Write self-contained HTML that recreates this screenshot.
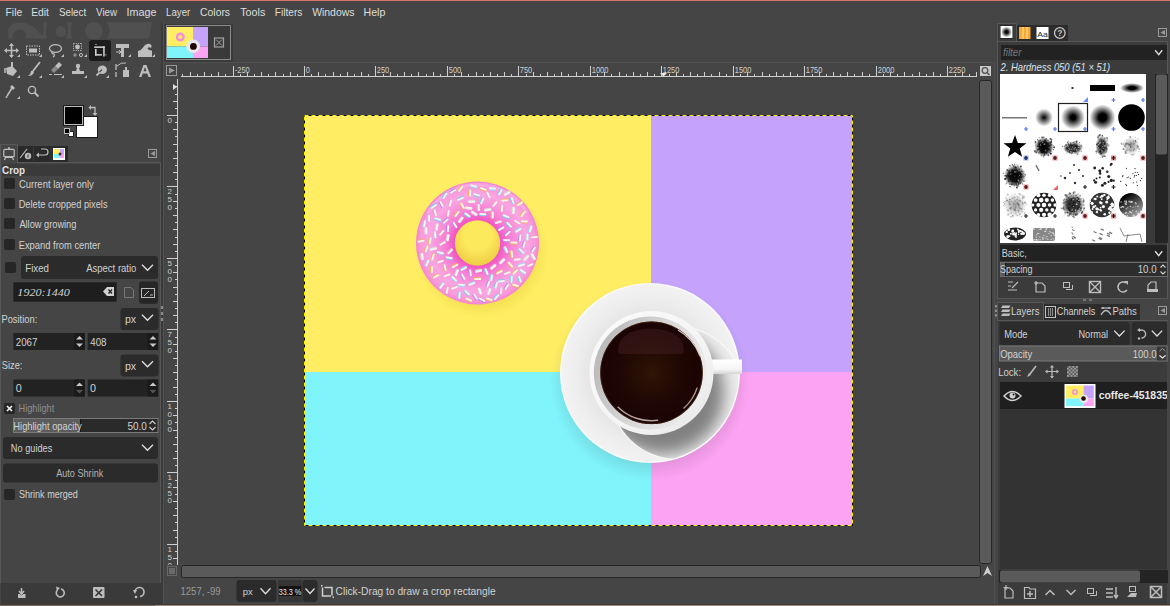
<!DOCTYPE html>
<html><head><meta charset="utf-8">
<style>
html,body{margin:0;padding:0;background:#454545;width:1170px;height:606px;overflow:hidden}
svg{display:block}
text{font-family:"Liberation Sans",sans-serif}
</style></head><body>
<svg width="1170" height="606" viewBox="0 0 1170 606">
<rect x="0" y="0" width="1170" height="606" fill="#454545" />
<rect x="0" y="0" width="1170" height="1" fill="#d4746a" />
<rect x="0" y="604" width="1170" height="1" fill="#3c3c3c" />
<rect x="0" y="605" width="1170" height="1" fill="#a4876e" />
<rect x="0" y="605" width="155" height="1" fill="#7e6654" />
<text x="5.58" y="16" font-size="11" fill="#dedede" textLength="16.6" lengthAdjust="spacingAndGlyphs" >File</text>
<text x="31.17" y="16" font-size="11" fill="#dedede" textLength="17.81" lengthAdjust="spacingAndGlyphs" >Edit</text>
<text x="58.96" y="16" font-size="11" fill="#dedede" textLength="27.23" lengthAdjust="spacingAndGlyphs" >Select</text>
<text x="96.05" y="16" font-size="11" fill="#dedede" textLength="21.14" lengthAdjust="spacingAndGlyphs" >View</text>
<text x="126.53" y="16" font-size="11" fill="#dedede" textLength="29.84" lengthAdjust="spacingAndGlyphs" >Image</text>
<text x="166.02" y="16" font-size="11" fill="#dedede" textLength="24.24" lengthAdjust="spacingAndGlyphs" >Layer</text>
<text x="200.08" y="16" font-size="11" fill="#dedede" textLength="29.98" lengthAdjust="spacingAndGlyphs" >Colors</text>
<text x="240.19" y="16" font-size="11" fill="#dedede" textLength="25.09" lengthAdjust="spacingAndGlyphs" >Tools</text>
<text x="274.69" y="16" font-size="11" fill="#dedede" textLength="27.69" lengthAdjust="spacingAndGlyphs" >Filters</text>
<text x="312.15" y="16" font-size="11" fill="#dedede" textLength="42.34" lengthAdjust="spacingAndGlyphs" >Windows</text>
<text x="363.55" y="16" font-size="11" fill="#dedede" textLength="21.79" lengthAdjust="spacingAndGlyphs" >Help</text>
<path d="M8.2,38.5 V31 Q8.5,22.4 21,22.4 Q31,22.4 41,34.4 L44,38.5 Z" fill="#505050"/>
<circle cx="19.5" cy="36.2" r="6.8" fill="#454545"/>
<path d="M43,22.4 H47.3 Q44.6,30 46.8,38.5 H41.5 Q45,30 43,22.4 Z" fill="#505050"/>
<circle cx="60.9" cy="31.6" r="5.5" fill="#505050"/>
<path d="M66.7,22.4 H72.5 Q69,30 72.5,38.5 H66.2 Q69.6,30 66.7,22.4 Z" fill="#505050"/>
<path d="M106.2,22.2 H152 L149.1,38.5 H106.2 A11.6,11.6 0 0 0 106.2,22.2 Z" fill="#505050"/>
<circle cx="93.9" cy="30.9" r="9" fill="#505050"/>
<rect x="0" y="39" width="160" height="1" fill="#454545" />
<rect x="89" y="40" width="22" height="21" fill="#1c1c1c" rx="3" />
<g fill="none" stroke="#bdbdbd" stroke-width="1.6"><path d="M5,50.5 H18 M11.5,44 V57"/></g>
<g fill="#bdbdbd"><path d="M11.5,43 L9,46 L14,46 Z M11.5,58 L9,55 L14,55 Z M4,50.5 L7,48 L7,53 Z M19,50.5 L16,48 L16,53 Z"/></g>
<path d="M17,57 L20,57 L20,54 Z" fill="#bdbdbd"/>
<rect x="26.5" y="46" width="13" height="9" fill="none" stroke="#bdbdbd" stroke-width="1" stroke-dasharray="1.5,1"/>
<rect x="29" y="48.5" width="8" height="4" fill="#bdbdbd" />
<path d="M39,57 L42,57 L42,54 Z" fill="#bdbdbd"/>
<ellipse cx="55.5" cy="48.5" rx="6" ry="3.8" fill="none" stroke="#bdbdbd" stroke-width="1.3"/>
<path d="M52,51 Q51,54 54,54 Q55,56 53,57" fill="none" stroke="#bdbdbd" stroke-width="1.3"/>
<path d="M61,57 L64,57 L64,54 Z" fill="#bdbdbd"/>
<circle cx="77.5" cy="47" r="2.4" fill="#bdbdbd"/>
<g stroke="#bdbdbd" stroke-width="1" stroke-dasharray="1,1.2" fill="none"><path d="M73.5,43.5 H81.5 M73.5,50.5 H81.5 M73.5,43.5 V50.5 M81.5,43.5 V50.5"/></g>
<circle cx="75" cy="55" r="1.7" fill="#8a8a8a"/><circle cx="81" cy="55" r="1.6" fill="none" stroke="#bdbdbd" stroke-width="1"/>
<path d="M84,57 L87,57 L87,54 Z" fill="#bdbdbd"/>
<rect x="94.2" y="46.4" width="10.5" height="1.5" fill="#d4d4d4" />
<rect x="103.2" y="46.4" width="1.5" height="10.1" fill="#d4d4d4" />
<rect x="95" y="49" width="1.6" height="6.6" fill="#d4d4d4" />
<rect x="95" y="54.1" width="6.9" height="1.5" fill="#d4d4d4" />
<rect x="95.2" y="44" width="1.5" height="1.1" fill="#9a9a9a" />
<rect x="105.1" y="54.1" width="1.5" height="1.4" fill="#7a7a7a" />
<path d="M116,44 H129 V48 H124 V57 H121 V48 H116 Z" fill="#bdbdbd"/>
<path d="M116,52 H121 M119,50 L121,52 L119,54" fill="none" stroke="#bdbdbd" stroke-width="1"/>
<path d="M128,57 L131,57 L131,54 Z" fill="#bdbdbd"/>
<path d="M138,57 V51 Q141,50.5 143,47.5 Q146,43 150,44 Q152.5,45.5 151,48 Q149,46.5 147.5,48.5 Q149,51 152,50.5 V57 Z" fill="#bdbdbd"/>
<path d="M152,57 L155,57 L155,54 Z" fill="#bdbdbd"/>
<path d="M6,68 L12,66 L17,71 L13,76 L7,74 Z" fill="#bdbdbd"/><path d="M5,68 V73" stroke="#bdbdbd" stroke-width="1.5"/>
<rect x="11" y="62" width="2" height="7" fill="#bdbdbd"/>
<path d="M17,78 L20,78 L20,75 Z" fill="#bdbdbd"/>
<path d="M40,62 L33,71" stroke="#bdbdbd" stroke-width="1.8" fill="none"/>
<path d="M31,71 Q33,70 34,72 Q33,76 28,76 Q31,74 31,71 Z" fill="#bdbdbd"/>
<path d="M39,78 L42,78 L42,75 Z" fill="#bdbdbd"/>
<path d="M55,66 L59,62 L62,65 L58,69 Z" fill="#bdbdbd"/><path d="M51,70 L55,66 L58,69 L54,73 Z" fill="#8a8a8a"/>
<rect x="49" y="74" width="3" height="1" fill="#bdbdbd"/><rect x="54" y="74" width="8" height="1" fill="#bdbdbd"/>
<path d="M61,78 L64,78 L64,75 Z" fill="#bdbdbd"/>
<circle cx="78" cy="66" r="2.2" fill="#bdbdbd"/><path d="M77,68 H79 L80,71 H84 V74 H72 V71 H76 Z" fill="#bdbdbd"/>
<path d="M84,78 L87,78 L87,75 Z" fill="#bdbdbd"/>
<path d="M96.5,75.5 L101,71" stroke="#bdbdbd" stroke-width="1.8"/><ellipse cx="102.3" cy="69.8" rx="4.6" ry="4.2" fill="#bdbdbd"/>
<path d="M99.5,72 L102,69.5" stroke="#454545" stroke-width="1.1"/>
<path d="M106,78 L109,78 L109,75 Z" fill="#bdbdbd"/>
<path d="M116,64 V77" stroke="#bdbdbd" stroke-width="1.3"/><path d="M117,66 Q121,62 126,63" fill="none" stroke="#bdbdbd" stroke-width="1"/>
<rect x="115" y="70" width="2" height="2" fill="#454545"/><rect x="123" y="70" width="6" height="7" fill="#bdbdbd"/><rect x="125" y="67" width="2" height="3" fill="#bdbdbd"/>
<path fill-rule="evenodd" d="M139,77 L143.5,65 H146.5 L151,77 H148.5 L147.3,73.5 H142.7 L141.5,77 Z M143.5,71.3 H146.5 L145,67 Z" fill="#bdbdbd"/>
<path d="M7,96 L12,88" stroke="#bdbdbd" stroke-width="1.5"/><path d="M12,85 L15,88 L13,90 L10,87 Z" fill="#bdbdbd"/>
<circle cx="6.5" cy="97" r="1" fill="#bdbdbd"/>
<path d="M17,99 L20,99 L20,96 Z" fill="#bdbdbd"/>
<circle cx="32" cy="90" r="3.6" fill="none" stroke="#bdbdbd" stroke-width="1.4"/><path d="M34.5,92.5 L38.5,96.5" stroke="#bdbdbd" stroke-width="1.8"/>
<rect x="76.5" y="116.5" width="21" height="21" fill="#ffffff" stroke="#1a1a1a" stroke-width="1" />
<rect x="63.5" y="105.5" width="20" height="20" fill="#000000" stroke="#1a1a1a" stroke-width="1" />
<rect x="64.5" y="106.5" width="18" height="18" fill="#000000" stroke="#bdbdbd" stroke-width="1" />
<path d="M90,107.5 H95 V114" fill="none" stroke="#bdbdbd" stroke-width="1.3"/><path d="M88.5,107.5 L91,105 L91,110 Z M95,116 L92.5,113 L97.5,113 Z" fill="#bdbdbd"/>
<rect x="68.5" y="131.5" width="5" height="5" fill="#ffffff" stroke="#222" stroke-width="1" />
<rect x="64.5" y="128.5" width="5" height="5" fill="#000000" stroke="#bbb" stroke-width="1" />
<rect x="17" y="162" width="144" height="1" fill="#585858" />
<rect x="18" y="146" width="50" height="16" fill="#2a2a2a" />
<rect x="33" y="147" width="1" height="14" fill="#3a3a3a" />
<rect x="50.5" y="147" width="1" height="14" fill="#3a3a3a" />
<path d="M0.5,163 V144.5 H17.5 V162" fill="none" stroke="#585858" stroke-width="1"/>
<rect x="1" y="145" width="16" height="17" fill="#454545" />
<rect x="3.8" y="149.3" width="10.4" height="7.4" rx="1" fill="none" stroke="#bdbdbd" stroke-width="1.2"/><path d="M4.5,160 L5.5,157.5 M13.5,160 L12.5,157.5 M5,157.5 H13" stroke="#bdbdbd" stroke-width="1.2"/><rect x="8" y="147.3" width="2" height="1.5" fill="#bdbdbd"/>
<path d="M20,158 L27,149" stroke="#bdbdbd" stroke-width="1.2"/><circle cx="28" cy="156" r="3.2" fill="#bdbdbd"/><rect x="27.5" y="154.5" width="1" height="3" fill="#2c2c2c"/>
<path d="M38,155 H45 Q48,155 48,152 Q48,149 45,149 H41" fill="none" stroke="#bdbdbd" stroke-width="1.2"/><path d="M36,155 L39,152.5 L39,157.5 Z" fill="#bdbdbd"/>
<rect x="53" y="148" width="12" height="12" fill="#ffffff" />
<rect x="54" y="149" width="6" height="5" fill="#ffee64" />
<rect x="60" y="149" width="4" height="5" fill="#c5a3fd" />
<rect x="54" y="154" width="6" height="4" fill="#80f4fb" />
<rect x="60" y="154" width="4" height="4" fill="#fda3f3" />
<circle cx="60" cy="154" r="1.5" fill="#333"/>
<rect x="148.5" y="149.5" width="8" height="8" fill="none" stroke="#9a9a9a" stroke-width="1"/><path d="M150.5,153.5 L155,151 L155,156 Z" fill="#9a9a9a"/>
<rect x="1" y="163" width="159" height="420" fill="#454545" />
<path d="M0.5,163 V583 M160.5,163 V583" stroke="#585858" stroke-width="1"/>
<rect x="2" y="164" width="158" height="12" fill="#3a3a3a" />
<text x="2.11" y="173.5" font-size="10.5" fill="#e4e4e4" textLength="22.92" lengthAdjust="spacingAndGlyphs" font-weight="bold" >Crop</text>
<rect x="4" y="178" width="11" height="11" fill="#262626" rx="2" />
<text x="18.93" y="188" font-size="10.5" fill="#d2d2d2" textLength="74.9" lengthAdjust="spacingAndGlyphs" >Current layer only</text>
<rect x="4" y="198" width="11" height="11" fill="#262626" rx="2" />
<text x="18.66" y="208" font-size="10.5" fill="#d2d2d2" textLength="88.88" lengthAdjust="spacingAndGlyphs" >Delete cropped pixels</text>
<rect x="4" y="218" width="11" height="11" fill="#262626" rx="2" />
<text x="19.4" y="228" font-size="10.5" fill="#d2d2d2" textLength="57.0" lengthAdjust="spacingAndGlyphs" >Allow growing</text>
<rect x="4" y="239" width="11" height="11" fill="#262626" rx="2" />
<text x="18.65" y="249" font-size="10.5" fill="#d2d2d2" textLength="81.81" lengthAdjust="spacingAndGlyphs" >Expand from center</text>
<rect x="5" y="262" width="11" height="11" fill="#262626" rx="2" />
<rect x="21" y="256" width="137" height="23" fill="#2b2b2b" rx="3" />
<text x="25.22" y="272" font-size="10.5" fill="#d2d2d2" textLength="23.71" lengthAdjust="spacingAndGlyphs" >Fixed</text>
<text x="86.2" y="272" font-size="10.5" fill="#d2d2d2" textLength="50.18" lengthAdjust="spacingAndGlyphs" >Aspect ratio</text>
<path d="M142.0,264.75 L147.5,270.25 L153.0,264.75" fill="none" stroke="#e0e0e0" stroke-width="1.3"/>
<rect x="13" y="282" width="104" height="20" fill="#2a2a2a" rx="1" />
<rect x="14" y="283" width="102" height="18" fill="#1e1e1e" />
<text x="17.38" y="296.3" font-size="11" fill="#d2d2d2" textLength="52.52" lengthAdjust="spacingAndGlyphs" font-style="italic" style="font-family:&quot;Liberation Serif&quot;" >1920:1440</text>
<path d="M103,291.5 L107,287 H114 V296 H107 Z" fill="#d0d0d0"/><path d="M108.5,289.5 L112,293.5 M112,289.5 L108.5,293.5" stroke="#1e1e1e" stroke-width="1.2"/>
<path d="M124.5,287.5 H131 L133.5,290 V297.5 H124.5 Z" fill="none" stroke="#777" stroke-width="1"/>
<rect x="139" y="281.5" width="19" height="22.3" fill="#262626" rx="3" />
<rect x="141.5" y="288.5" width="13" height="9" fill="none" stroke="#bbb" stroke-width="1"/><path d="M144,296 L149,291 M150,295 L153,295" stroke="#bbb" stroke-width="1"/>
<text x="1.45" y="323" font-size="10.5" fill="#d2d2d2" textLength="35.79" lengthAdjust="spacingAndGlyphs" >Position:</text>
<rect x="120.5" y="308" width="38" height="22" fill="#2b2b2b" rx="3" />
<text x="124.91" y="323" font-size="10.5" fill="#d2d2d2" textLength="11.21" lengthAdjust="spacingAndGlyphs" >px</text>
<path d="M142.0,314.75 L147.5,320.25 L153.0,314.75" fill="none" stroke="#e0e0e0" stroke-width="1.3"/>
<rect x="13.4" y="333" width="71.3" height="17" fill="#222222" />
<rect x="74.2" y="333" width="10.5" height="17" fill="#1a1a1a" />
<path d="M76.0,339.5 L79.5,336 L83.0,339.5 Z" fill="#c8c8c8"/>
<path d="M76.0,343.5 L79.5,347 L83.0,343.5 Z" fill="#c8c8c8"/>
<text x="15.71" y="345.7" font-size="10.5" fill="#d2d2d2" textLength="21.78" lengthAdjust="spacingAndGlyphs" >2067</text>
<rect x="87.7" y="333" width="70.5" height="17" fill="#222222" />
<rect x="147.7" y="333" width="10.5" height="17" fill="#1a1a1a" />
<path d="M149.5,339.5 L153.0,336 L156.5,339.5 Z" fill="#c8c8c8"/>
<path d="M149.5,343.5 L153.0,347 L156.5,343.5 Z" fill="#c8c8c8"/>
<text x="90.31" y="345.7" font-size="10.5" fill="#d2d2d2" textLength="16.22" lengthAdjust="spacingAndGlyphs" >408</text>
<text x="1.78" y="369" font-size="10.5" fill="#d2d2d2" textLength="20.58" lengthAdjust="spacingAndGlyphs" >Size:</text>
<rect x="120.5" y="354.5" width="38" height="22" fill="#2b2b2b" rx="3" />
<text x="124.91" y="369.5" font-size="10.5" fill="#d2d2d2" textLength="11.21" lengthAdjust="spacingAndGlyphs" >px</text>
<path d="M142.0,361.25 L147.5,366.75 L153.0,361.25" fill="none" stroke="#e0e0e0" stroke-width="1.3"/>
<rect x="13.4" y="379.5" width="71.3" height="17" fill="#222222" />
<rect x="74.2" y="379.5" width="10.5" height="17" fill="#1a1a1a" />
<path d="M76.0,386.0 L79.5,382.5 L83.0,386.0 Z" fill="#c8c8c8"/>
<path d="M76.0,390.0 L79.5,393.5 L83.0,390.0 Z" fill="#555"/>
<text x="15.77" y="392.2" font-size="10.5" fill="#d2d2d2" textLength="6.03" lengthAdjust="spacingAndGlyphs" >0</text>
<rect x="87.7" y="379.5" width="70.5" height="17" fill="#222222" />
<rect x="147.7" y="379.5" width="10.5" height="17" fill="#1a1a1a" />
<path d="M149.5,386.0 L153.0,382.5 L156.5,386.0 Z" fill="#c8c8c8"/>
<path d="M149.5,390.0 L153.0,393.5 L156.5,390.0 Z" fill="#555"/>
<text x="90.07" y="392.2" font-size="10.5" fill="#d2d2d2" textLength="6.03" lengthAdjust="spacingAndGlyphs" >0</text>
<rect x="4" y="403" width="11" height="11" fill="#262626" rx="2" />
<path d="M7,406 L12,411 M12,406 L7,411" stroke="#f0f0f0" stroke-width="1.7"/>
<text x="18.57" y="412" font-size="10.5" fill="#8e8e8e" textLength="35.69" lengthAdjust="spacingAndGlyphs" >Highlight</text>
<rect x="13.5" y="418.5" width="144.5" height="14" fill="#2a2a2a" stroke="#7a7a7a" stroke-width="1" />
<rect x="14" y="419" width="66" height="13" fill="#5c5c5c" />
<rect x="80" y="419" width="1" height="13" fill="#151515" />
<text x="13.36" y="429.5" font-size="10.5" fill="#d2d2d2" textLength="68.32" lengthAdjust="spacingAndGlyphs" >Highlight opacity</text>
<text x="127.4" y="429.5" font-size="10.5" fill="#d2d2d2" textLength="19.36" lengthAdjust="spacingAndGlyphs" >50.0</text>
<path d="M149.5,424 L152.5,421 L155.5,424 M149.5,427 L152.5,430 L155.5,427" fill="none" stroke="#d0d0d0" stroke-width="1.1"/>
<rect x="3" y="437" width="155" height="22" fill="#2b2b2b" rx="3" />
<text x="10.86" y="452" font-size="10.5" fill="#d2d2d2" textLength="41.44" lengthAdjust="spacingAndGlyphs" >No guides</text>
<path d="M142.0,444.75 L147.5,450.25 L153.0,444.75" fill="none" stroke="#e0e0e0" stroke-width="1.3"/>
<rect x="3" y="463.5" width="155" height="19" fill="#2b2b2b" rx="3" />
<text x="56.2" y="476.8" font-size="10.5" fill="#b4b4b4" textLength="47.1" lengthAdjust="spacingAndGlyphs" >Auto Shrink</text>
<rect x="4" y="489" width="11" height="11" fill="#262626" rx="2" />
<text x="18.89" y="498" font-size="10.5" fill="#d2d2d2" textLength="59.03" lengthAdjust="spacingAndGlyphs" >Shrink merged</text>
<rect x="1" y="583" width="160" height="21" fill="#3a3a3a" />
<path d="M21.5,588 V593 M19,591 L21.5,594 L24,591" fill="none" stroke="#bdbdbd" stroke-width="1.5"/><path d="M18,594 H20 L21.5,595.5 L23,594 H25.5 V598 H18 Z" fill="#bdbdbd"/>
<path d="M57.5,590 A4,4 0 1 0 61,589" fill="none" stroke="#bdbdbd" stroke-width="1.6"/><path d="M56,586.5 L60,588 L57,591 Z" fill="#bdbdbd"/>
<rect x="93" y="587" width="11.5" height="11" rx="1" fill="#bdbdbd"/><path d="M95.5,589.5 L102,596 M102,589.5 L95.5,596" stroke="#333" stroke-width="1.6"/>
<path d="M135,592 A4.5,4.5 0 1 1 140,596.5" fill="none" stroke="#bdbdbd" stroke-width="1.6"/><path d="M133,590 L137,590 L135,594 Z" fill="#bdbdbd"/><circle cx="136" cy="597" r="1.3" fill="#bdbdbd"/>
<rect x="161" y="23" width="2" height="581" fill="#3a3a3a" />
<rect x="163" y="23" width="1" height="581" fill="#525252" />
<rect x="161" y="306" width="2" height="3" fill="#8a8a8a" />
<rect x="161" y="312" width="2" height="3" fill="#8a8a8a" />
<rect x="161" y="318" width="2" height="3" fill="#8a8a8a" />
<rect x="164" y="24" width="69" height="38" fill="#3a3a3a" />
<rect x="166.5" y="25.5" width="64" height="34" fill="none" stroke="#d8d8d8" stroke-width="1" stroke-dasharray="1,1"/>
<rect x="167" y="27" width="26" height="19.5" fill="#ffee64" />
<rect x="193" y="27" width="15" height="19.5" fill="#c5a3fd" />
<rect x="167" y="46.5" width="26" height="11.5" fill="#80f4fb" />
<rect x="193" y="46.5" width="15" height="11.5" fill="#fda3f3" />
<circle cx="180.3" cy="37" r="3.3" fill="none" stroke="#f78fd8" stroke-width="2.4"/>
<circle cx="193.2" cy="46.3" r="6.8" fill="#e8e8e8"/><circle cx="193.4" cy="46.4" r="3.4" fill="#1e0806"/>
<rect x="214.5" y="38" width="9" height="9" fill="none" stroke="#a0a0a0" stroke-width="1.2"/><path d="M216,39.5 L222,45.5 M222,39.5 L216,45.5" stroke="#a0a0a0" stroke-width="1"/>
<rect x="164" y="62" width="831" height="1" fill="#505050" />
<rect x="166.5" y="65.5" width="10" height="10" fill="none" stroke="#9a9a9a" stroke-width="1"/><path d="M169,67.5 L175,70.5 L169,73.5 Z" fill="#9a9a9a"/>
<rect x="181" y="76" width="796" height="1" fill="#cfcfcf" />
<rect x="177" y="79" width="1" height="486" fill="#cfcfcf" />
<rect x="182" y="74" width="1" height="2" fill="#cfcfcf" />
<rect x="190" y="72" width="1" height="4" fill="#cfcfcf" />
<rect x="197" y="74" width="1" height="2" fill="#cfcfcf" />
<rect x="204" y="72" width="1" height="4" fill="#cfcfcf" />
<rect x="211" y="74" width="1" height="2" fill="#cfcfcf" />
<rect x="218" y="72" width="1" height="4" fill="#cfcfcf" />
<rect x="225" y="74" width="1" height="2" fill="#cfcfcf" />
<rect x="233" y="66" width="1" height="10" fill="#cfcfcf" />
<text x="234.8" y="73" font-size="8.5" fill="#cfcfcf" textLength="14.97" lengthAdjust="spacingAndGlyphs" >-250</text>
<rect x="240" y="74" width="1" height="2" fill="#cfcfcf" />
<rect x="247" y="72" width="1" height="4" fill="#cfcfcf" />
<rect x="254" y="74" width="1" height="2" fill="#cfcfcf" />
<rect x="261" y="72" width="1" height="4" fill="#cfcfcf" />
<rect x="268" y="74" width="1" height="2" fill="#cfcfcf" />
<rect x="275" y="72" width="1" height="4" fill="#cfcfcf" />
<rect x="283" y="74" width="1" height="2" fill="#cfcfcf" />
<rect x="290" y="72" width="1" height="4" fill="#cfcfcf" />
<rect x="297" y="74" width="1" height="2" fill="#cfcfcf" />
<rect x="304" y="66" width="1" height="10" fill="#cfcfcf" />
<text x="305.8" y="73" font-size="8.5" fill="#cfcfcf" textLength="4.16" lengthAdjust="spacingAndGlyphs" >0</text>
<rect x="311" y="74" width="1" height="2" fill="#cfcfcf" />
<rect x="318" y="72" width="1" height="4" fill="#cfcfcf" />
<rect x="325" y="74" width="1" height="2" fill="#cfcfcf" />
<rect x="333" y="72" width="1" height="4" fill="#cfcfcf" />
<rect x="340" y="74" width="1" height="2" fill="#cfcfcf" />
<rect x="347" y="72" width="1" height="4" fill="#cfcfcf" />
<rect x="354" y="74" width="1" height="2" fill="#cfcfcf" />
<rect x="361" y="72" width="1" height="4" fill="#cfcfcf" />
<rect x="368" y="74" width="1" height="2" fill="#cfcfcf" />
<rect x="375" y="66" width="1" height="10" fill="#cfcfcf" />
<text x="376.8" y="73" font-size="8.5" fill="#cfcfcf" textLength="12.48" lengthAdjust="spacingAndGlyphs" >250</text>
<rect x="383" y="74" width="1" height="2" fill="#cfcfcf" />
<rect x="390" y="72" width="1" height="4" fill="#cfcfcf" />
<rect x="397" y="74" width="1" height="2" fill="#cfcfcf" />
<rect x="404" y="72" width="1" height="4" fill="#cfcfcf" />
<rect x="411" y="74" width="1" height="2" fill="#cfcfcf" />
<rect x="418" y="72" width="1" height="4" fill="#cfcfcf" />
<rect x="426" y="74" width="1" height="2" fill="#cfcfcf" />
<rect x="433" y="72" width="1" height="4" fill="#cfcfcf" />
<rect x="440" y="74" width="1" height="2" fill="#cfcfcf" />
<rect x="447" y="66" width="1" height="10" fill="#cfcfcf" />
<text x="448.8" y="73" font-size="8.5" fill="#cfcfcf" textLength="12.48" lengthAdjust="spacingAndGlyphs" >500</text>
<rect x="454" y="74" width="1" height="2" fill="#cfcfcf" />
<rect x="461" y="72" width="1" height="4" fill="#cfcfcf" />
<rect x="468" y="74" width="1" height="2" fill="#cfcfcf" />
<rect x="476" y="72" width="1" height="4" fill="#cfcfcf" />
<rect x="483" y="74" width="1" height="2" fill="#cfcfcf" />
<rect x="490" y="72" width="1" height="4" fill="#cfcfcf" />
<rect x="497" y="74" width="1" height="2" fill="#cfcfcf" />
<rect x="504" y="72" width="1" height="4" fill="#cfcfcf" />
<rect x="511" y="74" width="1" height="2" fill="#cfcfcf" />
<rect x="518" y="66" width="1" height="10" fill="#cfcfcf" />
<text x="519.8" y="73" font-size="8.5" fill="#cfcfcf" textLength="12.48" lengthAdjust="spacingAndGlyphs" >750</text>
<rect x="526" y="74" width="1" height="2" fill="#cfcfcf" />
<rect x="533" y="72" width="1" height="4" fill="#cfcfcf" />
<rect x="540" y="74" width="1" height="2" fill="#cfcfcf" />
<rect x="547" y="72" width="1" height="4" fill="#cfcfcf" />
<rect x="554" y="74" width="1" height="2" fill="#cfcfcf" />
<rect x="561" y="72" width="1" height="4" fill="#cfcfcf" />
<rect x="568" y="74" width="1" height="2" fill="#cfcfcf" />
<rect x="576" y="72" width="1" height="4" fill="#cfcfcf" />
<rect x="583" y="74" width="1" height="2" fill="#cfcfcf" />
<rect x="590" y="66" width="1" height="10" fill="#cfcfcf" />
<text x="591.8" y="73" font-size="8.5" fill="#cfcfcf" textLength="16.64" lengthAdjust="spacingAndGlyphs" >1000</text>
<rect x="597" y="74" width="1" height="2" fill="#cfcfcf" />
<rect x="604" y="72" width="1" height="4" fill="#cfcfcf" />
<rect x="611" y="74" width="1" height="2" fill="#cfcfcf" />
<rect x="619" y="72" width="1" height="4" fill="#cfcfcf" />
<rect x="626" y="74" width="1" height="2" fill="#cfcfcf" />
<rect x="633" y="72" width="1" height="4" fill="#cfcfcf" />
<rect x="640" y="74" width="1" height="2" fill="#cfcfcf" />
<rect x="647" y="72" width="1" height="4" fill="#cfcfcf" />
<rect x="654" y="74" width="1" height="2" fill="#cfcfcf" />
<rect x="661" y="66" width="1" height="10" fill="#cfcfcf" />
<text x="662.8" y="73" font-size="8.5" fill="#cfcfcf" textLength="16.64" lengthAdjust="spacingAndGlyphs" >1250</text>
<rect x="669" y="74" width="1" height="2" fill="#cfcfcf" />
<rect x="676" y="72" width="1" height="4" fill="#cfcfcf" />
<rect x="683" y="74" width="1" height="2" fill="#cfcfcf" />
<rect x="690" y="72" width="1" height="4" fill="#cfcfcf" />
<rect x="697" y="74" width="1" height="2" fill="#cfcfcf" />
<rect x="704" y="72" width="1" height="4" fill="#cfcfcf" />
<rect x="711" y="74" width="1" height="2" fill="#cfcfcf" />
<rect x="719" y="72" width="1" height="4" fill="#cfcfcf" />
<rect x="726" y="74" width="1" height="2" fill="#cfcfcf" />
<rect x="733" y="66" width="1" height="10" fill="#cfcfcf" />
<text x="734.8" y="73" font-size="8.5" fill="#cfcfcf" textLength="16.64" lengthAdjust="spacingAndGlyphs" >1500</text>
<rect x="740" y="74" width="1" height="2" fill="#cfcfcf" />
<rect x="747" y="72" width="1" height="4" fill="#cfcfcf" />
<rect x="754" y="74" width="1" height="2" fill="#cfcfcf" />
<rect x="762" y="72" width="1" height="4" fill="#cfcfcf" />
<rect x="769" y="74" width="1" height="2" fill="#cfcfcf" />
<rect x="776" y="72" width="1" height="4" fill="#cfcfcf" />
<rect x="783" y="74" width="1" height="2" fill="#cfcfcf" />
<rect x="790" y="72" width="1" height="4" fill="#cfcfcf" />
<rect x="797" y="74" width="1" height="2" fill="#cfcfcf" />
<rect x="804" y="66" width="1" height="10" fill="#cfcfcf" />
<text x="805.8" y="73" font-size="8.5" fill="#cfcfcf" textLength="16.64" lengthAdjust="spacingAndGlyphs" >1750</text>
<rect x="812" y="74" width="1" height="2" fill="#cfcfcf" />
<rect x="819" y="72" width="1" height="4" fill="#cfcfcf" />
<rect x="826" y="74" width="1" height="2" fill="#cfcfcf" />
<rect x="833" y="72" width="1" height="4" fill="#cfcfcf" />
<rect x="840" y="74" width="1" height="2" fill="#cfcfcf" />
<rect x="847" y="72" width="1" height="4" fill="#cfcfcf" />
<rect x="854" y="74" width="1" height="2" fill="#cfcfcf" />
<rect x="862" y="72" width="1" height="4" fill="#cfcfcf" />
<rect x="869" y="74" width="1" height="2" fill="#cfcfcf" />
<rect x="876" y="66" width="1" height="10" fill="#cfcfcf" />
<text x="877.8" y="73" font-size="8.5" fill="#cfcfcf" textLength="16.64" lengthAdjust="spacingAndGlyphs" >2000</text>
<rect x="883" y="74" width="1" height="2" fill="#cfcfcf" />
<rect x="890" y="72" width="1" height="4" fill="#cfcfcf" />
<rect x="897" y="74" width="1" height="2" fill="#cfcfcf" />
<rect x="904" y="72" width="1" height="4" fill="#cfcfcf" />
<rect x="912" y="74" width="1" height="2" fill="#cfcfcf" />
<rect x="919" y="72" width="1" height="4" fill="#cfcfcf" />
<rect x="926" y="74" width="1" height="2" fill="#cfcfcf" />
<rect x="933" y="72" width="1" height="4" fill="#cfcfcf" />
<rect x="940" y="74" width="1" height="2" fill="#cfcfcf" />
<rect x="947" y="66" width="1" height="10" fill="#cfcfcf" />
<text x="948.8" y="73" font-size="8.5" fill="#cfcfcf" textLength="16.64" lengthAdjust="spacingAndGlyphs" >2250</text>
<rect x="955" y="74" width="1" height="2" fill="#cfcfcf" />
<rect x="962" y="72" width="1" height="4" fill="#cfcfcf" />
<rect x="969" y="74" width="1" height="2" fill="#cfcfcf" />
<rect x="976" y="72" width="1" height="4" fill="#cfcfcf" />
<clipPath id="vrclip"><rect x="164" y="79" width="16" height="486"/></clipPath><g clip-path="url(#vrclip)">
<rect x="173" y="86" width="4" height="1" fill="#cfcfcf" />
<rect x="175" y="94" width="2" height="1" fill="#cfcfcf" />
<rect x="173" y="101" width="4" height="1" fill="#cfcfcf" />
<rect x="175" y="108" width="2" height="1" fill="#cfcfcf" />
<rect x="167" y="115" width="10" height="1" fill="#cfcfcf" />
<text x="167.4" y="123.0" font-size="8" fill="#cfcfcf" >0</text>
<rect x="175" y="122" width="2" height="1" fill="#cfcfcf" />
<rect x="173" y="129" width="4" height="1" fill="#cfcfcf" />
<rect x="175" y="136" width="2" height="1" fill="#cfcfcf" />
<rect x="173" y="144" width="4" height="1" fill="#cfcfcf" />
<rect x="175" y="151" width="2" height="1" fill="#cfcfcf" />
<rect x="173" y="158" width="4" height="1" fill="#cfcfcf" />
<rect x="175" y="165" width="2" height="1" fill="#cfcfcf" />
<rect x="173" y="172" width="4" height="1" fill="#cfcfcf" />
<rect x="175" y="179" width="2" height="1" fill="#cfcfcf" />
<rect x="167" y="186" width="10" height="1" fill="#cfcfcf" />
<text x="167.4" y="194.0" font-size="8" fill="#cfcfcf" >2</text>
<text x="167.4" y="201.8" font-size="8" fill="#cfcfcf" >5</text>
<text x="167.4" y="209.6" font-size="8" fill="#cfcfcf" >0</text>
<rect x="175" y="194" width="2" height="1" fill="#cfcfcf" />
<rect x="173" y="201" width="4" height="1" fill="#cfcfcf" />
<rect x="175" y="208" width="2" height="1" fill="#cfcfcf" />
<rect x="173" y="215" width="4" height="1" fill="#cfcfcf" />
<rect x="175" y="222" width="2" height="1" fill="#cfcfcf" />
<rect x="173" y="229" width="4" height="1" fill="#cfcfcf" />
<rect x="175" y="237" width="2" height="1" fill="#cfcfcf" />
<rect x="173" y="244" width="4" height="1" fill="#cfcfcf" />
<rect x="175" y="251" width="2" height="1" fill="#cfcfcf" />
<rect x="167" y="258" width="10" height="1" fill="#cfcfcf" />
<text x="167.4" y="266.0" font-size="8" fill="#cfcfcf" >5</text>
<text x="167.4" y="273.8" font-size="8" fill="#cfcfcf" >0</text>
<text x="167.4" y="281.6" font-size="8" fill="#cfcfcf" >0</text>
<rect x="175" y="265" width="2" height="1" fill="#cfcfcf" />
<rect x="173" y="272" width="4" height="1" fill="#cfcfcf" />
<rect x="175" y="279" width="2" height="1" fill="#cfcfcf" />
<rect x="173" y="287" width="4" height="1" fill="#cfcfcf" />
<rect x="175" y="294" width="2" height="1" fill="#cfcfcf" />
<rect x="173" y="301" width="4" height="1" fill="#cfcfcf" />
<rect x="175" y="308" width="2" height="1" fill="#cfcfcf" />
<rect x="173" y="315" width="4" height="1" fill="#cfcfcf" />
<rect x="175" y="322" width="2" height="1" fill="#cfcfcf" />
<rect x="167" y="329" width="10" height="1" fill="#cfcfcf" />
<text x="167.4" y="337.0" font-size="8" fill="#cfcfcf" >7</text>
<text x="167.4" y="344.8" font-size="8" fill="#cfcfcf" >5</text>
<text x="167.4" y="352.6" font-size="8" fill="#cfcfcf" >0</text>
<rect x="175" y="337" width="2" height="1" fill="#cfcfcf" />
<rect x="173" y="344" width="4" height="1" fill="#cfcfcf" />
<rect x="175" y="351" width="2" height="1" fill="#cfcfcf" />
<rect x="173" y="358" width="4" height="1" fill="#cfcfcf" />
<rect x="175" y="365" width="2" height="1" fill="#cfcfcf" />
<rect x="173" y="372" width="4" height="1" fill="#cfcfcf" />
<rect x="175" y="379" width="2" height="1" fill="#cfcfcf" />
<rect x="173" y="387" width="4" height="1" fill="#cfcfcf" />
<rect x="175" y="394" width="2" height="1" fill="#cfcfcf" />
<rect x="167" y="401" width="10" height="1" fill="#cfcfcf" />
<text x="167.4" y="409.0" font-size="8" fill="#cfcfcf" >1</text>
<text x="167.4" y="416.8" font-size="8" fill="#cfcfcf" >0</text>
<text x="167.4" y="424.6" font-size="8" fill="#cfcfcf" >0</text>
<text x="167.4" y="432.4" font-size="8" fill="#cfcfcf" >0</text>
<rect x="175" y="408" width="2" height="1" fill="#cfcfcf" />
<rect x="173" y="415" width="4" height="1" fill="#cfcfcf" />
<rect x="175" y="422" width="2" height="1" fill="#cfcfcf" />
<rect x="173" y="430" width="4" height="1" fill="#cfcfcf" />
<rect x="175" y="437" width="2" height="1" fill="#cfcfcf" />
<rect x="173" y="444" width="4" height="1" fill="#cfcfcf" />
<rect x="175" y="451" width="2" height="1" fill="#cfcfcf" />
<rect x="173" y="458" width="4" height="1" fill="#cfcfcf" />
<rect x="175" y="465" width="2" height="1" fill="#cfcfcf" />
<rect x="167" y="472" width="10" height="1" fill="#cfcfcf" />
<text x="167.4" y="480.0" font-size="8" fill="#cfcfcf" >1</text>
<text x="167.4" y="487.8" font-size="8" fill="#cfcfcf" >2</text>
<text x="167.4" y="495.6" font-size="8" fill="#cfcfcf" >5</text>
<text x="167.4" y="503.4" font-size="8" fill="#cfcfcf" >0</text>
<rect x="175" y="480" width="2" height="1" fill="#cfcfcf" />
<rect x="173" y="487" width="4" height="1" fill="#cfcfcf" />
<rect x="175" y="494" width="2" height="1" fill="#cfcfcf" />
<rect x="173" y="501" width="4" height="1" fill="#cfcfcf" />
<rect x="175" y="508" width="2" height="1" fill="#cfcfcf" />
<rect x="173" y="515" width="4" height="1" fill="#cfcfcf" />
<rect x="175" y="522" width="2" height="1" fill="#cfcfcf" />
<rect x="173" y="530" width="4" height="1" fill="#cfcfcf" />
<rect x="175" y="537" width="2" height="1" fill="#cfcfcf" />
<rect x="167" y="544" width="10" height="1" fill="#cfcfcf" />
<text x="167.4" y="552.0" font-size="8" fill="#cfcfcf" >1</text>
<text x="167.4" y="559.8" font-size="8" fill="#cfcfcf" >5</text>
<text x="167.4" y="567.6" font-size="8" fill="#cfcfcf" >0</text>
<text x="167.4" y="575.4" font-size="8" fill="#cfcfcf" >0</text>
<rect x="175" y="551" width="2" height="1" fill="#cfcfcf" />
<rect x="173" y="558" width="4" height="1" fill="#cfcfcf" />
</g>
<path d="M660,73 L667,73 L663.5,76.5 Z" fill="#e8e8e8"/>
<path d="M173,84 L177,87 L173,90 Z" fill="#e0e0e0"/>
<rect x="980" y="66" width="11" height="10" fill="#c8c8c8" />
<circle cx="985" cy="70.5" r="2.8" fill="none" stroke="#555" stroke-width="1.3"/><path d="M987,72.5 L989.5,75" stroke="#555" stroke-width="1.5"/>
<rect x="979.5" y="80.5" width="12" height="483" fill="#5a5a5a" rx="2" stroke="#262626" stroke-width="1" />
<rect x="181.5" y="565.5" width="799" height="12" fill="#5a5a5a" rx="2" stroke="#262626" stroke-width="1" />
<rect x="167.5" y="566.5" width="9" height="9" fill="none" stroke="#8a8a8a" stroke-width="1" stroke-dasharray="1,1"/>
<rect x="169" y="568" width="6" height="6" fill="#6a6a6a" />
<path d="M983,576 L987.5,566 L992,576 L987.5,573 Z" fill="#cfcfcf"/>
<rect x="994" y="62" width="1" height="542" fill="#505050" />
<rect x="304" y="115" width="347" height="257" fill="#ffee64" />
<rect x="651" y="115" width="202" height="257" fill="#c5a3fd" />
<rect x="304" y="372" width="347" height="154" fill="#80f4fb" />
<rect x="651" y="372" width="202" height="154" fill="#fda3f3" />
<defs>
<radialGradient id="donutG" cx="0.5" cy="0.5" r="0.5">
<stop offset="0.36" stop-color="#f050c0"/>
<stop offset="0.52" stop-color="#f77fd4"/>
<stop offset="0.78" stop-color="#faa6e2"/>
<stop offset="0.93" stop-color="#f99ad9"/>
<stop offset="1" stop-color="#f584d2"/>
</radialGradient>
<radialGradient id="donutShadow" cx="0.5" cy="0.5" r="0.5">
<stop offset="0.7" stop-color="#d8b820" stop-opacity="0.35"/>
<stop offset="1" stop-color="#d8b820" stop-opacity="0"/>
</radialGradient>
<radialGradient id="holeG" cx="0.5" cy="0.35" r="0.6">
<stop offset="0.5" stop-color="#fde95c"/>
<stop offset="1" stop-color="#f0d048"/>
</radialGradient>
<radialGradient id="coffeeG" cx="0.5" cy="0.5" r="0.5">
<stop offset="0" stop-color="#2e1505"/>
<stop offset="0.6" stop-color="#1f0704"/>
<stop offset="1" stop-color="#1a0303"/>
</radialGradient>
<radialGradient id="saucerShadow" cx="0.5" cy="0.5" r="0.5">
<stop offset="0.7" stop-color="#000" stop-opacity="0.16"/>
<stop offset="1" stop-color="#000" stop-opacity="0"/>
</radialGradient>
<radialGradient id="cupShadow" gradientUnits="userSpaceOnUse" cx="655" cy="377" r="92" fx="655" fy="377">
<stop offset="0.66" stop-color="#7a7a7a"/>
<stop offset="0.78" stop-color="#b4b4b4"/>
<stop offset="1" stop-color="#ececec"/>
</radialGradient>
<linearGradient id="handleG" x1="0" y1="0" x2="0" y2="1">
<stop offset="0" stop-color="#ffffff"/>
<stop offset="0.7" stop-color="#f4f4f4"/>
<stop offset="1" stop-color="#d4d4d4"/>
</linearGradient>
<linearGradient id="wallG" x1="0" y1="0.3" x2="1" y2="0.7">
<stop offset="0" stop-color="#b8b8b8"/>
<stop offset="0.5" stop-color="#d8d8d8"/>
<stop offset="1" stop-color="#f0f0f0"/>
</linearGradient>
<linearGradient id="cupRim" x1="0" y1="0" x2="1" y2="1">
<stop offset="0" stop-color="#fbfbfb"/>
<stop offset="0.6" stop-color="#f4f4f4"/>
<stop offset="1" stop-color="#e6e6e6"/>
</linearGradient>
<radialGradient id="saucerG" cx="0.5" cy="0.5" r="0.5">
<stop offset="0.6" stop-color="#e2e2e2"/>
<stop offset="0.85" stop-color="#eeeeee"/>
<stop offset="1" stop-color="#f2f2f2"/>
</radialGradient>
<clipPath id="imgclip"><rect x="304" y="115" width="549" height="411"/></clipPath>
</defs>
<g clip-path="url(#imgclip)">
<circle cx="481.5" cy="251" r="67.5" fill="url(#donutShadow)"/>
<circle cx="477.5" cy="243" r="61.5" fill="url(#donutG)"/>
<path d="M427.5,213 A58,58 0 0 1 527.5,213" fill="none" stroke="#fcc0ea" stroke-width="3" opacity="0.5"/>
<circle cx="477.5" cy="243" r="22.7" fill="url(#holeG)"/>
<g transform="translate(432.5,256.9) rotate(108)"><rect x="-3.5" y="-1.5" width="7" height="3" rx="1" fill="#f5b060"/><rect x="-3.5" y="-1.5" width="7" height="1.9" rx="0.9" fill="#f4f4f4"/></g>
<g transform="translate(517.0,222.6) rotate(31)"><rect x="-3.5" y="-1.5" width="7" height="3" rx="1" fill="#f0a0c0"/><rect x="-3.5" y="-1.5" width="7" height="1.9" rx="0.9" fill="#f4f4f4"/></g>
<g transform="translate(429.7,240.6) rotate(99)"><rect x="-3.5" y="-1.5" width="7" height="3" rx="1" fill="#f5b060"/><rect x="-3.5" y="-1.5" width="7" height="1.9" rx="0.9" fill="#f4f4f4"/></g>
<g transform="translate(495.8,285.0) rotate(107)"><rect x="-3.5" y="-1.5" width="7" height="3" rx="1" fill="#7fc8f0"/><rect x="-3.5" y="-1.5" width="7" height="1.9" rx="0.9" fill="#f4f4f4"/></g>
<g transform="translate(441.1,204.3) rotate(63)"><rect x="-3.5" y="-1.5" width="7" height="3" rx="1" fill="#b88af0"/><rect x="-3.5" y="-1.5" width="7" height="1.9" rx="0.9" fill="#f4f4f4"/></g>
<g transform="translate(510.2,265.0) rotate(48)"><rect x="-3.5" y="-1.5" width="7" height="3" rx="1" fill="#f5b060"/><rect x="-3.5" y="-1.5" width="7" height="1.9" rx="0.9" fill="#f4f4f4"/></g>
<g transform="translate(522.6,271.9) rotate(37)"><rect x="-3.5" y="-1.5" width="7" height="3" rx="1" fill="#9ad4f5"/><rect x="-3.5" y="-1.5" width="7" height="1.9" rx="0.9" fill="#f4f4f4"/></g>
<g transform="translate(467.2,215.3) rotate(34)"><rect x="-3.5" y="-1.5" width="7" height="3" rx="1" fill="#7fc8f0"/><rect x="-3.5" y="-1.5" width="7" height="1.9" rx="0.9" fill="#f4f4f4"/></g>
<g transform="translate(534.3,236.6) rotate(175)"><rect x="-3.5" y="-1.5" width="7" height="3" rx="1" fill="#f0a0c0"/><rect x="-3.5" y="-1.5" width="7" height="1.9" rx="0.9" fill="#f4f4f4"/></g>
<g transform="translate(449.9,203.0) rotate(105)"><rect x="-3.5" y="-1.5" width="7" height="3" rx="1" fill="#f0a0c0"/><rect x="-3.5" y="-1.5" width="7" height="1.9" rx="0.9" fill="#f4f4f4"/></g>
<g transform="translate(493.1,266.7) rotate(140)"><rect x="-3.5" y="-1.5" width="7" height="3" rx="1" fill="#d8d8d8"/><rect x="-3.5" y="-1.5" width="7" height="1.9" rx="0.9" fill="#f4f4f4"/></g>
<g transform="translate(447.6,237.6) rotate(100)"><rect x="-3.5" y="-1.5" width="7" height="3" rx="1" fill="#d8d8d8"/><rect x="-3.5" y="-1.5" width="7" height="1.9" rx="0.9" fill="#f4f4f4"/></g>
<g transform="translate(491.2,277.8) rotate(100)"><rect x="-3.5" y="-1.5" width="7" height="3" rx="1" fill="#9ad4f5"/><rect x="-3.5" y="-1.5" width="7" height="1.9" rx="0.9" fill="#f4f4f4"/></g>
<g transform="translate(521.1,251.3) rotate(44)"><rect x="-3.5" y="-1.5" width="7" height="3" rx="1" fill="#7fc8f0"/><rect x="-3.5" y="-1.5" width="7" height="1.9" rx="0.9" fill="#f4f4f4"/></g>
<g transform="translate(426.9,262.8) rotate(115)"><rect x="-3.5" y="-1.5" width="7" height="3" rx="1" fill="#9ad4f5"/><rect x="-3.5" y="-1.5" width="7" height="1.9" rx="0.9" fill="#f4f4f4"/></g>
<g transform="translate(440.3,253.2) rotate(13)"><rect x="-3.5" y="-1.5" width="7" height="3" rx="1" fill="#9ad4f5"/><rect x="-3.5" y="-1.5" width="7" height="1.9" rx="0.9" fill="#f4f4f4"/></g>
<g transform="translate(504.9,199.9) rotate(173)"><rect x="-3.5" y="-1.5" width="7" height="3" rx="1" fill="#f5b060"/><rect x="-3.5" y="-1.5" width="7" height="1.9" rx="0.9" fill="#f4f4f4"/></g>
<g transform="translate(462.8,276.9) rotate(62)"><rect x="-3.5" y="-1.5" width="7" height="3" rx="1" fill="#b88af0"/><rect x="-3.5" y="-1.5" width="7" height="1.9" rx="0.9" fill="#f4f4f4"/></g>
<g transform="translate(470.0,272.9) rotate(84)"><rect x="-3.5" y="-1.5" width="7" height="3" rx="1" fill="#b88af0"/><rect x="-3.5" y="-1.5" width="7" height="1.9" rx="0.9" fill="#f4f4f4"/></g>
<g transform="translate(481.8,200.7) rotate(115)"><rect x="-3.5" y="-1.5" width="7" height="3" rx="1" fill="#7fc8f0"/><rect x="-3.5" y="-1.5" width="7" height="1.9" rx="0.9" fill="#f4f4f4"/></g>
<g transform="translate(501.5,208.4) rotate(95)"><rect x="-3.5" y="-1.5" width="7" height="3" rx="1" fill="#f0a0c0"/><rect x="-3.5" y="-1.5" width="7" height="1.9" rx="0.9" fill="#f4f4f4"/></g>
<g transform="translate(530.1,228.8) rotate(108)"><rect x="-3.5" y="-1.5" width="7" height="3" rx="1" fill="#9ad4f5"/><rect x="-3.5" y="-1.5" width="7" height="1.9" rx="0.9" fill="#f4f4f4"/></g>
<g transform="translate(513.7,243.1) rotate(4)"><rect x="-3.5" y="-1.5" width="7" height="3" rx="1" fill="#f5b060"/><rect x="-3.5" y="-1.5" width="7" height="1.9" rx="0.9" fill="#f4f4f4"/></g>
<g transform="translate(519.6,237.8) rotate(96)"><rect x="-3.5" y="-1.5" width="7" height="3" rx="1" fill="#b88af0"/><rect x="-3.5" y="-1.5" width="7" height="1.9" rx="0.9" fill="#f4f4f4"/></g>
<g transform="translate(521.4,264.7) rotate(162)"><rect x="-3.5" y="-1.5" width="7" height="3" rx="1" fill="#9ad4f5"/><rect x="-3.5" y="-1.5" width="7" height="1.9" rx="0.9" fill="#f4f4f4"/></g>
<g transform="translate(502.0,261.0) rotate(135)"><rect x="-3.5" y="-1.5" width="7" height="3" rx="1" fill="#d8d8d8"/><rect x="-3.5" y="-1.5" width="7" height="1.9" rx="0.9" fill="#f4f4f4"/></g>
<g transform="translate(487.7,209.5) rotate(171)"><rect x="-3.5" y="-1.5" width="7" height="3" rx="1" fill="#d8d8d8"/><rect x="-3.5" y="-1.5" width="7" height="1.9" rx="0.9" fill="#f4f4f4"/></g>
<g transform="translate(436.6,227.0) rotate(97)"><rect x="-3.5" y="-1.5" width="7" height="3" rx="1" fill="#d8d8d8"/><rect x="-3.5" y="-1.5" width="7" height="1.9" rx="0.9" fill="#f4f4f4"/></g>
<g transform="translate(511.1,279.2) rotate(93)"><rect x="-3.5" y="-1.5" width="7" height="3" rx="1" fill="#7fc8f0"/><rect x="-3.5" y="-1.5" width="7" height="1.9" rx="0.9" fill="#f4f4f4"/></g>
<g transform="translate(459.0,295.2) rotate(96)"><rect x="-3.5" y="-1.5" width="7" height="3" rx="1" fill="#7fc8f0"/><rect x="-3.5" y="-1.5" width="7" height="1.9" rx="0.9" fill="#f4f4f4"/></g>
<g transform="translate(487.8,284.0) rotate(111)"><rect x="-3.5" y="-1.5" width="7" height="3" rx="1" fill="#b88af0"/><rect x="-3.5" y="-1.5" width="7" height="1.9" rx="0.9" fill="#f4f4f4"/></g>
<g transform="translate(479.6,291.2) rotate(68)"><rect x="-3.5" y="-1.5" width="7" height="3" rx="1" fill="#d8d8d8"/><rect x="-3.5" y="-1.5" width="7" height="1.9" rx="0.9" fill="#f4f4f4"/></g>
<g transform="translate(447.0,274.8) rotate(162)"><rect x="-3.5" y="-1.5" width="7" height="3" rx="1" fill="#f0a0c0"/><rect x="-3.5" y="-1.5" width="7" height="1.9" rx="0.9" fill="#f4f4f4"/></g>
<g transform="translate(428.5,218.2) rotate(89)"><rect x="-3.5" y="-1.5" width="7" height="3" rx="1" fill="#9ad4f5"/><rect x="-3.5" y="-1.5" width="7" height="1.9" rx="0.9" fill="#f4f4f4"/></g>
<g transform="translate(522.6,213.7) rotate(127)"><rect x="-3.5" y="-1.5" width="7" height="3" rx="1" fill="#f5b060"/><rect x="-3.5" y="-1.5" width="7" height="1.9" rx="0.9" fill="#f4f4f4"/></g>
<g transform="translate(477.6,278.5) rotate(178)"><rect x="-3.5" y="-1.5" width="7" height="3" rx="1" fill="#f5b060"/><rect x="-3.5" y="-1.5" width="7" height="1.9" rx="0.9" fill="#f4f4f4"/></g>
<g transform="translate(473.7,186.5) rotate(15)"><rect x="-3.5" y="-1.5" width="7" height="3" rx="1" fill="#9ad4f5"/><rect x="-3.5" y="-1.5" width="7" height="1.9" rx="0.9" fill="#f4f4f4"/></g>
<g transform="translate(496.2,296.7) rotate(131)"><rect x="-3.5" y="-1.5" width="7" height="3" rx="1" fill="#7fc8f0"/><rect x="-3.5" y="-1.5" width="7" height="1.9" rx="0.9" fill="#f4f4f4"/></g>
<g transform="translate(513.2,210.4) rotate(93)"><rect x="-3.5" y="-1.5" width="7" height="3" rx="1" fill="#d8d8d8"/><rect x="-3.5" y="-1.5" width="7" height="1.9" rx="0.9" fill="#f4f4f4"/></g>
<g transform="translate(449.1,258.3) rotate(10)"><rect x="-3.5" y="-1.5" width="7" height="3" rx="1" fill="#7fc8f0"/><rect x="-3.5" y="-1.5" width="7" height="1.9" rx="0.9" fill="#f4f4f4"/></g>
<g transform="translate(533.0,256.8) rotate(59)"><rect x="-3.5" y="-1.5" width="7" height="3" rx="1" fill="#d8d8d8"/><rect x="-3.5" y="-1.5" width="7" height="1.9" rx="0.9" fill="#f4f4f4"/></g>
<g transform="translate(475.1,296.9) rotate(58)"><rect x="-3.5" y="-1.5" width="7" height="3" rx="1" fill="#b88af0"/><rect x="-3.5" y="-1.5" width="7" height="1.9" rx="0.9" fill="#f4f4f4"/></g>
<g transform="translate(445.4,220.7) rotate(138)"><rect x="-3.5" y="-1.5" width="7" height="3" rx="1" fill="#b88af0"/><rect x="-3.5" y="-1.5" width="7" height="1.9" rx="0.9" fill="#f4f4f4"/></g>
<g transform="translate(508.8,225.1) rotate(48)"><rect x="-3.5" y="-1.5" width="7" height="3" rx="1" fill="#7fc8f0"/><rect x="-3.5" y="-1.5" width="7" height="1.9" rx="0.9" fill="#f4f4f4"/></g>
<g transform="translate(447.6,228.4) rotate(93)"><rect x="-3.5" y="-1.5" width="7" height="3" rx="1" fill="#b88af0"/><rect x="-3.5" y="-1.5" width="7" height="1.9" rx="0.9" fill="#f4f4f4"/></g>
<g transform="translate(441.5,285.3) rotate(125)"><rect x="-3.5" y="-1.5" width="7" height="3" rx="1" fill="#9ad4f5"/><rect x="-3.5" y="-1.5" width="7" height="1.9" rx="0.9" fill="#f4f4f4"/></g>
<g transform="translate(526.9,236.9) rotate(90)"><rect x="-3.5" y="-1.5" width="7" height="3" rx="1" fill="#9ad4f5"/><rect x="-3.5" y="-1.5" width="7" height="1.9" rx="0.9" fill="#f4f4f4"/></g>
<g transform="translate(460.2,198.4) rotate(156)"><rect x="-3.5" y="-1.5" width="7" height="3" rx="1" fill="#7fc8f0"/><rect x="-3.5" y="-1.5" width="7" height="1.9" rx="0.9" fill="#f4f4f4"/></g>
<g transform="translate(533.1,249.3) rotate(122)"><rect x="-3.5" y="-1.5" width="7" height="3" rx="1" fill="#b88af0"/><rect x="-3.5" y="-1.5" width="7" height="1.9" rx="0.9" fill="#f4f4f4"/></g>
<g transform="translate(460.2,188.5) rotate(126)"><rect x="-3.5" y="-1.5" width="7" height="3" rx="1" fill="#f5b060"/><rect x="-3.5" y="-1.5" width="7" height="1.9" rx="0.9" fill="#f4f4f4"/></g>
<g transform="translate(426.2,248.7) rotate(109)"><rect x="-3.5" y="-1.5" width="7" height="3" rx="1" fill="#f5b060"/><rect x="-3.5" y="-1.5" width="7" height="1.9" rx="0.9" fill="#f4f4f4"/></g>
<g transform="translate(492.6,189.0) rotate(3)"><rect x="-3.5" y="-1.5" width="7" height="3" rx="1" fill="#9ad4f5"/><rect x="-3.5" y="-1.5" width="7" height="1.9" rx="0.9" fill="#f4f4f4"/></g>
<g transform="translate(431.4,269.4) rotate(90)"><rect x="-3.5" y="-1.5" width="7" height="3" rx="1" fill="#f5b060"/><rect x="-3.5" y="-1.5" width="7" height="1.9" rx="0.9" fill="#f4f4f4"/></g>
<g transform="translate(447.8,213.3) rotate(99)"><rect x="-3.5" y="-1.5" width="7" height="3" rx="1" fill="#f0a0c0"/><rect x="-3.5" y="-1.5" width="7" height="1.9" rx="0.9" fill="#f4f4f4"/></g>
<g transform="translate(471.7,201.3) rotate(179)"><rect x="-3.5" y="-1.5" width="7" height="3" rx="1" fill="#d8d8d8"/><rect x="-3.5" y="-1.5" width="7" height="1.9" rx="0.9" fill="#f4f4f4"/></g>
<g transform="translate(454.3,287.2) rotate(160)"><rect x="-3.5" y="-1.5" width="7" height="3" rx="1" fill="#f0a0c0"/><rect x="-3.5" y="-1.5" width="7" height="1.9" rx="0.9" fill="#f4f4f4"/></g>
<g transform="translate(498.1,221.8) rotate(163)"><rect x="-3.5" y="-1.5" width="7" height="3" rx="1" fill="#f0a0c0"/><rect x="-3.5" y="-1.5" width="7" height="1.9" rx="0.9" fill="#f4f4f4"/></g>
<g transform="translate(449.8,251.1) rotate(135)"><rect x="-3.5" y="-1.5" width="7" height="3" rx="1" fill="#f0a0c0"/><rect x="-3.5" y="-1.5" width="7" height="1.9" rx="0.9" fill="#f4f4f4"/></g>
<g transform="translate(471.8,283.4) rotate(159)"><rect x="-3.5" y="-1.5" width="7" height="3" rx="1" fill="#9ad4f5"/><rect x="-3.5" y="-1.5" width="7" height="1.9" rx="0.9" fill="#f4f4f4"/></g>
<g transform="translate(435.8,276.0) rotate(150)"><rect x="-3.5" y="-1.5" width="7" height="3" rx="1" fill="#f5b060"/><rect x="-3.5" y="-1.5" width="7" height="1.9" rx="0.9" fill="#f4f4f4"/></g>
<g transform="translate(524.4,221.9) rotate(3)"><rect x="-3.5" y="-1.5" width="7" height="3" rx="1" fill="#f5b060"/><rect x="-3.5" y="-1.5" width="7" height="1.9" rx="0.9" fill="#f4f4f4"/></g>
<g transform="translate(456.6,213.7) rotate(128)"><rect x="-3.5" y="-1.5" width="7" height="3" rx="1" fill="#f5b060"/><rect x="-3.5" y="-1.5" width="7" height="1.9" rx="0.9" fill="#f4f4f4"/></g>
<g transform="translate(425.8,230.8) rotate(90)"><rect x="-3.5" y="-1.5" width="7" height="3" rx="1" fill="#d8d8d8"/><rect x="-3.5" y="-1.5" width="7" height="1.9" rx="0.9" fill="#f4f4f4"/></g>
<g transform="translate(507.4,233.1) rotate(135)"><rect x="-3.5" y="-1.5" width="7" height="3" rx="1" fill="#b88af0"/><rect x="-3.5" y="-1.5" width="7" height="1.9" rx="0.9" fill="#f4f4f4"/></g>
<g transform="translate(454.6,225.2) rotate(58)"><rect x="-3.5" y="-1.5" width="7" height="3" rx="1" fill="#b88af0"/><rect x="-3.5" y="-1.5" width="7" height="1.9" rx="0.9" fill="#f4f4f4"/></g>
<g transform="translate(499.9,192.0) rotate(119)"><rect x="-3.5" y="-1.5" width="7" height="3" rx="1" fill="#7fc8f0"/><rect x="-3.5" y="-1.5" width="7" height="1.9" rx="0.9" fill="#f4f4f4"/></g>
<g transform="translate(482.8,214.7) rotate(2)"><rect x="-3.5" y="-1.5" width="7" height="3" rx="1" fill="#7fc8f0"/><rect x="-3.5" y="-1.5" width="7" height="1.9" rx="0.9" fill="#f4f4f4"/></g>
<g transform="translate(462.1,206.0) rotate(61)"><rect x="-3.5" y="-1.5" width="7" height="3" rx="1" fill="#f5b060"/><rect x="-3.5" y="-1.5" width="7" height="1.9" rx="0.9" fill="#f4f4f4"/></g>
<g transform="translate(434.7,234.7) rotate(85)"><rect x="-3.5" y="-1.5" width="7" height="3" rx="1" fill="#9ad4f5"/><rect x="-3.5" y="-1.5" width="7" height="1.9" rx="0.9" fill="#f4f4f4"/></g>
<g transform="translate(489.0,299.8) rotate(21)"><rect x="-3.5" y="-1.5" width="7" height="3" rx="1" fill="#f5b060"/><rect x="-3.5" y="-1.5" width="7" height="1.9" rx="0.9" fill="#f4f4f4"/></g>
<g transform="translate(530.1,264.6) rotate(155)"><rect x="-3.5" y="-1.5" width="7" height="3" rx="1" fill="#f0a0c0"/><rect x="-3.5" y="-1.5" width="7" height="1.9" rx="0.9" fill="#f4f4f4"/></g>
<g transform="translate(494.4,203.8) rotate(129)"><rect x="-3.5" y="-1.5" width="7" height="3" rx="1" fill="#f0a0c0"/><rect x="-3.5" y="-1.5" width="7" height="1.9" rx="0.9" fill="#f4f4f4"/></g>
<g transform="translate(511.4,254.1) rotate(82)"><rect x="-3.5" y="-1.5" width="7" height="3" rx="1" fill="#f5b060"/><rect x="-3.5" y="-1.5" width="7" height="1.9" rx="0.9" fill="#f4f4f4"/></g>
<g transform="translate(454.8,265.5) rotate(151)"><rect x="-3.5" y="-1.5" width="7" height="3" rx="1" fill="#f5b060"/><rect x="-3.5" y="-1.5" width="7" height="1.9" rx="0.9" fill="#f4f4f4"/></g>
<g transform="translate(434.7,212.9) rotate(72)"><rect x="-3.5" y="-1.5" width="7" height="3" rx="1" fill="#f0a0c0"/><rect x="-3.5" y="-1.5" width="7" height="1.9" rx="0.9" fill="#f4f4f4"/></g>
<g transform="translate(501.4,280.7) rotate(175)"><rect x="-3.5" y="-1.5" width="7" height="3" rx="1" fill="#7fc8f0"/><rect x="-3.5" y="-1.5" width="7" height="1.9" rx="0.9" fill="#f4f4f4"/></g>
<g transform="translate(466.8,293.1) rotate(44)"><rect x="-3.5" y="-1.5" width="7" height="3" rx="1" fill="#7fc8f0"/><rect x="-3.5" y="-1.5" width="7" height="1.9" rx="0.9" fill="#f4f4f4"/></g>
<g transform="translate(506.4,286.5) rotate(123)"><rect x="-3.5" y="-1.5" width="7" height="3" rx="1" fill="#b88af0"/><rect x="-3.5" y="-1.5" width="7" height="1.9" rx="0.9" fill="#f4f4f4"/></g>
<g transform="translate(486.1,271.8) rotate(67)"><rect x="-3.5" y="-1.5" width="7" height="3" rx="1" fill="#7fc8f0"/><rect x="-3.5" y="-1.5" width="7" height="1.9" rx="0.9" fill="#f4f4f4"/></g>
<g transform="translate(519.4,279.4) rotate(70)"><rect x="-3.5" y="-1.5" width="7" height="3" rx="1" fill="#7fc8f0"/><rect x="-3.5" y="-1.5" width="7" height="1.9" rx="0.9" fill="#f4f4f4"/></g>
<g transform="translate(488.0,195.2) rotate(64)"><rect x="-3.5" y="-1.5" width="7" height="3" rx="1" fill="#f0a0c0"/><rect x="-3.5" y="-1.5" width="7" height="1.9" rx="0.9" fill="#f4f4f4"/></g>
<g transform="translate(478.2,207.5) rotate(88)"><rect x="-3.5" y="-1.5" width="7" height="3" rx="1" fill="#f0a0c0"/><rect x="-3.5" y="-1.5" width="7" height="1.9" rx="0.9" fill="#f4f4f4"/></g>
<g transform="translate(444.6,195.5) rotate(124)"><rect x="-3.5" y="-1.5" width="7" height="3" rx="1" fill="#7fc8f0"/><rect x="-3.5" y="-1.5" width="7" height="1.9" rx="0.9" fill="#f4f4f4"/></g>
<g transform="translate(440.2,261.2) rotate(162)"><rect x="-3.5" y="-1.5" width="7" height="3" rx="1" fill="#f0a0c0"/><rect x="-3.5" y="-1.5" width="7" height="1.9" rx="0.9" fill="#f4f4f4"/></g>
<g transform="translate(488.9,291.5) rotate(111)"><rect x="-3.5" y="-1.5" width="7" height="3" rx="1" fill="#d8d8d8"/><rect x="-3.5" y="-1.5" width="7" height="1.9" rx="0.9" fill="#f4f4f4"/></g>
<g transform="translate(469.6,192.9) rotate(92)"><rect x="-3.5" y="-1.5" width="7" height="3" rx="1" fill="#f5b060"/><rect x="-3.5" y="-1.5" width="7" height="1.9" rx="0.9" fill="#f4f4f4"/></g>
<g transform="translate(505.9,216.7) rotate(21)"><rect x="-3.5" y="-1.5" width="7" height="3" rx="1" fill="#7fc8f0"/><rect x="-3.5" y="-1.5" width="7" height="1.9" rx="0.9" fill="#f4f4f4"/></g>
<g transform="translate(468.6,300.1) rotate(24)"><rect x="-3.5" y="-1.5" width="7" height="3" rx="1" fill="#f5b060"/><rect x="-3.5" y="-1.5" width="7" height="1.9" rx="0.9" fill="#f4f4f4"/></g>
<g transform="translate(433.3,248.6) rotate(168)"><rect x="-3.5" y="-1.5" width="7" height="3" rx="1" fill="#d8d8d8"/><rect x="-3.5" y="-1.5" width="7" height="1.9" rx="0.9" fill="#f4f4f4"/></g>
<g transform="translate(421.9,256.6) rotate(85)"><rect x="-3.5" y="-1.5" width="7" height="3" rx="1" fill="#d8d8d8"/><rect x="-3.5" y="-1.5" width="7" height="1.9" rx="0.9" fill="#f4f4f4"/></g>
<g transform="translate(492.2,214.9) rotate(90)"><rect x="-3.5" y="-1.5" width="7" height="3" rx="1" fill="#f5b060"/><rect x="-3.5" y="-1.5" width="7" height="1.9" rx="0.9" fill="#f4f4f4"/></g>
<g transform="translate(483.2,189.5) rotate(20)"><rect x="-3.5" y="-1.5" width="7" height="3" rx="1" fill="#f5b060"/><rect x="-3.5" y="-1.5" width="7" height="1.9" rx="0.9" fill="#f4f4f4"/></g>
<g transform="translate(444.6,267.8) rotate(76)"><rect x="-3.5" y="-1.5" width="7" height="3" rx="1" fill="#f5b060"/><rect x="-3.5" y="-1.5" width="7" height="1.9" rx="0.9" fill="#f4f4f4"/></g>
<g transform="translate(461.4,285.4) rotate(5)"><rect x="-3.5" y="-1.5" width="7" height="3" rx="1" fill="#9ad4f5"/><rect x="-3.5" y="-1.5" width="7" height="1.9" rx="0.9" fill="#f4f4f4"/></g>
<g transform="translate(519.6,203.3) rotate(147)"><rect x="-3.5" y="-1.5" width="7" height="3" rx="1" fill="#f5b060"/><rect x="-3.5" y="-1.5" width="7" height="1.9" rx="0.9" fill="#f4f4f4"/></g>
<g transform="translate(468.7,208.4) rotate(8)"><rect x="-3.5" y="-1.5" width="7" height="3" rx="1" fill="#d8d8d8"/><rect x="-3.5" y="-1.5" width="7" height="1.9" rx="0.9" fill="#f4f4f4"/></g>
<g transform="translate(506.6,240.7) rotate(3)"><rect x="-3.5" y="-1.5" width="7" height="3" rx="1" fill="#b88af0"/><rect x="-3.5" y="-1.5" width="7" height="1.9" rx="0.9" fill="#f4f4f4"/></g>
<g transform="translate(442.4,243.0) rotate(150)"><rect x="-3.5" y="-1.5" width="7" height="3" rx="1" fill="#f0a0c0"/><rect x="-3.5" y="-1.5" width="7" height="1.9" rx="0.9" fill="#f4f4f4"/></g>
<g transform="translate(517.2,259.0) rotate(174)"><rect x="-3.5" y="-1.5" width="7" height="3" rx="1" fill="#f0a0c0"/><rect x="-3.5" y="-1.5" width="7" height="1.9" rx="0.9" fill="#f4f4f4"/></g>
<g transform="translate(499.2,271.8) rotate(152)"><rect x="-3.5" y="-1.5" width="7" height="3" rx="1" fill="#f5b060"/><rect x="-3.5" y="-1.5" width="7" height="1.9" rx="0.9" fill="#f4f4f4"/></g>
<g transform="translate(453.9,279.2) rotate(45)"><rect x="-3.5" y="-1.5" width="7" height="3" rx="1" fill="#9ad4f5"/><rect x="-3.5" y="-1.5" width="7" height="1.9" rx="0.9" fill="#f4f4f4"/></g>
<g transform="translate(507.0,272.6) rotate(159)"><rect x="-3.5" y="-1.5" width="7" height="3" rx="1" fill="#f0a0c0"/><rect x="-3.5" y="-1.5" width="7" height="1.9" rx="0.9" fill="#f4f4f4"/></g>
<g transform="translate(463.6,268.3) rotate(151)"><rect x="-3.5" y="-1.5" width="7" height="3" rx="1" fill="#9ad4f5"/><rect x="-3.5" y="-1.5" width="7" height="1.9" rx="0.9" fill="#f4f4f4"/></g>
<g transform="translate(518.0,229.9) rotate(147)"><rect x="-3.5" y="-1.5" width="7" height="3" rx="1" fill="#9ad4f5"/><rect x="-3.5" y="-1.5" width="7" height="1.9" rx="0.9" fill="#f4f4f4"/></g>
<g transform="translate(420.9,240.7) rotate(169)"><rect x="-3.5" y="-1.5" width="7" height="3" rx="1" fill="#f5b060"/><rect x="-3.5" y="-1.5" width="7" height="1.9" rx="0.9" fill="#f4f4f4"/></g>
<g transform="translate(452.8,190.9) rotate(147)"><rect x="-3.5" y="-1.5" width="7" height="3" rx="1" fill="#b88af0"/><rect x="-3.5" y="-1.5" width="7" height="1.9" rx="0.9" fill="#f4f4f4"/></g>
<g transform="translate(512.2,200.8) rotate(68)"><rect x="-3.5" y="-1.5" width="7" height="3" rx="1" fill="#7fc8f0"/><rect x="-3.5" y="-1.5" width="7" height="1.9" rx="0.9" fill="#f4f4f4"/></g>
<g transform="translate(446.7,290.3) rotate(102)"><rect x="-3.5" y="-1.5" width="7" height="3" rx="1" fill="#f0a0c0"/><rect x="-3.5" y="-1.5" width="7" height="1.9" rx="0.9" fill="#f4f4f4"/></g>
<g transform="translate(424.1,223.7) rotate(101)"><rect x="-3.5" y="-1.5" width="7" height="3" rx="1" fill="#9ad4f5"/><rect x="-3.5" y="-1.5" width="7" height="1.9" rx="0.9" fill="#f4f4f4"/></g>
<g transform="translate(476.5,195.4) rotate(16)"><rect x="-3.5" y="-1.5" width="7" height="3" rx="1" fill="#7fc8f0"/><rect x="-3.5" y="-1.5" width="7" height="1.9" rx="0.9" fill="#f4f4f4"/></g>
<g transform="translate(526.0,257.8) rotate(133)"><rect x="-3.5" y="-1.5" width="7" height="3" rx="1" fill="#d8d8d8"/><rect x="-3.5" y="-1.5" width="7" height="1.9" rx="0.9" fill="#f4f4f4"/></g>
<g transform="translate(505.7,249.8) rotate(65)"><rect x="-3.5" y="-1.5" width="7" height="3" rx="1" fill="#9ad4f5"/><rect x="-3.5" y="-1.5" width="7" height="1.9" rx="0.9" fill="#f4f4f4"/></g>
<g transform="translate(515.5,285.8) rotate(16)"><rect x="-3.5" y="-1.5" width="7" height="3" rx="1" fill="#f5b060"/><rect x="-3.5" y="-1.5" width="7" height="1.9" rx="0.9" fill="#f4f4f4"/></g>
<g transform="translate(500.6,290.8) rotate(95)"><rect x="-3.5" y="-1.5" width="7" height="3" rx="1" fill="#f0a0c0"/><rect x="-3.5" y="-1.5" width="7" height="1.9" rx="0.9" fill="#f4f4f4"/></g>
<g transform="translate(501.0,228.3) rotate(149)"><rect x="-3.5" y="-1.5" width="7" height="3" rx="1" fill="#b88af0"/><rect x="-3.5" y="-1.5" width="7" height="1.9" rx="0.9" fill="#f4f4f4"/></g>
<g transform="translate(523.7,244.4) rotate(107)"><rect x="-3.5" y="-1.5" width="7" height="3" rx="1" fill="#b88af0"/><rect x="-3.5" y="-1.5" width="7" height="1.9" rx="0.9" fill="#f4f4f4"/></g>
<g transform="translate(433.5,206.0) rotate(144)"><rect x="-3.5" y="-1.5" width="7" height="3" rx="1" fill="#7fc8f0"/><rect x="-3.5" y="-1.5" width="7" height="1.9" rx="0.9" fill="#f4f4f4"/></g>
<g transform="translate(460.6,219.7) rotate(127)"><rect x="-3.5" y="-1.5" width="7" height="3" rx="1" fill="#d8d8d8"/><rect x="-3.5" y="-1.5" width="7" height="1.9" rx="0.9" fill="#f4f4f4"/></g>
<g transform="translate(478.5,270.7) rotate(166)"><rect x="-3.5" y="-1.5" width="7" height="3" rx="1" fill="#d8d8d8"/><rect x="-3.5" y="-1.5" width="7" height="1.9" rx="0.9" fill="#f4f4f4"/></g>
<g transform="translate(514.9,271.5) rotate(135)"><rect x="-3.5" y="-1.5" width="7" height="3" rx="1" fill="#f5b060"/><rect x="-3.5" y="-1.5" width="7" height="1.9" rx="0.9" fill="#f4f4f4"/></g>
<g transform="translate(441.4,232.4) rotate(133)"><rect x="-3.5" y="-1.5" width="7" height="3" rx="1" fill="#f0a0c0"/><rect x="-3.5" y="-1.5" width="7" height="1.9" rx="0.9" fill="#f4f4f4"/></g>
<g transform="translate(481.7,300.2) rotate(28)"><rect x="-3.5" y="-1.5" width="7" height="3" rx="1" fill="#b88af0"/><rect x="-3.5" y="-1.5" width="7" height="1.9" rx="0.9" fill="#f4f4f4"/></g>
<g transform="translate(474.1,213.6) rotate(31)"><rect x="-3.5" y="-1.5" width="7" height="3" rx="1" fill="#d8d8d8"/><rect x="-3.5" y="-1.5" width="7" height="1.9" rx="0.9" fill="#f4f4f4"/></g>
<g transform="translate(437.6,219.7) rotate(16)"><rect x="-3.5" y="-1.5" width="7" height="3" rx="1" fill="#7fc8f0"/><rect x="-3.5" y="-1.5" width="7" height="1.9" rx="0.9" fill="#f4f4f4"/></g>
<g transform="translate(456.5,272.6) rotate(110)"><rect x="-3.5" y="-1.5" width="7" height="3" rx="1" fill="#d8d8d8"/><rect x="-3.5" y="-1.5" width="7" height="1.9" rx="0.9" fill="#f4f4f4"/></g>
<g transform="translate(507.0,193.1) rotate(149)"><rect x="-3.5" y="-1.5" width="7" height="3" rx="1" fill="#d8d8d8"/><rect x="-3.5" y="-1.5" width="7" height="1.9" rx="0.9" fill="#f4f4f4"/></g>
<circle cx="650" cy="381" r="100" fill="url(#saucerShadow)"/>
<circle cx="650" cy="373" r="90" fill="#fafafa"/>
<circle cx="650" cy="373" r="88.5" fill="url(#saucerG)"/>
<filter id="blur7" x="-50%" y="-50%" width="200%" height="200%"><feGaussianBlur stdDeviation="8"/></filter><clipPath id="saucerClip"><circle cx="650" cy="373" r="88.5"/></clipPath><clipPath id="crescentClip"><circle cx="677" cy="393" r="65.8"/></clipPath>
<g clip-path="url(#saucerClip)">
<circle cx="677" cy="393" r="67" fill="#f6f6f6"/>
<g clip-path="url(#crescentClip)"><circle cx="677" cy="393" r="67" fill="#ededed"/><circle cx="662" cy="392" r="62" fill="#808080" filter="url(#blur7)"/></g></g>
<rect x="704" y="359.5" width="38" height="14.5" fill="url(#handleG)"/>
<circle cx="651.5" cy="373" r="62" fill="url(#cupRim)"/>
<circle cx="650.3" cy="373" r="56.5" fill="url(#wallG)"/>
<circle cx="651.5" cy="372.8" r="51.3" fill="url(#coffeeG)"/>
<circle cx="651.5" cy="372.8" r="51" fill="none" stroke="#5a3018" stroke-width="0.8" opacity="0.7"/>
<path d="M617.6,406.7 A48,48 0 0 0 658.2,420.3" fill="none" stroke="#e8d8d0" stroke-width="1.4" opacity="0.75"/>
<path d="M683.6,408.5 A48,48 0 0 0 697.2,387.6" fill="none" stroke="#e8d8d0" stroke-width="1.4" opacity="0.7"/>
<path d="M678,330 A50.5,50.5 0 0 1 700,356" fill="none" stroke="#f0e0d8" stroke-width="1.2" opacity="0.85"/>
<path d="M618,352.5 Q617,330 651,328.5 Q685,330 684,352.5 Q683,354 680,354 H622 Q619,354 618,352.5 Z" fill="#4a2424" opacity="0.42"/>
</g>
<rect x="304.5" y="115.5" width="548" height="410" fill="none" stroke="#000" stroke-width="1"/>
<rect x="304.5" y="115.5" width="548" height="410" fill="none" stroke="#fff200" stroke-width="1" stroke-dasharray="4,3"/>
<text x="180.6" y="594.5" font-size="10" fill="#9a9a9a" textLength="40" lengthAdjust="spacingAndGlyphs" >1257, -99</text>
<rect x="236.5" y="580" width="40" height="22" fill="#2b2b2b" rx="3" />
<text x="242.8" y="595" font-size="9.5" fill="#cfcfcf" textLength="10" lengthAdjust="spacingAndGlyphs" >px</text>
<path d="M260.5,588.25 L265.5,593.75 L270.5,588.25" fill="none" stroke="#e0e0e0" stroke-width="1.3"/>
<rect x="278" y="580" width="24" height="22" fill="#353535" />
<rect x="279" y="586" width="22" height="10" fill="#141414" />
<text x="278.8" y="595" font-size="9" fill="#e8e8e8" textLength="22.5" lengthAdjust="spacingAndGlyphs" >33.3 %</text>
<rect x="302.5" y="580" width="15" height="22" fill="#2b2b2b" rx="3" />
<path d="M305.5,588.5 L310,593.5 L314.5,588.5" fill="none" stroke="#e0e0e0" stroke-width="1.3"/>
<path d="M322.5,587.5 V596 H331 M324.5,587.5 H332 V595.5" fill="none" stroke="#cfcfcf" stroke-width="1.5"/><rect x="321" y="585" width="1.5" height="1.5" fill="#cfcfcf"/><rect x="332.5" y="596.5" width="1.5" height="1.5" fill="#cfcfcf"/>
<text x="335.6" y="595" font-size="11" fill="#d2d2d2" textLength="160" lengthAdjust="spacingAndGlyphs" >Click-Drag to draw a crop rectangle</text>
<rect x="998" y="42" width="169" height="256" fill="#3b3b3b" />
<rect x="998" y="24" width="18" height="17" fill="#3b3b3b" />
<rect x="998" y="321" width="169" height="283" fill="#3b3b3b" />
<rect x="998" y="303" width="45" height="17" fill="#3b3b3b" />
<rect x="1017" y="25" width="51" height="16" fill="#2c2c2c" />
<path d="M997.5,41 V23.5 H1016.5 V41" fill="none" stroke="#585858" stroke-width="1"/>
<rect x="997" y="41" width="171" height="1" fill="#585858" />
<defs><radialGradient id="brushIc" cx="0.5" cy="0.5" r="0.5"><stop offset="0" stop-color="#000"/><stop offset="0.25" stop-color="#111"/><stop offset="0.9" stop-color="#fff"/></radialGradient></defs>
<rect x="1000" y="25.5" width="13" height="13" fill="#151515" />
<rect x="1000.5" y="26" width="12" height="12" fill="url(#brushIc)" />
<rect x="1019" y="27" width="11.5" height="12" fill="#f6a93b" />
<rect x="1022" y="27" width="2" height="12" fill="#ffc860" />
<rect x="1026" y="27" width="2" height="12" fill="#ffc860" />
<rect x="1036.5" y="27" width="12" height="12" fill="#ffffff" />
<text x="1037.3" y="36.5" font-size="8" fill="#222" textLength="10.5" lengthAdjust="spacingAndGlyphs" >Aa</text>
<circle cx="1059.8" cy="33" r="5.3" fill="none" stroke="#c8c8c8" stroke-width="1.3"/>
<text x="1057.2" y="36.3" font-size="8.5" fill="#c8c8c8" font-weight="bold" >?</text>
<rect x="1158.5" y="28.5" width="8" height="8" fill="none" stroke="#9a9a9a" stroke-width="1"/><path d="M1160.5,32.5 L1165,30 L1165,35 Z" fill="#9a9a9a"/>
<path d="M997.5,41 V298 M1167.5,41 V298" stroke="#585858" stroke-width="1"/>
<rect x="1001" y="45" width="166" height="15" fill="#222222" />
<text x="1003.06" y="56.1" font-size="10.5" fill="#7a7a7a" textLength="18.34" lengthAdjust="spacingAndGlyphs" font-style="italic" >filter</text>
<path d="M1155.2,50.25 L1158.7,54.75 L1162.2,50.25" fill="none" stroke="#e0e0e0" stroke-width="1.3"/>
<text x="1000.45" y="70.5" font-size="10.5" fill="#dce4f0" textLength="109.78" lengthAdjust="spacingAndGlyphs" font-style="italic" >2. Hardness 050 (51 × 51)</text>
<rect x="1000" y="74" width="146" height="169" fill="#ffffff" />
<rect x="1146" y="74" width="9" height="169" fill="#3a3a3a" />
<rect x="1155" y="74" width="13" height="169" fill="#242424" />
<rect x="1156" y="74.5" width="11" height="80" fill="#5a5a5a" rx="2" />
<rect x="1071.5" y="87" width="2" height="2" fill="#333" />
<rect x="1090" y="85" width="25" height="6" fill="#000" />
<defs><radialGradient id="ellG"><stop offset="0.3" stop-color="#000"/><stop offset="1" stop-color="#000" stop-opacity="0"/></radialGradient><radialGradient id="soft1"><stop offset="0" stop-color="#000"/><stop offset="1" stop-color="#000" stop-opacity="0"/></radialGradient><radialGradient id="soft2"><stop offset="0.2" stop-color="#000"/><stop offset="1" stop-color="#000" stop-opacity="0"/></radialGradient><radialGradient id="soft3"><stop offset="0.3" stop-color="#000"/><stop offset="1" stop-color="#000" stop-opacity="0"/></radialGradient></defs>
<ellipse cx="1132" cy="88" rx="12" ry="5" fill="url(#ellG)"/>
<path d="M1083,102 L1088,97 L1088,102 Z" fill="#6a8cff"/>
<path d="M1111.5,100 H1115.5 M1113.5,98 V102" stroke="#5577dd" stroke-width="1.2"/>
<path d="M1141,100 H1145 M1143,98 V102" stroke="#5577dd" stroke-width="1.2"/>
<rect x="1002" y="117" width="25" height="1.5" fill="#777" />
<circle cx="1044" cy="117.5" r="9" fill="url(#soft1)"/>
<circle cx="1073" cy="117.5" r="12" fill="url(#soft2)"/>
<rect x="1058.5" y="103.5" width="29" height="28" fill="none" stroke="#222" stroke-width="1.2"/>
<circle cx="1102.5" cy="117.5" r="13" fill="url(#soft3)"/>
<circle cx="1131.5" cy="117.5" r="13.3" fill="#000"/>
<path d="M1024,129 H1028 M1026,127 V131" stroke="#5577dd" stroke-width="1.2"/>
<path d="M1053,129 H1057 M1055,127 V131" stroke="#5577dd" stroke-width="1.2"/>
<path d="M1083,129 H1087 M1085,127 V131" stroke="#5577dd" stroke-width="1.2"/>
<path d="M1111.5,129 H1115.5 M1113.5,127 V131" stroke="#5577dd" stroke-width="1.2"/>
<path d="M1141,129 H1145 M1143,127 V131" stroke="#5577dd" stroke-width="1.2"/>
<polygon points="1015.0,135.0 1017.9,143.0 1026.4,143.3 1019.8,148.5 1022.1,156.7 1015.0,152.0 1007.9,156.7 1010.2,148.5 1003.6,143.3 1012.1,143.0" fill="#000"/>
<defs>
<filter id="spk1" x="-10%" y="-10%" width="120%" height="120%"><feTurbulence type="fractalNoise" baseFrequency="0.55" numOctaves="2" seed="4" result="n"/><feColorMatrix in="n" type="matrix" values="0 0 0 0 0 0 0 0 0 0 0 0 0 0 0 3.2 0 0 0 -0.9" result="a"/><feComposite in="SourceGraphic" in2="a" operator="in"/></filter>
<filter id="spk2" x="-10%" y="-10%" width="120%" height="120%"><feTurbulence type="fractalNoise" baseFrequency="0.7" numOctaves="2" seed="9" result="n"/><feColorMatrix in="n" type="matrix" values="0 0 0 0 0 0 0 0 0 0 0 0 0 0 0 4.5 0 0 0 -1.6" result="a"/><feComposite in="SourceGraphic" in2="a" operator="in"/></filter>
<filter id="spk3" x="-10%" y="-10%" width="120%" height="120%"><feTurbulence type="fractalNoise" baseFrequency="0.38" numOctaves="1" seed="2" result="n"/><feColorMatrix in="n" type="matrix" values="0 0 0 0 1 0 0 0 0 1 0 0 0 0 1 12 0 0 0 -5.7" result="a"/><feComposite in="a" in2="SourceGraphic" operator="in"/></filter>
<radialGradient id="cloud"><stop offset="0" stop-color="#000"/><stop offset="0.55" stop-color="#000" stop-opacity="0.9"/><stop offset="1" stop-color="#000" stop-opacity="0"/></radialGradient>
<radialGradient id="cloud2"><stop offset="0" stop-color="#000" stop-opacity="0.8"/><stop offset="1" stop-color="#000" stop-opacity="0"/></radialGradient>
</defs>
<ellipse cx="1044" cy="147" rx="9.5" ry="9.5" fill="url(#cloud)" opacity="1"/>
<circle cx="1044.6" cy="154.7" r="0.7" fill="#000" opacity="0.52"/>
<circle cx="1042.1" cy="145.1" r="0.4" fill="#000" opacity="0.63"/>
<circle cx="1043.7" cy="152.0" r="1.1" fill="#000" opacity="0.46"/>
<circle cx="1047.7" cy="140.8" r="0.8" fill="#000" opacity="0.32"/>
<circle cx="1037.6" cy="139.7" r="0.8" fill="#000" opacity="0.58"/>
<circle cx="1042.7" cy="144.7" r="0.9" fill="#000" opacity="0.52"/>
<circle cx="1043.4" cy="148.7" r="1.0" fill="#000" opacity="0.46"/>
<circle cx="1042.1" cy="137.4" r="0.9" fill="#000" opacity="0.66"/>
<circle cx="1036.6" cy="152.7" r="0.7" fill="#000" opacity="0.67"/>
<circle cx="1046.4" cy="144.7" r="0.5" fill="#000" opacity="0.35"/>
<circle cx="1050.7" cy="145.5" r="0.8" fill="#000" opacity="0.39"/>
<circle cx="1037.5" cy="146.7" r="0.6" fill="#000" opacity="0.51"/>
<circle cx="1035.4" cy="142.0" r="0.9" fill="#000" opacity="0.67"/>
<circle cx="1050.4" cy="138.8" r="0.9" fill="#000" opacity="0.32"/>
<circle cx="1050.6" cy="139.1" r="1.0" fill="#000" opacity="0.51"/>
<circle cx="1042.9" cy="142.3" r="1.0" fill="#000" opacity="0.51"/>
<circle cx="1043.4" cy="149.6" r="1.0" fill="#000" opacity="0.70"/>
<circle cx="1051.9" cy="151.9" r="0.7" fill="#000" opacity="0.32"/>
<circle cx="1041.5" cy="155.8" r="1.0" fill="#000" opacity="0.27"/>
<circle cx="1042.3" cy="145.5" r="0.9" fill="#000" opacity="0.40"/>
<circle cx="1051.6" cy="140.0" r="0.8" fill="#000" opacity="0.70"/>
<circle cx="1042.9" cy="149.7" r="0.8" fill="#000" opacity="0.26"/>
<circle cx="1046.2" cy="153.3" r="0.8" fill="#000" opacity="0.32"/>
<circle cx="1053.4" cy="149.6" r="0.6" fill="#000" opacity="0.68"/>
<circle cx="1049.1" cy="143.1" r="0.7" fill="#000" opacity="0.48"/>
<circle cx="1039.0" cy="140.7" r="0.8" fill="#000" opacity="0.53"/>
<circle cx="1050.9" cy="144.3" r="0.7" fill="#000" opacity="0.57"/>
<circle cx="1044.4" cy="152.7" r="1.1" fill="#000" opacity="0.48"/>
<circle cx="1042.9" cy="146.7" r="0.7" fill="#000" opacity="0.51"/>
<circle cx="1052.1" cy="148.0" r="0.8" fill="#000" opacity="0.28"/>
<circle cx="1039.0" cy="141.9" r="0.9" fill="#000" opacity="0.41"/>
<circle cx="1041.6" cy="138.3" r="0.4" fill="#000" opacity="0.28"/>
<circle cx="1039.4" cy="137.8" r="0.6" fill="#000" opacity="0.46"/>
<circle cx="1039.1" cy="143.7" r="0.7" fill="#000" opacity="0.39"/>
<circle cx="1038.5" cy="152.9" r="0.6" fill="#000" opacity="0.42"/>
<circle cx="1044.2" cy="145.3" r="0.8" fill="#000" opacity="0.58"/>
<circle cx="1042.2" cy="151.6" r="1.0" fill="#000" opacity="0.36"/>
<circle cx="1046.6" cy="153.4" r="0.9" fill="#000" opacity="0.30"/>
<circle cx="1041.4" cy="152.4" r="1.0" fill="#000" opacity="0.45"/>
<circle cx="1046.6" cy="143.6" r="0.6" fill="#000" opacity="0.54"/>
<circle cx="1049.3" cy="142.4" r="0.6" fill="#000" opacity="0.30"/>
<circle cx="1039.5" cy="146.2" r="1.0" fill="#000" opacity="0.63"/>
<circle cx="1046.2" cy="152.0" r="1.0" fill="#000" opacity="0.54"/>
<circle cx="1046.1" cy="141.2" r="0.5" fill="#000" opacity="0.38"/>
<circle cx="1045.5" cy="141.8" r="0.6" fill="#000" opacity="0.44"/>
<circle cx="1038.1" cy="150.2" r="1.0" fill="#000" opacity="0.32"/>
<circle cx="1054.1" cy="147.3" r="1.0" fill="#000" opacity="0.69"/>
<circle cx="1034.7" cy="151.1" r="1.0" fill="#000" opacity="0.35"/>
<circle cx="1043.7" cy="137.4" r="0.9" fill="#000" opacity="0.48"/>
<circle cx="1042.5" cy="152.9" r="0.6" fill="#000" opacity="0.28"/>
<circle cx="1039.2" cy="144.0" r="1.0" fill="#000" opacity="0.27"/>
<circle cx="1051.2" cy="142.0" r="1.0" fill="#000" opacity="0.65"/>
<circle cx="1050.4" cy="142.3" r="0.4" fill="#000" opacity="0.59"/>
<circle cx="1046.7" cy="152.0" r="0.9" fill="#000" opacity="0.49"/>
<circle cx="1035.3" cy="152.2" r="0.8" fill="#000" opacity="0.40"/>
<circle cx="1043.8" cy="156.7" r="0.7" fill="#000" opacity="0.60"/>
<circle cx="1041.2" cy="150.7" r="0.8" fill="#000" opacity="0.62"/>
<circle cx="1048.4" cy="155.2" r="1.0" fill="#000" opacity="0.61"/>
<circle cx="1044.4" cy="146.2" r="0.8" fill="#000" opacity="0.64"/>
<circle cx="1049.2" cy="148.7" r="0.6" fill="#000" opacity="0.49"/>
<circle cx="1037.6" cy="150.3" r="0.9" fill="#000" opacity="0.25"/>
<circle cx="1047.5" cy="148.3" r="0.5" fill="#000" opacity="0.28"/>
<circle cx="1053.5" cy="145.5" r="0.5" fill="#000" opacity="0.48"/>
<circle cx="1041.6" cy="152.4" r="0.6" fill="#000" opacity="0.54"/>
<circle cx="1038.6" cy="143.8" r="0.5" fill="#000" opacity="0.40"/>
<circle cx="1049.6" cy="152.5" r="0.9" fill="#000" opacity="0.42"/>
<circle cx="1047.9" cy="149.1" r="0.7" fill="#000" opacity="0.52"/>
<circle cx="1045.3" cy="140.7" r="1.0" fill="#000" opacity="0.53"/>
<circle cx="1038.2" cy="149.7" r="0.7" fill="#000" opacity="0.57"/>
<circle cx="1036.4" cy="151.2" r="0.7" fill="#000" opacity="0.36"/>
<circle cx="1035.5" cy="145.1" r="0.5" fill="#000" opacity="0.44"/>
<circle cx="1035.2" cy="151.4" r="1.1" fill="#000" opacity="0.42"/>
<circle cx="1051.4" cy="141.4" r="0.6" fill="#000" opacity="0.46"/>
<circle cx="1050.7" cy="153.6" r="0.9" fill="#000" opacity="0.65"/>
<circle cx="1046.3" cy="138.8" r="0.9" fill="#000" opacity="0.50"/>
<circle cx="1050.4" cy="151.8" r="0.4" fill="#000" opacity="0.31"/>
<circle cx="1044.3" cy="144.8" r="0.5" fill="#000" opacity="0.29"/>
<circle cx="1047.2" cy="144.0" r="0.4" fill="#000" opacity="0.63"/>
<circle cx="1050.9" cy="153.6" r="0.9" fill="#000" opacity="0.63"/>
<circle cx="1051.6" cy="144.7" r="1.0" fill="#000" opacity="0.27"/>
<circle cx="1044.8" cy="139.6" r="0.9" fill="#000" opacity="0.30"/>
<circle cx="1043.9" cy="136.9" r="0.4" fill="#000" opacity="0.40"/>
<circle cx="1035.2" cy="143.3" r="0.6" fill="#000" opacity="0.33"/>
<circle cx="1044.0" cy="155.2" r="0.9" fill="#000" opacity="0.43"/>
<circle cx="1039.6" cy="151.9" r="0.6" fill="#000" opacity="0.44"/>
<circle cx="1050.4" cy="150.7" r="1.1" fill="#000" opacity="0.44"/>
<circle cx="1043.9" cy="142.8" r="0.9" fill="#000" opacity="0.59"/>
<circle cx="1040.5" cy="140.3" r="0.7" fill="#000" opacity="0.54"/>
<circle cx="1047.2" cy="144.6" r="0.5" fill="#000" opacity="0.59"/>
<circle cx="1050.5" cy="143.2" r="0.7" fill="#000" opacity="0.57"/>
<circle cx="1045.5" cy="150.6" r="0.5" fill="#fff" opacity="0.45"/>
<circle cx="1040.3" cy="144.8" r="0.5" fill="#fff" opacity="0.45"/>
<circle cx="1041.3" cy="140.1" r="0.5" fill="#fff" opacity="0.45"/>
<circle cx="1042.6" cy="142.3" r="0.8" fill="#fff" opacity="0.45"/>
<circle cx="1040.6" cy="145.0" r="0.5" fill="#fff" opacity="0.45"/>
<circle cx="1049.2" cy="147.8" r="0.6" fill="#fff" opacity="0.45"/>
<circle cx="1046.1" cy="151.0" r="0.6" fill="#fff" opacity="0.45"/>
<circle cx="1044.4" cy="144.2" r="0.9" fill="#fff" opacity="0.45"/>
<circle cx="1038.2" cy="147.8" r="0.6" fill="#fff" opacity="0.45"/>
<circle cx="1047.5" cy="141.1" r="0.7" fill="#fff" opacity="0.45"/>
<circle cx="1037.6" cy="147.8" r="0.8" fill="#fff" opacity="0.45"/>
<circle cx="1038.7" cy="150.8" r="0.9" fill="#fff" opacity="0.45"/>
<ellipse cx="1073" cy="148" rx="10" ry="6.5" fill="url(#cloud)" opacity="0.85"/>
<circle cx="1067.8" cy="148.7" r="0.6" fill="#000" opacity="0.49"/>
<circle cx="1068.1" cy="141.8" r="1.0" fill="#000" opacity="0.31"/>
<circle cx="1075.1" cy="151.4" r="0.5" fill="#000" opacity="0.48"/>
<circle cx="1079.6" cy="142.7" r="0.6" fill="#000" opacity="0.54"/>
<circle cx="1070.2" cy="152.3" r="0.9" fill="#000" opacity="0.25"/>
<circle cx="1081.4" cy="151.6" r="0.6" fill="#000" opacity="0.35"/>
<circle cx="1065.1" cy="145.2" r="0.4" fill="#000" opacity="0.34"/>
<circle cx="1065.9" cy="149.9" r="0.5" fill="#000" opacity="0.44"/>
<circle cx="1079.6" cy="146.8" r="0.8" fill="#000" opacity="0.26"/>
<circle cx="1071.6" cy="153.8" r="0.5" fill="#000" opacity="0.55"/>
<circle cx="1075.9" cy="146.8" r="1.1" fill="#000" opacity="0.36"/>
<circle cx="1074.3" cy="141.8" r="0.6" fill="#000" opacity="0.47"/>
<circle cx="1067.4" cy="142.7" r="0.6" fill="#000" opacity="0.50"/>
<circle cx="1081.8" cy="146.6" r="0.8" fill="#000" opacity="0.26"/>
<circle cx="1066.5" cy="148.2" r="0.9" fill="#000" opacity="0.47"/>
<circle cx="1068.7" cy="146.8" r="0.9" fill="#000" opacity="0.45"/>
<circle cx="1077.5" cy="154.1" r="0.9" fill="#000" opacity="0.26"/>
<circle cx="1076.8" cy="146.9" r="0.6" fill="#000" opacity="0.49"/>
<circle cx="1066.3" cy="144.9" r="0.9" fill="#000" opacity="0.39"/>
<circle cx="1071.2" cy="150.8" r="0.4" fill="#000" opacity="0.49"/>
<circle cx="1073.2" cy="142.7" r="0.9" fill="#000" opacity="0.35"/>
<circle cx="1072.3" cy="152.4" r="1.0" fill="#000" opacity="0.23"/>
<circle cx="1067.5" cy="147.9" r="0.9" fill="#000" opacity="0.35"/>
<circle cx="1069.5" cy="151.9" r="0.8" fill="#000" opacity="0.51"/>
<circle cx="1066.9" cy="153.3" r="0.5" fill="#000" opacity="0.32"/>
<circle cx="1076.0" cy="149.4" r="0.9" fill="#000" opacity="0.49"/>
<circle cx="1074.9" cy="150.9" r="0.7" fill="#000" opacity="0.50"/>
<circle cx="1076.8" cy="142.3" r="0.8" fill="#000" opacity="0.27"/>
<circle cx="1069.1" cy="149.9" r="0.8" fill="#000" opacity="0.43"/>
<circle cx="1074.6" cy="151.4" r="0.9" fill="#000" opacity="0.22"/>
<circle cx="1076.4" cy="141.6" r="1.1" fill="#000" opacity="0.36"/>
<circle cx="1065.1" cy="146.2" r="0.8" fill="#000" opacity="0.59"/>
<circle cx="1070.7" cy="144.4" r="1.0" fill="#000" opacity="0.40"/>
<circle cx="1065.5" cy="144.4" r="0.4" fill="#000" opacity="0.51"/>
<circle cx="1068.9" cy="143.7" r="0.8" fill="#000" opacity="0.39"/>
<circle cx="1075.8" cy="152.9" r="0.4" fill="#000" opacity="0.40"/>
<circle cx="1068.5" cy="144.2" r="0.8" fill="#000" opacity="0.58"/>
<circle cx="1076.2" cy="146.3" r="1.0" fill="#000" opacity="0.45"/>
<circle cx="1079.3" cy="149.3" r="0.6" fill="#000" opacity="0.24"/>
<circle cx="1062.7" cy="146.3" r="0.6" fill="#000" opacity="0.55"/>
<circle cx="1071.6" cy="145.5" r="1.0" fill="#000" opacity="0.44"/>
<circle cx="1081.3" cy="145.3" r="0.9" fill="#000" opacity="0.34"/>
<circle cx="1076.7" cy="141.5" r="1.0" fill="#000" opacity="0.38"/>
<circle cx="1073.3" cy="143.0" r="0.5" fill="#000" opacity="0.23"/>
<circle cx="1077.3" cy="149.5" r="0.5" fill="#000" opacity="0.40"/>
<circle cx="1070.5" cy="143.0" r="0.7" fill="#000" opacity="0.46"/>
<circle cx="1070.5" cy="152.6" r="0.9" fill="#000" opacity="0.37"/>
<circle cx="1077.4" cy="154.1" r="0.9" fill="#000" opacity="0.35"/>
<circle cx="1067.5" cy="151.8" r="0.8" fill="#000" opacity="0.30"/>
<circle cx="1078.0" cy="148.1" r="0.9" fill="#000" opacity="0.27"/>
<circle cx="1068.3" cy="148.8" r="0.5" fill="#000" opacity="0.28"/>
<circle cx="1069.3" cy="149.7" r="0.4" fill="#000" opacity="0.25"/>
<circle cx="1076.8" cy="152.4" r="0.4" fill="#000" opacity="0.22"/>
<circle cx="1066.3" cy="149.5" r="0.9" fill="#000" opacity="0.23"/>
<circle cx="1067.3" cy="150.6" r="0.4" fill="#000" opacity="0.58"/>
<circle cx="1073.7" cy="150.2" r="0.7" fill="#000" opacity="0.28"/>
<circle cx="1068.3" cy="145.1" r="0.5" fill="#000" opacity="0.23"/>
<circle cx="1072.2" cy="144.3" r="1.0" fill="#000" opacity="0.39"/>
<circle cx="1078.5" cy="146.4" r="0.6" fill="#000" opacity="0.31"/>
<circle cx="1076.4" cy="142.8" r="0.6" fill="#000" opacity="0.25"/>
<circle cx="1069.8" cy="143.3" r="0.7" fill="#fff" opacity="0.45"/>
<circle cx="1074.4" cy="148.0" r="0.4" fill="#fff" opacity="0.45"/>
<circle cx="1073.7" cy="148.9" r="0.4" fill="#fff" opacity="0.45"/>
<circle cx="1068.7" cy="143.9" r="0.5" fill="#fff" opacity="0.45"/>
<circle cx="1078.5" cy="147.4" r="0.8" fill="#fff" opacity="0.45"/>
<circle cx="1079.7" cy="145.5" r="0.4" fill="#fff" opacity="0.45"/>
<circle cx="1070.9" cy="151.8" r="0.9" fill="#fff" opacity="0.45"/>
<circle cx="1076.7" cy="149.5" r="0.8" fill="#fff" opacity="0.45"/>
<circle cx="1076.8" cy="150.1" r="0.6" fill="#fff" opacity="0.45"/>
<circle cx="1069.7" cy="143.5" r="0.5" fill="#fff" opacity="0.45"/>
<circle cx="1072.6" cy="143.6" r="0.8" fill="#fff" opacity="0.45"/>
<circle cx="1065.7" cy="146.4" r="0.6" fill="#fff" opacity="0.45"/>
<circle cx="1069.7" cy="149.3" r="0.8" fill="#fff" opacity="0.45"/>
<circle cx="1068.9" cy="148.3" r="0.5" fill="#fff" opacity="0.45"/>
<circle cx="1071.9" cy="144.0" r="0.8" fill="#fff" opacity="0.45"/>
<circle cx="1068.8" cy="150.4" r="0.5" fill="#fff" opacity="0.45"/>
<circle cx="1072.7" cy="147.2" r="0.6" fill="#fff" opacity="0.45"/>
<circle cx="1073.3" cy="143.7" r="0.4" fill="#fff" opacity="0.45"/>
<circle cx="1073.6" cy="152.8" r="0.7" fill="#fff" opacity="0.45"/>
<circle cx="1078.4" cy="144.6" r="0.6" fill="#fff" opacity="0.45"/>
<circle cx="1078.5" cy="145.3" r="0.6" fill="#fff" opacity="0.45"/>
<circle cx="1071.5" cy="149.0" r="0.6" fill="#fff" opacity="0.45"/>
<circle cx="1075.5" cy="147.5" r="0.7" fill="#fff" opacity="0.45"/>
<circle cx="1074.8" cy="148.9" r="0.7" fill="#fff" opacity="0.45"/>
<circle cx="1073.1" cy="149.1" r="0.5" fill="#fff" opacity="0.45"/>
<circle cx="1069.2" cy="144.9" r="0.4" fill="#fff" opacity="0.45"/>
<circle cx="1074.0" cy="153.1" r="0.5" fill="#fff" opacity="0.45"/>
<circle cx="1068.2" cy="146.7" r="0.8" fill="#fff" opacity="0.45"/>
<circle cx="1067.4" cy="145.2" r="0.7" fill="#fff" opacity="0.45"/>
<circle cx="1074.3" cy="150.0" r="0.4" fill="#fff" opacity="0.45"/>
<ellipse cx="1102" cy="146" rx="6.5" ry="10.5" fill="url(#cloud)" opacity="0.85"/>
<circle cx="1103.1" cy="142.6" r="0.4" fill="#000" opacity="0.58"/>
<circle cx="1104.1" cy="156.4" r="0.5" fill="#000" opacity="0.39"/>
<circle cx="1103.1" cy="156.4" r="0.8" fill="#000" opacity="0.46"/>
<circle cx="1102.5" cy="135.2" r="0.6" fill="#000" opacity="0.44"/>
<circle cx="1099.8" cy="147.3" r="1.0" fill="#000" opacity="0.44"/>
<circle cx="1103.3" cy="141.2" r="0.8" fill="#000" opacity="0.39"/>
<circle cx="1101.7" cy="142.8" r="0.6" fill="#000" opacity="0.40"/>
<circle cx="1106.8" cy="149.7" r="0.9" fill="#000" opacity="0.37"/>
<circle cx="1098.7" cy="138.8" r="0.5" fill="#000" opacity="0.35"/>
<circle cx="1106.1" cy="145.8" r="0.7" fill="#000" opacity="0.24"/>
<circle cx="1102.6" cy="150.6" r="1.1" fill="#000" opacity="0.49"/>
<circle cx="1107.0" cy="137.9" r="0.8" fill="#000" opacity="0.57"/>
<circle cx="1097.5" cy="144.3" r="1.1" fill="#000" opacity="0.56"/>
<circle cx="1106.7" cy="143.5" r="0.9" fill="#000" opacity="0.37"/>
<circle cx="1108.9" cy="145.8" r="0.6" fill="#000" opacity="0.57"/>
<circle cx="1102.9" cy="149.3" r="0.9" fill="#000" opacity="0.33"/>
<circle cx="1096.3" cy="144.9" r="0.4" fill="#000" opacity="0.50"/>
<circle cx="1101.2" cy="153.5" r="0.6" fill="#000" opacity="0.50"/>
<circle cx="1101.9" cy="139.8" r="0.5" fill="#000" opacity="0.33"/>
<circle cx="1100.3" cy="147.7" r="0.5" fill="#000" opacity="0.50"/>
<circle cx="1099.8" cy="135.1" r="1.1" fill="#000" opacity="0.55"/>
<circle cx="1100.0" cy="149.3" r="0.6" fill="#000" opacity="0.39"/>
<circle cx="1096.8" cy="144.6" r="0.7" fill="#000" opacity="0.54"/>
<circle cx="1100.9" cy="153.7" r="1.0" fill="#000" opacity="0.52"/>
<circle cx="1101.0" cy="151.4" r="1.0" fill="#000" opacity="0.22"/>
<circle cx="1105.5" cy="152.2" r="0.8" fill="#000" opacity="0.28"/>
<circle cx="1105.1" cy="147.6" r="0.9" fill="#000" opacity="0.39"/>
<circle cx="1108.3" cy="144.7" r="1.1" fill="#000" opacity="0.23"/>
<circle cx="1102.3" cy="147.2" r="0.7" fill="#000" opacity="0.34"/>
<circle cx="1107.0" cy="148.7" r="0.5" fill="#000" opacity="0.33"/>
<circle cx="1102.1" cy="156.3" r="0.7" fill="#000" opacity="0.31"/>
<circle cx="1106.5" cy="148.1" r="0.8" fill="#000" opacity="0.47"/>
<circle cx="1107.5" cy="140.6" r="0.6" fill="#000" opacity="0.26"/>
<circle cx="1102.3" cy="135.8" r="0.8" fill="#000" opacity="0.53"/>
<circle cx="1098.4" cy="144.0" r="0.5" fill="#000" opacity="0.22"/>
<circle cx="1097.8" cy="137.4" r="1.0" fill="#000" opacity="0.39"/>
<circle cx="1098.5" cy="136.4" r="1.0" fill="#000" opacity="0.44"/>
<circle cx="1097.6" cy="150.3" r="0.5" fill="#000" opacity="0.28"/>
<circle cx="1099.1" cy="135.5" r="0.8" fill="#000" opacity="0.37"/>
<circle cx="1099.1" cy="152.2" r="1.0" fill="#000" opacity="0.39"/>
<circle cx="1104.7" cy="144.8" r="0.6" fill="#000" opacity="0.41"/>
<circle cx="1096.4" cy="151.6" r="1.0" fill="#000" opacity="0.57"/>
<circle cx="1101.0" cy="144.7" r="0.8" fill="#000" opacity="0.42"/>
<circle cx="1098.2" cy="146.5" r="0.9" fill="#000" opacity="0.56"/>
<circle cx="1106.7" cy="151.7" r="0.7" fill="#000" opacity="0.41"/>
<circle cx="1107.6" cy="139.1" r="0.9" fill="#000" opacity="0.29"/>
<circle cx="1104.7" cy="143.7" r="0.7" fill="#000" opacity="0.53"/>
<circle cx="1100.5" cy="151.5" r="1.1" fill="#000" opacity="0.57"/>
<circle cx="1100.2" cy="152.6" r="0.6" fill="#000" opacity="0.26"/>
<circle cx="1102.0" cy="157.4" r="0.5" fill="#000" opacity="0.30"/>
<circle cx="1102.6" cy="149.1" r="0.8" fill="#000" opacity="0.50"/>
<circle cx="1105.0" cy="138.2" r="1.0" fill="#000" opacity="0.21"/>
<circle cx="1100.6" cy="157.1" r="0.4" fill="#000" opacity="0.31"/>
<circle cx="1098.3" cy="146.6" r="0.8" fill="#000" opacity="0.23"/>
<circle cx="1102.6" cy="157.3" r="0.5" fill="#000" opacity="0.56"/>
<circle cx="1105.1" cy="156.3" r="0.9" fill="#000" opacity="0.46"/>
<circle cx="1103.0" cy="148.1" r="0.9" fill="#000" opacity="0.28"/>
<circle cx="1104.4" cy="155.7" r="1.0" fill="#000" opacity="0.23"/>
<circle cx="1107.1" cy="143.9" r="0.7" fill="#000" opacity="0.25"/>
<circle cx="1096.5" cy="153.3" r="0.6" fill="#000" opacity="0.26"/>
<circle cx="1103.1" cy="148.4" r="0.6" fill="#fff" opacity="0.45"/>
<circle cx="1103.2" cy="144.8" r="0.5" fill="#fff" opacity="0.45"/>
<circle cx="1106.8" cy="142.9" r="0.9" fill="#fff" opacity="0.45"/>
<circle cx="1102.1" cy="151.0" r="0.9" fill="#fff" opacity="0.45"/>
<circle cx="1097.7" cy="146.7" r="0.6" fill="#fff" opacity="0.45"/>
<circle cx="1105.0" cy="146.7" r="0.8" fill="#fff" opacity="0.45"/>
<circle cx="1102.8" cy="139.8" r="0.6" fill="#fff" opacity="0.45"/>
<circle cx="1098.6" cy="144.7" r="0.7" fill="#fff" opacity="0.45"/>
<circle cx="1103.2" cy="142.7" r="0.7" fill="#fff" opacity="0.45"/>
<circle cx="1106.4" cy="142.8" r="0.5" fill="#fff" opacity="0.45"/>
<circle cx="1106.6" cy="144.2" r="0.5" fill="#fff" opacity="0.45"/>
<circle cx="1101.8" cy="149.8" r="0.4" fill="#fff" opacity="0.45"/>
<circle cx="1105.3" cy="145.3" r="0.8" fill="#fff" opacity="0.45"/>
<circle cx="1102.5" cy="146.7" r="0.8" fill="#fff" opacity="0.45"/>
<circle cx="1103.4" cy="138.0" r="0.7" fill="#fff" opacity="0.45"/>
<circle cx="1097.5" cy="144.8" r="0.4" fill="#fff" opacity="0.45"/>
<circle cx="1098.7" cy="144.6" r="0.5" fill="#fff" opacity="0.45"/>
<circle cx="1099.6" cy="143.2" r="0.7" fill="#fff" opacity="0.45"/>
<circle cx="1099.9" cy="149.4" r="0.6" fill="#fff" opacity="0.45"/>
<circle cx="1097.9" cy="141.1" r="0.9" fill="#fff" opacity="0.45"/>
<circle cx="1105.1" cy="140.2" r="0.5" fill="#fff" opacity="0.45"/>
<circle cx="1104.7" cy="145.4" r="0.5" fill="#fff" opacity="0.45"/>
<circle cx="1097.6" cy="146.0" r="0.6" fill="#fff" opacity="0.45"/>
<circle cx="1100.3" cy="142.5" r="0.9" fill="#fff" opacity="0.45"/>
<circle cx="1098.6" cy="147.7" r="0.7" fill="#fff" opacity="0.45"/>
<ellipse cx="1131" cy="146" rx="9" ry="9" fill="url(#cloud2)" opacity="0.55"/>
<circle cx="1137.9" cy="139.0" r="0.8" fill="#000" opacity="0.25"/>
<circle cx="1129.1" cy="144.2" r="0.7" fill="#000" opacity="0.35"/>
<circle cx="1131.4" cy="143.6" r="1.0" fill="#000" opacity="0.23"/>
<circle cx="1137.0" cy="145.3" r="0.6" fill="#000" opacity="0.27"/>
<circle cx="1135.8" cy="141.7" r="1.0" fill="#000" opacity="0.31"/>
<circle cx="1127.5" cy="150.1" r="0.8" fill="#000" opacity="0.24"/>
<circle cx="1125.4" cy="151.7" r="1.0" fill="#000" opacity="0.28"/>
<circle cx="1133.8" cy="149.7" r="0.7" fill="#000" opacity="0.29"/>
<circle cx="1132.8" cy="148.2" r="0.6" fill="#000" opacity="0.21"/>
<circle cx="1138.1" cy="147.3" r="1.0" fill="#000" opacity="0.27"/>
<circle cx="1130.3" cy="137.0" r="1.0" fill="#000" opacity="0.36"/>
<circle cx="1123.4" cy="148.9" r="0.5" fill="#000" opacity="0.36"/>
<circle cx="1126.1" cy="150.7" r="1.0" fill="#000" opacity="0.21"/>
<circle cx="1134.3" cy="154.4" r="0.8" fill="#000" opacity="0.16"/>
<circle cx="1136.8" cy="147.0" r="0.4" fill="#000" opacity="0.34"/>
<circle cx="1133.1" cy="150.7" r="0.7" fill="#000" opacity="0.26"/>
<circle cx="1123.8" cy="149.2" r="0.9" fill="#000" opacity="0.25"/>
<circle cx="1139.0" cy="151.6" r="0.9" fill="#000" opacity="0.16"/>
<circle cx="1123.0" cy="149.1" r="1.1" fill="#000" opacity="0.15"/>
<circle cx="1137.8" cy="146.4" r="0.7" fill="#000" opacity="0.36"/>
<circle cx="1133.6" cy="140.9" r="0.7" fill="#000" opacity="0.28"/>
<circle cx="1134.3" cy="143.0" r="0.7" fill="#000" opacity="0.16"/>
<circle cx="1130.0" cy="144.7" r="1.1" fill="#000" opacity="0.27"/>
<circle cx="1128.4" cy="144.7" r="0.6" fill="#000" opacity="0.25"/>
<circle cx="1135.5" cy="140.3" r="0.6" fill="#000" opacity="0.38"/>
<circle cx="1127.2" cy="139.9" r="0.5" fill="#000" opacity="0.21"/>
<circle cx="1133.9" cy="143.9" r="0.8" fill="#000" opacity="0.29"/>
<circle cx="1125.7" cy="152.9" r="1.0" fill="#000" opacity="0.35"/>
<circle cx="1130.7" cy="141.5" r="0.4" fill="#000" opacity="0.24"/>
<circle cx="1129.3" cy="150.0" r="1.0" fill="#000" opacity="0.19"/>
<circle cx="1135.2" cy="137.4" r="0.5" fill="#000" opacity="0.36"/>
<circle cx="1127.4" cy="148.7" r="0.5" fill="#000" opacity="0.15"/>
<circle cx="1124.9" cy="146.0" r="1.0" fill="#000" opacity="0.34"/>
<circle cx="1136.9" cy="148.2" r="0.7" fill="#000" opacity="0.18"/>
<circle cx="1131.0" cy="151.1" r="0.9" fill="#000" opacity="0.22"/>
<circle cx="1134.6" cy="149.0" r="0.7" fill="#000" opacity="0.28"/>
<circle cx="1131.2" cy="154.3" r="0.6" fill="#000" opacity="0.30"/>
<circle cx="1127.8" cy="143.4" r="0.9" fill="#000" opacity="0.24"/>
<circle cx="1123.6" cy="144.1" r="0.8" fill="#000" opacity="0.25"/>
<circle cx="1139.2" cy="149.0" r="1.0" fill="#000" opacity="0.26"/>
<circle cx="1126.5" cy="143.6" r="1.0" fill="#000" opacity="0.31"/>
<circle cx="1132.6" cy="154.8" r="1.1" fill="#000" opacity="0.22"/>
<circle cx="1137.9" cy="145.8" r="0.5" fill="#000" opacity="0.31"/>
<circle cx="1126.5" cy="153.2" r="0.8" fill="#000" opacity="0.16"/>
<circle cx="1122.0" cy="144.4" r="0.7" fill="#000" opacity="0.27"/>
<circle cx="1135.3" cy="141.0" r="0.7" fill="#000" opacity="0.28"/>
<circle cx="1133.0" cy="142.0" r="0.5" fill="#000" opacity="0.33"/>
<circle cx="1125.8" cy="144.2" r="1.0" fill="#000" opacity="0.36"/>
<circle cx="1121.5" cy="143.5" r="1.0" fill="#000" opacity="0.32"/>
<circle cx="1130.7" cy="147.0" r="0.9" fill="#000" opacity="0.32"/>
<circle cx="1128.1" cy="150.0" r="0.7" fill="#fff" opacity="0.45"/>
<circle cx="1131.0" cy="152.0" r="0.7" fill="#fff" opacity="0.45"/>
<circle cx="1129.2" cy="147.6" r="0.7" fill="#fff" opacity="0.45"/>
<circle cx="1128.4" cy="151.6" r="0.5" fill="#fff" opacity="0.45"/>
<circle cx="1128.5" cy="148.0" r="0.6" fill="#fff" opacity="0.45"/>
<circle cx="1128.9" cy="144.9" r="0.4" fill="#fff" opacity="0.45"/>
<circle cx="1127.8" cy="146.4" r="0.7" fill="#fff" opacity="0.45"/>
<circle cx="1132.1" cy="148.0" r="0.7" fill="#fff" opacity="0.45"/>
<circle cx="1136.9" cy="142.9" r="0.7" fill="#fff" opacity="0.45"/>
<circle cx="1129.5" cy="147.1" r="0.5" fill="#fff" opacity="0.45"/>
<rect x="1023.5" y="155.5" width="5" height="5" fill="#6a8cff" opacity="0.7"/>
<path d="M1024,158 H1028 M1026,156 V160" stroke="#111" stroke-width="1.2"/>
<rect x="1052.5" y="155.5" width="5" height="5" fill="#f06060" opacity="0.7"/>
<path d="M1053,158 H1057 M1055,156 V160" stroke="#111" stroke-width="1.2"/>
<rect x="1082.5" y="155.5" width="5" height="5" fill="#f06060" opacity="0.7"/>
<path d="M1083,158 H1087 M1085,156 V160" stroke="#111" stroke-width="1.2"/>
<rect x="1111.0" y="155.5" width="5" height="5" fill="#f06060" opacity="0.7"/>
<path d="M1111.5,158 H1115.5 M1113.5,156 V160" stroke="#111" stroke-width="1.2"/>
<rect x="1140.5" y="155.5" width="5" height="5" fill="#f06060" opacity="0.7"/>
<path d="M1141,158 H1145 M1143,156 V160" stroke="#111" stroke-width="1.2"/>
<ellipse cx="1015" cy="176" rx="11" ry="11" fill="url(#cloud)" opacity="1"/>
<circle cx="1010.4" cy="186.8" r="0.5" fill="#000" opacity="0.68"/>
<circle cx="1007.1" cy="177.2" r="0.6" fill="#000" opacity="0.68"/>
<circle cx="1018.6" cy="184.4" r="0.8" fill="#000" opacity="0.34"/>
<circle cx="1017.0" cy="187.8" r="1.0" fill="#000" opacity="0.58"/>
<circle cx="1018.1" cy="173.8" r="0.9" fill="#000" opacity="0.59"/>
<circle cx="1016.3" cy="184.1" r="1.1" fill="#000" opacity="0.40"/>
<circle cx="1015.4" cy="171.1" r="0.9" fill="#000" opacity="0.37"/>
<circle cx="1007.6" cy="175.6" r="1.0" fill="#000" opacity="0.59"/>
<circle cx="1005.0" cy="175.7" r="0.7" fill="#000" opacity="0.61"/>
<circle cx="1014.6" cy="184.9" r="0.8" fill="#000" opacity="0.42"/>
<circle cx="1019.8" cy="177.4" r="0.8" fill="#000" opacity="0.35"/>
<circle cx="1015.4" cy="167.4" r="1.1" fill="#000" opacity="0.63"/>
<circle cx="1014.0" cy="168.7" r="0.4" fill="#000" opacity="0.50"/>
<circle cx="1014.7" cy="164.4" r="0.5" fill="#000" opacity="0.32"/>
<circle cx="1025.3" cy="174.7" r="0.7" fill="#000" opacity="0.58"/>
<circle cx="1020.3" cy="183.2" r="0.9" fill="#000" opacity="0.52"/>
<circle cx="1017.4" cy="179.8" r="0.8" fill="#000" opacity="0.65"/>
<circle cx="1015.7" cy="176.8" r="0.5" fill="#000" opacity="0.60"/>
<circle cx="1008.7" cy="181.2" r="1.1" fill="#000" opacity="0.53"/>
<circle cx="1014.2" cy="186.1" r="0.4" fill="#000" opacity="0.38"/>
<circle cx="1013.4" cy="171.3" r="0.4" fill="#000" opacity="0.48"/>
<circle cx="1009.4" cy="186.5" r="0.5" fill="#000" opacity="0.61"/>
<circle cx="1006.7" cy="183.0" r="0.7" fill="#000" opacity="0.55"/>
<circle cx="1012.3" cy="181.1" r="0.7" fill="#000" opacity="0.61"/>
<circle cx="1011.7" cy="180.8" r="0.7" fill="#000" opacity="0.29"/>
<circle cx="1011.3" cy="184.4" r="0.8" fill="#000" opacity="0.52"/>
<circle cx="1014.5" cy="177.8" r="0.4" fill="#000" opacity="0.40"/>
<circle cx="1018.0" cy="184.6" r="0.6" fill="#000" opacity="0.59"/>
<circle cx="1007.1" cy="170.1" r="0.9" fill="#000" opacity="0.48"/>
<circle cx="1009.0" cy="179.0" r="0.4" fill="#000" opacity="0.61"/>
<circle cx="1011.2" cy="176.0" r="1.0" fill="#000" opacity="0.51"/>
<circle cx="1009.3" cy="170.4" r="0.5" fill="#000" opacity="0.70"/>
<circle cx="1018.6" cy="182.4" r="1.1" fill="#000" opacity="0.30"/>
<circle cx="1006.6" cy="176.0" r="0.6" fill="#000" opacity="0.67"/>
<circle cx="1013.9" cy="176.7" r="0.7" fill="#000" opacity="0.25"/>
<circle cx="1012.1" cy="165.1" r="1.0" fill="#000" opacity="0.27"/>
<circle cx="1012.0" cy="170.0" r="0.7" fill="#000" opacity="0.39"/>
<circle cx="1013.5" cy="180.1" r="0.8" fill="#000" opacity="0.29"/>
<circle cx="1017.5" cy="175.4" r="1.1" fill="#000" opacity="0.34"/>
<circle cx="1024.0" cy="181.2" r="0.8" fill="#000" opacity="0.60"/>
<circle cx="1005.4" cy="175.5" r="0.5" fill="#000" opacity="0.55"/>
<circle cx="1003.2" cy="175.1" r="0.4" fill="#000" opacity="0.28"/>
<circle cx="1009.8" cy="165.6" r="0.7" fill="#000" opacity="0.57"/>
<circle cx="1008.0" cy="173.2" r="0.7" fill="#000" opacity="0.52"/>
<circle cx="1021.6" cy="177.2" r="0.9" fill="#000" opacity="0.37"/>
<circle cx="1009.0" cy="177.0" r="0.7" fill="#000" opacity="0.54"/>
<circle cx="1014.5" cy="164.2" r="0.7" fill="#000" opacity="0.34"/>
<circle cx="1013.5" cy="178.5" r="0.6" fill="#000" opacity="0.51"/>
<circle cx="1010.4" cy="172.2" r="0.5" fill="#000" opacity="0.29"/>
<circle cx="1018.7" cy="183.7" r="0.6" fill="#000" opacity="0.65"/>
<circle cx="1008.5" cy="173.2" r="0.7" fill="#000" opacity="0.27"/>
<circle cx="1013.9" cy="165.6" r="0.7" fill="#000" opacity="0.58"/>
<circle cx="1014.2" cy="181.6" r="0.6" fill="#000" opacity="0.34"/>
<circle cx="1007.4" cy="170.0" r="0.9" fill="#000" opacity="0.30"/>
<circle cx="1015.9" cy="167.7" r="0.7" fill="#000" opacity="0.48"/>
<circle cx="1010.1" cy="178.2" r="0.7" fill="#000" opacity="0.54"/>
<circle cx="1012.5" cy="164.7" r="0.5" fill="#000" opacity="0.65"/>
<circle cx="1018.2" cy="166.3" r="1.1" fill="#000" opacity="0.31"/>
<circle cx="1016.9" cy="164.7" r="0.5" fill="#000" opacity="0.52"/>
<circle cx="1021.2" cy="173.9" r="1.0" fill="#000" opacity="0.66"/>
<circle cx="1010.8" cy="177.8" r="0.6" fill="#000" opacity="0.62"/>
<circle cx="1009.0" cy="179.2" r="0.7" fill="#000" opacity="0.67"/>
<circle cx="1015.0" cy="177.6" r="1.1" fill="#000" opacity="0.39"/>
<circle cx="1006.0" cy="183.9" r="0.6" fill="#000" opacity="0.29"/>
<circle cx="1019.5" cy="172.1" r="0.6" fill="#000" opacity="0.67"/>
<circle cx="1016.5" cy="187.4" r="0.6" fill="#000" opacity="0.39"/>
<circle cx="1016.9" cy="184.7" r="0.8" fill="#000" opacity="0.43"/>
<circle cx="1008.4" cy="175.7" r="1.0" fill="#000" opacity="0.67"/>
<circle cx="1015.2" cy="165.0" r="0.4" fill="#000" opacity="0.36"/>
<circle cx="1016.4" cy="180.6" r="1.1" fill="#000" opacity="0.66"/>
<circle cx="1022.8" cy="171.4" r="0.5" fill="#000" opacity="0.44"/>
<circle cx="1025.8" cy="180.0" r="0.6" fill="#000" opacity="0.38"/>
<circle cx="1020.1" cy="174.2" r="1.0" fill="#000" opacity="0.39"/>
<circle cx="1013.0" cy="172.6" r="1.0" fill="#000" opacity="0.43"/>
<circle cx="1009.5" cy="184.1" r="0.8" fill="#000" opacity="0.36"/>
<circle cx="1021.5" cy="182.5" r="0.4" fill="#000" opacity="0.64"/>
<circle cx="1012.2" cy="180.1" r="0.6" fill="#000" opacity="0.30"/>
<circle cx="1011.4" cy="184.1" r="0.7" fill="#000" opacity="0.40"/>
<circle cx="1012.9" cy="184.2" r="0.9" fill="#000" opacity="0.45"/>
<circle cx="1015.9" cy="167.6" r="0.5" fill="#000" opacity="0.33"/>
<circle cx="1019.8" cy="169.2" r="0.7" fill="#000" opacity="0.48"/>
<circle cx="1019.2" cy="169.9" r="0.7" fill="#000" opacity="0.41"/>
<circle cx="1023.9" cy="176.6" r="0.7" fill="#000" opacity="0.47"/>
<circle cx="1007.1" cy="178.5" r="0.9" fill="#000" opacity="0.33"/>
<circle cx="1019.1" cy="175.5" r="1.0" fill="#000" opacity="0.33"/>
<circle cx="1016.7" cy="170.1" r="0.5" fill="#000" opacity="0.49"/>
<circle cx="1020.9" cy="166.6" r="1.0" fill="#000" opacity="0.69"/>
<circle cx="1022.0" cy="178.4" r="0.5" fill="#000" opacity="0.59"/>
<circle cx="1005.0" cy="179.1" r="1.0" fill="#000" opacity="0.70"/>
<circle cx="1010.0" cy="165.9" r="0.8" fill="#000" opacity="0.29"/>
<circle cx="1017.8" cy="173.7" r="0.5" fill="#000" opacity="0.62"/>
<circle cx="1013.1" cy="185.7" r="0.4" fill="#000" opacity="0.34"/>
<circle cx="1014.5" cy="173.7" r="0.8" fill="#000" opacity="0.67"/>
<circle cx="1017.3" cy="185.9" r="0.9" fill="#000" opacity="0.53"/>
<circle cx="1016.0" cy="165.9" r="0.4" fill="#000" opacity="0.34"/>
<circle cx="1003.4" cy="173.3" r="0.6" fill="#000" opacity="0.51"/>
<circle cx="1022.7" cy="184.0" r="0.7" fill="#000" opacity="0.48"/>
<circle cx="1012.8" cy="172.1" r="0.9" fill="#000" opacity="0.61"/>
<circle cx="1019.1" cy="171.0" r="0.6" fill="#000" opacity="0.32"/>
<circle cx="1021.5" cy="171.3" r="0.7" fill="#000" opacity="0.48"/>
<circle cx="1012.8" cy="169.5" r="0.6" fill="#000" opacity="0.59"/>
<circle cx="1016.1" cy="169.5" r="0.5" fill="#000" opacity="0.67"/>
<circle cx="1013.8" cy="166.7" r="0.7" fill="#000" opacity="0.68"/>
<circle cx="1009.9" cy="178.4" r="0.5" fill="#000" opacity="0.41"/>
<circle cx="1009.1" cy="171.7" r="1.1" fill="#000" opacity="0.54"/>
<circle cx="1005.5" cy="178.6" r="0.8" fill="#000" opacity="0.53"/>
<circle cx="1006.3" cy="176.3" r="0.7" fill="#000" opacity="0.62"/>
<circle cx="1018.8" cy="186.0" r="0.6" fill="#000" opacity="0.63"/>
<circle cx="1022.6" cy="179.7" r="0.7" fill="#000" opacity="0.57"/>
<circle cx="1016.8" cy="181.9" r="0.5" fill="#000" opacity="0.50"/>
<circle cx="1014.8" cy="175.9" r="0.5" fill="#fff" opacity="0.45"/>
<circle cx="1017.7" cy="184.2" r="0.6" fill="#fff" opacity="0.45"/>
<circle cx="1010.7" cy="174.1" r="0.7" fill="#fff" opacity="0.45"/>
<circle cx="1017.8" cy="169.3" r="0.4" fill="#fff" opacity="0.45"/>
<circle cx="1009.3" cy="178.3" r="0.4" fill="#fff" opacity="0.45"/>
<circle cx="1016.2" cy="171.2" r="0.5" fill="#fff" opacity="0.45"/>
<circle cx="1010.2" cy="171.2" r="0.6" fill="#fff" opacity="0.45"/>
<circle cx="1019.0" cy="171.1" r="0.6" fill="#fff" opacity="0.45"/>
<circle cx="1021.0" cy="178.6" r="0.6" fill="#fff" opacity="0.45"/>
<circle cx="1009.9" cy="174.8" r="0.4" fill="#fff" opacity="0.45"/>
<circle cx="1018.4" cy="176.8" r="0.4" fill="#fff" opacity="0.45"/>
<circle cx="1019.0" cy="170.6" r="0.5" fill="#fff" opacity="0.45"/>
<circle cx="1013.3" cy="169.2" r="0.4" fill="#fff" opacity="0.45"/>
<circle cx="1015.0" cy="171.8" r="0.9" fill="#fff" opacity="0.45"/>
<circle cx="1018.0" cy="179.7" r="0.5" fill="#fff" opacity="0.45"/>
<circle cx="1020.2" cy="169.9" r="0.7" fill="#fff" opacity="0.45"/>
<circle cx="1018.4" cy="180.6" r="0.8" fill="#fff" opacity="0.45"/>
<circle cx="1022.9" cy="179.0" r="0.8" fill="#fff" opacity="0.45"/>
<circle cx="1021.7" cy="172.9" r="0.7" fill="#fff" opacity="0.45"/>
<circle cx="1019.5" cy="175.3" r="0.6" fill="#fff" opacity="0.45"/>
<path d="M1036,165 L1039,171" stroke="#777" stroke-width="1.5"/>
<circle cx="1074" cy="165" r="1" fill="#333"/>
<circle cx="1065" cy="178" r="1.3" fill="#333"/>
<circle cx="1070" cy="173" r="0.9" fill="#333"/>
<circle cx="1079" cy="170" r="1.1" fill="#333"/>
<circle cx="1075" cy="183" r="1.2" fill="#333"/>
<circle cx="1061" cy="176" r="0.8" fill="#333"/>
<circle cx="1083" cy="176" r="1" fill="#333"/>
<circle cx="1094.7" cy="168.0" r="1.4" fill="#222"/>
<circle cx="1094.1" cy="180.4" r="1.1" fill="#222"/>
<circle cx="1111.3" cy="180.7" r="1.3" fill="#222"/>
<circle cx="1110.6" cy="164.9" r="1.0" fill="#222"/>
<circle cx="1100.1" cy="173.4" r="1.3" fill="#222"/>
<circle cx="1111.3" cy="180.3" r="1.5" fill="#222"/>
<circle cx="1107.3" cy="171.8" r="1.2" fill="#222"/>
<circle cx="1108.5" cy="181.9" r="1.1" fill="#222"/>
<circle cx="1099.8" cy="177.5" r="1.0" fill="#222"/>
<circle cx="1111.4" cy="164.0" r="1.3" fill="#222"/>
<circle cx="1102.7" cy="168.3" r="1.3" fill="#222"/>
<circle cx="1102.4" cy="185.2" r="1.5" fill="#222"/>
<circle cx="1104.9" cy="183.2" r="1.5" fill="#222"/>
<circle cx="1095.6" cy="182.2" r="1.5" fill="#222"/>
<circle cx="1113.8" cy="180.7" r="1.1" fill="#222"/>
<circle cx="1096.5" cy="178.4" r="1.0" fill="#222"/>
<circle cx="1108.7" cy="176.6" r="1.5" fill="#222"/>
<circle cx="1099.8" cy="170.7" r="1.5" fill="#222"/>
<circle cx="1135.2" cy="172.3" r="0.6" fill="#222"/>
<circle cx="1132.9" cy="173.6" r="0.6" fill="#222"/>
<circle cx="1134.8" cy="175.4" r="0.6" fill="#222"/>
<circle cx="1126.6" cy="185.6" r="0.6" fill="#222"/>
<circle cx="1140.4" cy="180.7" r="0.6" fill="#222"/>
<circle cx="1126.4" cy="168.3" r="0.6" fill="#222"/>
<circle cx="1136.8" cy="182.1" r="0.6" fill="#222"/>
<circle cx="1135.0" cy="168.7" r="0.6" fill="#222"/>
<circle cx="1136.6" cy="175.5" r="0.6" fill="#222"/>
<circle cx="1128.6" cy="177.0" r="0.6" fill="#222"/>
<circle cx="1130.3" cy="178.3" r="0.6" fill="#222"/>
<circle cx="1137.3" cy="185.6" r="0.6" fill="#222"/>
<circle cx="1122.6" cy="176.6" r="0.6" fill="#222"/>
<circle cx="1141.7" cy="178.5" r="0.6" fill="#222"/>
<circle cx="1133.3" cy="182.8" r="0.6" fill="#222"/>
<circle cx="1120.7" cy="181.4" r="0.6" fill="#222"/>
<circle cx="1134.3" cy="176.9" r="0.6" fill="#222"/>
<circle cx="1127.1" cy="177.6" r="0.6" fill="#222"/>
<circle cx="1122.9" cy="175.6" r="0.6" fill="#222"/>
<circle cx="1125.9" cy="184.5" r="0.6" fill="#222"/>
<circle cx="1138.5" cy="174.4" r="0.6" fill="#222"/>
<circle cx="1137.4" cy="172.5" r="0.6" fill="#222"/>
<rect x="1023.5" y="184.5" width="5" height="5" fill="#f06060" opacity="0.7"/>
<path d="M1024,187 H1028 M1026,185 V189" stroke="#111" stroke-width="1.2"/>
<path d="M1053,190 L1058,185 L1058,190 Z" fill="#f06060"/>
<path d="M1083,187 H1087 M1085,185 V189" stroke="#222" stroke-width="1.2"/>
<path d="M1111.5,187 H1115.5 M1113.5,185 V189" stroke="#222" stroke-width="1.2"/>
<ellipse cx="1015" cy="205" rx="12" ry="12" fill="url(#cloud2)" opacity="0.5"/>
<circle cx="1009.8" cy="204.2" r="1.0" fill="#000" opacity="0.30"/>
<circle cx="1015.2" cy="201.2" r="1.0" fill="#000" opacity="0.13"/>
<circle cx="1006.5" cy="201.3" r="0.4" fill="#000" opacity="0.22"/>
<circle cx="1022.9" cy="198.2" r="0.6" fill="#000" opacity="0.31"/>
<circle cx="1007.3" cy="214.9" r="0.7" fill="#000" opacity="0.14"/>
<circle cx="1018.5" cy="204.4" r="0.6" fill="#000" opacity="0.30"/>
<circle cx="1022.3" cy="211.4" r="1.0" fill="#000" opacity="0.26"/>
<circle cx="1008.4" cy="214.4" r="1.0" fill="#000" opacity="0.26"/>
<circle cx="1009.8" cy="199.6" r="0.7" fill="#000" opacity="0.35"/>
<circle cx="1015.5" cy="204.9" r="0.5" fill="#000" opacity="0.18"/>
<circle cx="1016.6" cy="199.3" r="0.5" fill="#000" opacity="0.30"/>
<circle cx="1021.4" cy="216.4" r="0.7" fill="#000" opacity="0.33"/>
<circle cx="1017.5" cy="199.6" r="0.9" fill="#000" opacity="0.22"/>
<circle cx="1015.5" cy="207.8" r="0.9" fill="#000" opacity="0.25"/>
<circle cx="1011.1" cy="216.4" r="0.5" fill="#000" opacity="0.23"/>
<circle cx="1021.7" cy="209.1" r="1.0" fill="#000" opacity="0.24"/>
<circle cx="1018.7" cy="210.3" r="0.9" fill="#000" opacity="0.19"/>
<circle cx="1017.5" cy="202.9" r="1.0" fill="#000" opacity="0.26"/>
<circle cx="1018.4" cy="197.9" r="0.4" fill="#000" opacity="0.16"/>
<circle cx="1013.5" cy="203.5" r="0.5" fill="#000" opacity="0.30"/>
<circle cx="1023.8" cy="196.5" r="1.0" fill="#000" opacity="0.25"/>
<circle cx="1022.8" cy="197.2" r="0.8" fill="#000" opacity="0.22"/>
<circle cx="1018.9" cy="205.6" r="0.6" fill="#000" opacity="0.23"/>
<circle cx="1024.4" cy="214.0" r="0.8" fill="#000" opacity="0.29"/>
<circle cx="1019.9" cy="201.1" r="1.0" fill="#000" opacity="0.34"/>
<circle cx="1014.5" cy="209.6" r="1.0" fill="#000" opacity="0.33"/>
<circle cx="1017.5" cy="197.0" r="0.8" fill="#000" opacity="0.15"/>
<circle cx="1015.8" cy="213.5" r="0.9" fill="#000" opacity="0.14"/>
<circle cx="1017.1" cy="204.0" r="1.1" fill="#000" opacity="0.18"/>
<circle cx="1020.0" cy="194.2" r="1.1" fill="#000" opacity="0.23"/>
<circle cx="1012.7" cy="198.2" r="1.0" fill="#000" opacity="0.15"/>
<circle cx="1022.6" cy="198.2" r="0.4" fill="#000" opacity="0.34"/>
<circle cx="1013.6" cy="208.2" r="0.6" fill="#000" opacity="0.13"/>
<circle cx="1012.8" cy="215.9" r="1.1" fill="#000" opacity="0.27"/>
<circle cx="1022.3" cy="195.5" r="0.9" fill="#000" opacity="0.21"/>
<circle cx="1014.9" cy="210.2" r="0.8" fill="#000" opacity="0.17"/>
<circle cx="1014.5" cy="197.5" r="0.8" fill="#000" opacity="0.25"/>
<circle cx="1011.4" cy="201.3" r="0.6" fill="#000" opacity="0.28"/>
<circle cx="1017.5" cy="215.5" r="1.1" fill="#000" opacity="0.21"/>
<circle cx="1025.0" cy="202.5" r="1.1" fill="#000" opacity="0.24"/>
<circle cx="1015.2" cy="194.1" r="0.5" fill="#000" opacity="0.24"/>
<circle cx="1007.1" cy="200.6" r="0.9" fill="#000" opacity="0.33"/>
<circle cx="1018.3" cy="193.6" r="0.5" fill="#000" opacity="0.28"/>
<circle cx="1006.1" cy="195.8" r="0.4" fill="#000" opacity="0.16"/>
<circle cx="1023.0" cy="203.8" r="0.9" fill="#000" opacity="0.26"/>
<circle cx="1008.0" cy="210.2" r="0.8" fill="#000" opacity="0.35"/>
<circle cx="1003.5" cy="202.6" r="0.6" fill="#000" opacity="0.29"/>
<circle cx="1006.0" cy="198.0" r="1.0" fill="#000" opacity="0.14"/>
<circle cx="1025.1" cy="202.9" r="0.6" fill="#000" opacity="0.23"/>
<circle cx="1020.2" cy="208.6" r="1.0" fill="#000" opacity="0.29"/>
<circle cx="1018.6" cy="201.0" r="0.5" fill="#000" opacity="0.21"/>
<circle cx="1003.9" cy="205.3" r="0.6" fill="#000" opacity="0.29"/>
<circle cx="1008.9" cy="201.4" r="1.0" fill="#000" opacity="0.14"/>
<circle cx="1010.2" cy="201.9" r="0.4" fill="#000" opacity="0.23"/>
<circle cx="1004.7" cy="203.7" r="0.7" fill="#000" opacity="0.33"/>
<circle cx="1016.1" cy="199.9" r="0.4" fill="#000" opacity="0.34"/>
<circle cx="1011.4" cy="207.3" r="0.5" fill="#000" opacity="0.28"/>
<circle cx="1018.6" cy="212.2" r="0.9" fill="#000" opacity="0.20"/>
<circle cx="1007.7" cy="194.4" r="1.0" fill="#000" opacity="0.27"/>
<circle cx="1009.8" cy="199.8" r="0.8" fill="#000" opacity="0.27"/>
<circle cx="1007.1" cy="200.2" r="0.9" fill="#000" opacity="0.17"/>
<circle cx="1012.0" cy="192.3" r="0.4" fill="#000" opacity="0.18"/>
<circle cx="1018.8" cy="204.7" r="1.0" fill="#000" opacity="0.26"/>
<circle cx="1024.5" cy="209.4" r="0.4" fill="#000" opacity="0.32"/>
<circle cx="1010.9" cy="217.0" r="1.0" fill="#000" opacity="0.16"/>
<circle cx="1010.8" cy="208.0" r="0.9" fill="#000" opacity="0.15"/>
<circle cx="1019.0" cy="207.0" r="1.0" fill="#000" opacity="0.18"/>
<circle cx="1011.1" cy="212.9" r="0.8" fill="#000" opacity="0.22"/>
<circle cx="1022.3" cy="202.5" r="0.7" fill="#000" opacity="0.32"/>
<circle cx="1015.2" cy="210.5" r="1.0" fill="#000" opacity="0.20"/>
<circle cx="1024.3" cy="197.5" r="0.7" fill="#000" opacity="0.20"/>
<circle cx="1024.9" cy="212.3" r="0.7" fill="#000" opacity="0.20"/>
<circle cx="1017.8" cy="210.6" r="1.0" fill="#000" opacity="0.15"/>
<circle cx="1005.2" cy="201.5" r="0.8" fill="#000" opacity="0.24"/>
<circle cx="1010.4" cy="208.5" r="1.0" fill="#000" opacity="0.33"/>
<circle cx="1008.9" cy="202.4" r="1.0" fill="#000" opacity="0.17"/>
<circle cx="1020.0" cy="214.2" r="1.0" fill="#000" opacity="0.25"/>
<circle cx="1025.1" cy="213.3" r="0.5" fill="#000" opacity="0.20"/>
<circle cx="1026.7" cy="204.1" r="0.9" fill="#000" opacity="0.14"/>
<circle cx="1020.0" cy="198.3" r="0.4" fill="#000" opacity="0.30"/>
<circle cx="1016.9" cy="204.1" r="0.6" fill="#fff" opacity="0.45"/>
<circle cx="1019.5" cy="201.8" r="0.6" fill="#fff" opacity="0.45"/>
<circle cx="1016.2" cy="198.7" r="0.9" fill="#fff" opacity="0.45"/>
<circle cx="1020.5" cy="198.0" r="0.8" fill="#fff" opacity="0.45"/>
<circle cx="1017.7" cy="212.5" r="0.7" fill="#fff" opacity="0.45"/>
<circle cx="1007.8" cy="205.8" r="0.6" fill="#fff" opacity="0.45"/>
<circle cx="1018.0" cy="213.7" r="0.6" fill="#fff" opacity="0.45"/>
<circle cx="1022.5" cy="210.9" r="0.7" fill="#fff" opacity="0.45"/>
<circle cx="1012.5" cy="200.0" r="0.5" fill="#fff" opacity="0.45"/>
<circle cx="1010.7" cy="212.6" r="0.5" fill="#fff" opacity="0.45"/>
<clipPath id="lace1"><circle cx="1044" cy="205" r="12.5"/></clipPath><g clip-path="url(#lace1)"><circle cx="1044" cy="205" r="12.5" fill="#222"/>
<circle cx="1030.0" cy="190.3" r="2.3" fill="#fff"/>
<circle cx="1035.6" cy="190.3" r="1.8" fill="#fff"/>
<circle cx="1041.2" cy="190.3" r="2.3" fill="#fff"/>
<circle cx="1046.8" cy="190.3" r="1.7" fill="#fff"/>
<circle cx="1052.4" cy="190.3" r="2.0" fill="#fff"/>
<circle cx="1058.0" cy="190.3" r="1.7" fill="#fff"/>
<circle cx="1063.6" cy="190.3" r="1.7" fill="#fff"/>
<circle cx="1027.2" cy="195.2" r="2.0" fill="#fff"/>
<circle cx="1032.8" cy="195.2" r="1.9" fill="#fff"/>
<circle cx="1038.4" cy="195.2" r="2.0" fill="#fff"/>
<circle cx="1044.0" cy="195.2" r="1.8" fill="#fff"/>
<circle cx="1049.6" cy="195.2" r="1.8" fill="#fff"/>
<circle cx="1055.2" cy="195.2" r="1.9" fill="#fff"/>
<circle cx="1060.8" cy="195.2" r="2.3" fill="#fff"/>
<circle cx="1030.0" cy="200.1" r="1.7" fill="#fff"/>
<circle cx="1035.6" cy="200.1" r="1.9" fill="#fff"/>
<circle cx="1041.2" cy="200.1" r="2.3" fill="#fff"/>
<circle cx="1046.8" cy="200.1" r="2.1" fill="#fff"/>
<circle cx="1052.4" cy="200.1" r="1.8" fill="#fff"/>
<circle cx="1058.0" cy="200.1" r="2.4" fill="#fff"/>
<circle cx="1063.6" cy="200.1" r="1.7" fill="#fff"/>
<circle cx="1027.2" cy="205.0" r="1.7" fill="#fff"/>
<circle cx="1032.8" cy="205.0" r="1.6" fill="#fff"/>
<circle cx="1038.4" cy="205.0" r="2.0" fill="#fff"/>
<circle cx="1044.0" cy="205.0" r="2.3" fill="#fff"/>
<circle cx="1049.6" cy="205.0" r="1.8" fill="#fff"/>
<circle cx="1055.2" cy="205.0" r="1.8" fill="#fff"/>
<circle cx="1060.8" cy="205.0" r="2.2" fill="#fff"/>
<circle cx="1030.0" cy="209.9" r="1.7" fill="#fff"/>
<circle cx="1035.6" cy="209.9" r="1.6" fill="#fff"/>
<circle cx="1041.2" cy="209.9" r="2.1" fill="#fff"/>
<circle cx="1046.8" cy="209.9" r="1.7" fill="#fff"/>
<circle cx="1052.4" cy="209.9" r="2.0" fill="#fff"/>
<circle cx="1058.0" cy="209.9" r="1.7" fill="#fff"/>
<circle cx="1063.6" cy="209.9" r="2.1" fill="#fff"/>
<circle cx="1027.2" cy="214.8" r="2.3" fill="#fff"/>
<circle cx="1032.8" cy="214.8" r="2.0" fill="#fff"/>
<circle cx="1038.4" cy="214.8" r="1.8" fill="#fff"/>
<circle cx="1044.0" cy="214.8" r="2.1" fill="#fff"/>
<circle cx="1049.6" cy="214.8" r="2.2" fill="#fff"/>
<circle cx="1055.2" cy="214.8" r="1.6" fill="#fff"/>
<circle cx="1060.8" cy="214.8" r="1.8" fill="#fff"/>
<circle cx="1030.0" cy="219.7" r="1.9" fill="#fff"/>
<circle cx="1035.6" cy="219.7" r="2.0" fill="#fff"/>
<circle cx="1041.2" cy="219.7" r="1.8" fill="#fff"/>
<circle cx="1046.8" cy="219.7" r="2.1" fill="#fff"/>
<circle cx="1052.4" cy="219.7" r="1.8" fill="#fff"/>
<circle cx="1058.0" cy="219.7" r="2.3" fill="#fff"/>
<circle cx="1063.6" cy="219.7" r="1.9" fill="#fff"/>
</g>
<ellipse cx="1073" cy="205" rx="11" ry="12" fill="url(#cloud)" opacity="0.85"/>
<circle cx="1073.6" cy="208.6" r="0.5" fill="#000" opacity="0.29"/>
<circle cx="1078.8" cy="199.3" r="0.7" fill="#000" opacity="0.58"/>
<circle cx="1083.4" cy="202.6" r="0.6" fill="#000" opacity="0.34"/>
<circle cx="1066.9" cy="204.8" r="0.6" fill="#000" opacity="0.29"/>
<circle cx="1073.6" cy="216.4" r="0.8" fill="#000" opacity="0.38"/>
<circle cx="1063.7" cy="206.8" r="0.9" fill="#000" opacity="0.22"/>
<circle cx="1077.6" cy="197.5" r="0.6" fill="#000" opacity="0.58"/>
<circle cx="1073.3" cy="197.2" r="0.4" fill="#000" opacity="0.38"/>
<circle cx="1066.1" cy="208.0" r="0.5" fill="#000" opacity="0.43"/>
<circle cx="1072.7" cy="216.5" r="0.8" fill="#000" opacity="0.32"/>
<circle cx="1076.7" cy="197.2" r="0.5" fill="#000" opacity="0.32"/>
<circle cx="1080.5" cy="207.8" r="1.0" fill="#000" opacity="0.57"/>
<circle cx="1070.3" cy="200.8" r="0.6" fill="#000" opacity="0.29"/>
<circle cx="1066.3" cy="212.6" r="0.4" fill="#000" opacity="0.40"/>
<circle cx="1064.2" cy="209.8" r="1.0" fill="#000" opacity="0.36"/>
<circle cx="1068.0" cy="200.9" r="0.7" fill="#000" opacity="0.46"/>
<circle cx="1081.2" cy="208.1" r="0.8" fill="#000" opacity="0.28"/>
<circle cx="1073.1" cy="217.0" r="0.6" fill="#000" opacity="0.29"/>
<circle cx="1071.1" cy="214.3" r="0.7" fill="#000" opacity="0.35"/>
<circle cx="1070.5" cy="210.5" r="0.8" fill="#000" opacity="0.44"/>
<circle cx="1080.9" cy="210.4" r="0.6" fill="#000" opacity="0.59"/>
<circle cx="1077.1" cy="203.2" r="0.9" fill="#000" opacity="0.34"/>
<circle cx="1081.7" cy="212.9" r="1.0" fill="#000" opacity="0.51"/>
<circle cx="1065.2" cy="195.1" r="0.8" fill="#000" opacity="0.47"/>
<circle cx="1066.6" cy="195.0" r="1.0" fill="#000" opacity="0.33"/>
<circle cx="1075.3" cy="214.4" r="0.8" fill="#000" opacity="0.35"/>
<circle cx="1080.1" cy="195.7" r="0.9" fill="#000" opacity="0.42"/>
<circle cx="1071.2" cy="199.5" r="1.0" fill="#000" opacity="0.26"/>
<circle cx="1080.9" cy="199.1" r="0.6" fill="#000" opacity="0.29"/>
<circle cx="1066.3" cy="199.7" r="0.9" fill="#000" opacity="0.25"/>
<circle cx="1078.6" cy="198.9" r="0.7" fill="#000" opacity="0.49"/>
<circle cx="1066.7" cy="199.5" r="0.6" fill="#000" opacity="0.39"/>
<circle cx="1079.0" cy="206.3" r="1.0" fill="#000" opacity="0.26"/>
<circle cx="1082.6" cy="211.3" r="0.7" fill="#000" opacity="0.42"/>
<circle cx="1064.3" cy="199.2" r="0.6" fill="#000" opacity="0.51"/>
<circle cx="1084.1" cy="205.0" r="0.6" fill="#000" opacity="0.45"/>
<circle cx="1069.5" cy="215.8" r="0.7" fill="#000" opacity="0.44"/>
<circle cx="1068.3" cy="215.9" r="0.9" fill="#000" opacity="0.29"/>
<circle cx="1073.5" cy="192.2" r="0.6" fill="#000" opacity="0.29"/>
<circle cx="1083.8" cy="199.6" r="0.5" fill="#000" opacity="0.51"/>
<circle cx="1078.6" cy="202.1" r="0.9" fill="#000" opacity="0.33"/>
<circle cx="1075.0" cy="195.8" r="0.7" fill="#000" opacity="0.26"/>
<circle cx="1067.2" cy="196.0" r="0.6" fill="#000" opacity="0.23"/>
<circle cx="1078.2" cy="208.6" r="1.1" fill="#000" opacity="0.50"/>
<circle cx="1081.3" cy="198.1" r="0.5" fill="#000" opacity="0.36"/>
<circle cx="1083.6" cy="201.2" r="1.1" fill="#000" opacity="0.53"/>
<circle cx="1070.4" cy="193.8" r="1.0" fill="#000" opacity="0.38"/>
<circle cx="1079.6" cy="206.5" r="0.4" fill="#000" opacity="0.32"/>
<circle cx="1067.6" cy="201.3" r="0.6" fill="#000" opacity="0.25"/>
<circle cx="1067.5" cy="212.4" r="0.8" fill="#000" opacity="0.57"/>
<circle cx="1078.5" cy="207.9" r="0.5" fill="#000" opacity="0.57"/>
<circle cx="1066.4" cy="197.1" r="1.0" fill="#000" opacity="0.21"/>
<circle cx="1078.7" cy="200.7" r="0.8" fill="#000" opacity="0.37"/>
<circle cx="1072.8" cy="197.7" r="0.6" fill="#000" opacity="0.31"/>
<circle cx="1071.7" cy="196.2" r="0.5" fill="#000" opacity="0.35"/>
<circle cx="1066.3" cy="201.7" r="0.8" fill="#000" opacity="0.53"/>
<circle cx="1066.1" cy="195.9" r="0.6" fill="#000" opacity="0.55"/>
<circle cx="1081.2" cy="201.5" r="0.4" fill="#000" opacity="0.25"/>
<circle cx="1073.5" cy="192.7" r="0.9" fill="#000" opacity="0.41"/>
<circle cx="1069.0" cy="203.9" r="0.8" fill="#000" opacity="0.59"/>
<circle cx="1075.6" cy="214.9" r="1.0" fill="#000" opacity="0.46"/>
<circle cx="1069.5" cy="210.2" r="0.9" fill="#000" opacity="0.57"/>
<circle cx="1078.5" cy="199.2" r="0.9" fill="#000" opacity="0.52"/>
<circle cx="1065.5" cy="213.1" r="0.7" fill="#000" opacity="0.29"/>
<circle cx="1083.3" cy="205.0" r="0.9" fill="#000" opacity="0.23"/>
<circle cx="1079.3" cy="207.8" r="0.5" fill="#000" opacity="0.49"/>
<circle cx="1076.4" cy="214.4" r="0.8" fill="#000" opacity="0.35"/>
<circle cx="1077.9" cy="198.1" r="0.8" fill="#000" opacity="0.47"/>
<circle cx="1068.7" cy="208.2" r="1.1" fill="#000" opacity="0.50"/>
<circle cx="1064.8" cy="202.4" r="0.8" fill="#000" opacity="0.33"/>
<circle cx="1081.0" cy="209.3" r="1.0" fill="#000" opacity="0.25"/>
<circle cx="1080.3" cy="204.0" r="1.1" fill="#000" opacity="0.51"/>
<circle cx="1072.2" cy="211.0" r="1.0" fill="#000" opacity="0.59"/>
<circle cx="1076.1" cy="195.5" r="0.8" fill="#000" opacity="0.51"/>
<circle cx="1077.9" cy="194.2" r="0.6" fill="#000" opacity="0.53"/>
<circle cx="1081.8" cy="202.1" r="0.4" fill="#000" opacity="0.28"/>
<circle cx="1068.4" cy="198.0" r="1.0" fill="#000" opacity="0.46"/>
<circle cx="1071.5" cy="200.1" r="0.8" fill="#000" opacity="0.48"/>
<circle cx="1083.0" cy="198.7" r="0.6" fill="#000" opacity="0.40"/>
<circle cx="1076.6" cy="204.5" r="0.4" fill="#000" opacity="0.28"/>
<circle cx="1072.2" cy="197.5" r="0.9" fill="#000" opacity="0.53"/>
<circle cx="1073.9" cy="202.5" r="0.9" fill="#000" opacity="0.52"/>
<circle cx="1069.7" cy="193.3" r="1.0" fill="#000" opacity="0.45"/>
<circle cx="1078.9" cy="197.7" r="0.5" fill="#000" opacity="0.32"/>
<circle cx="1079.4" cy="201.9" r="0.7" fill="#000" opacity="0.55"/>
<circle cx="1068.8" cy="194.2" r="0.7" fill="#000" opacity="0.41"/>
<circle cx="1077.8" cy="207.7" r="0.5" fill="#000" opacity="0.42"/>
<circle cx="1069.8" cy="204.4" r="0.8" fill="#000" opacity="0.25"/>
<circle cx="1071.5" cy="206.4" r="0.7" fill="#000" opacity="0.27"/>
<circle cx="1079.8" cy="202.1" r="1.0" fill="#000" opacity="0.38"/>
<circle cx="1067.8" cy="215.7" r="0.6" fill="#000" opacity="0.41"/>
<circle cx="1065.3" cy="194.9" r="0.9" fill="#000" opacity="0.23"/>
<circle cx="1061.6" cy="208.5" r="1.0" fill="#000" opacity="0.35"/>
<circle cx="1077.3" cy="209.9" r="0.9" fill="#000" opacity="0.28"/>
<circle cx="1077.9" cy="200.7" r="0.9" fill="#000" opacity="0.48"/>
<circle cx="1073.4" cy="214.5" r="0.8" fill="#000" opacity="0.32"/>
<circle cx="1063.6" cy="202.9" r="1.1" fill="#000" opacity="0.32"/>
<circle cx="1077.0" cy="213.3" r="0.8" fill="#000" opacity="0.40"/>
<circle cx="1077.6" cy="201.9" r="0.8" fill="#000" opacity="0.39"/>
<circle cx="1075.6" cy="213.4" r="0.7" fill="#000" opacity="0.36"/>
<circle cx="1074.7" cy="192.0" r="1.1" fill="#000" opacity="0.30"/>
<circle cx="1064.8" cy="214.3" r="0.5" fill="#000" opacity="0.25"/>
<circle cx="1083.9" cy="210.1" r="0.8" fill="#000" opacity="0.38"/>
<circle cx="1082.3" cy="212.2" r="1.1" fill="#000" opacity="0.48"/>
<circle cx="1080.8" cy="199.8" r="0.6" fill="#000" opacity="0.28"/>
<circle cx="1071.4" cy="209.8" r="0.7" fill="#000" opacity="0.23"/>
<circle cx="1084.1" cy="208.2" r="1.0" fill="#000" opacity="0.52"/>
<circle cx="1068.1" cy="212.1" r="0.8" fill="#000" opacity="0.51"/>
<circle cx="1070.1" cy="213.9" r="0.8" fill="#000" opacity="0.53"/>
<circle cx="1072.6" cy="205.6" r="0.7" fill="#000" opacity="0.55"/>
<circle cx="1077.4" cy="214.3" r="0.5" fill="#000" opacity="0.32"/>
<circle cx="1070.3" cy="202.0" r="0.7" fill="#000" opacity="0.44"/>
<circle cx="1065.0" cy="212.4" r="1.0" fill="#000" opacity="0.32"/>
<circle cx="1073.7" cy="193.6" r="0.8" fill="#000" opacity="0.44"/>
<circle cx="1063.5" cy="200.3" r="0.9" fill="#000" opacity="0.32"/>
<circle cx="1067.0" cy="196.0" r="0.7" fill="#000" opacity="0.56"/>
<circle cx="1069.5" cy="214.0" r="0.8" fill="#000" opacity="0.44"/>
<circle cx="1077.0" cy="214.9" r="0.5" fill="#000" opacity="0.42"/>
<circle cx="1063.4" cy="208.3" r="1.0" fill="#000" opacity="0.59"/>
<circle cx="1074.5" cy="217.5" r="0.7" fill="#000" opacity="0.41"/>
<circle cx="1080.9" cy="207.3" r="0.5" fill="#fff" opacity="0.45"/>
<circle cx="1072.2" cy="210.2" r="0.5" fill="#fff" opacity="0.45"/>
<circle cx="1071.9" cy="210.0" r="0.7" fill="#fff" opacity="0.45"/>
<circle cx="1068.1" cy="211.4" r="0.9" fill="#fff" opacity="0.45"/>
<circle cx="1077.9" cy="202.6" r="0.7" fill="#fff" opacity="0.45"/>
<circle cx="1072.2" cy="196.9" r="0.6" fill="#fff" opacity="0.45"/>
<circle cx="1075.7" cy="212.8" r="0.7" fill="#fff" opacity="0.45"/>
<circle cx="1068.7" cy="211.3" r="0.4" fill="#fff" opacity="0.45"/>
<circle cx="1074.8" cy="196.1" r="0.9" fill="#fff" opacity="0.45"/>
<circle cx="1078.5" cy="210.2" r="0.8" fill="#fff" opacity="0.45"/>
<circle cx="1077.3" cy="210.8" r="0.5" fill="#fff" opacity="0.45"/>
<circle cx="1073.3" cy="206.6" r="0.5" fill="#fff" opacity="0.45"/>
<circle cx="1076.9" cy="199.0" r="0.8" fill="#fff" opacity="0.45"/>
<circle cx="1076.4" cy="204.3" r="0.8" fill="#fff" opacity="0.45"/>
<circle cx="1078.6" cy="200.3" r="0.6" fill="#fff" opacity="0.45"/>
<circle cx="1075.6" cy="210.7" r="0.6" fill="#fff" opacity="0.45"/>
<circle cx="1072.5" cy="212.9" r="0.7" fill="#fff" opacity="0.45"/>
<circle cx="1072.8" cy="209.0" r="0.6" fill="#fff" opacity="0.45"/>
<circle cx="1071.3" cy="197.4" r="0.7" fill="#fff" opacity="0.45"/>
<circle cx="1079.1" cy="200.0" r="0.6" fill="#fff" opacity="0.45"/>
<circle cx="1072.8" cy="197.2" r="0.6" fill="#fff" opacity="0.45"/>
<circle cx="1075.7" cy="210.1" r="0.8" fill="#fff" opacity="0.45"/>
<circle cx="1073.0" cy="199.7" r="0.7" fill="#fff" opacity="0.45"/>
<circle cx="1079.1" cy="208.4" r="0.6" fill="#fff" opacity="0.45"/>
<circle cx="1073.9" cy="196.1" r="0.4" fill="#fff" opacity="0.45"/>
<circle cx="1076.6" cy="204.1" r="0.9" fill="#fff" opacity="0.45"/>
<circle cx="1077.1" cy="204.6" r="0.5" fill="#fff" opacity="0.45"/>
<circle cx="1078.1" cy="212.2" r="0.8" fill="#fff" opacity="0.45"/>
<circle cx="1080.7" cy="203.2" r="0.6" fill="#fff" opacity="0.45"/>
<circle cx="1073.8" cy="199.3" r="0.6" fill="#fff" opacity="0.45"/>
<clipPath id="lace2"><circle cx="1102" cy="205" r="12.5"/></clipPath><g clip-path="url(#lace2)"><circle cx="1102" cy="205" r="12.5" fill="#333"/>
<circle cx="1100.2" cy="209.8" r="1.1" fill="#fafafa"/>
<circle cx="1103.4" cy="206.6" r="1.6" fill="#fafafa"/>
<circle cx="1101.3" cy="203.1" r="1.4" fill="#fafafa"/>
<circle cx="1101.1" cy="210.6" r="0.9" fill="#fafafa"/>
<circle cx="1094.3" cy="193.9" r="1.2" fill="#fafafa"/>
<circle cx="1110.4" cy="207.4" r="1.4" fill="#fafafa"/>
<circle cx="1112.5" cy="212.7" r="1.1" fill="#fafafa"/>
<circle cx="1095.3" cy="205.9" r="1.0" fill="#fafafa"/>
<circle cx="1104.3" cy="194.9" r="1.2" fill="#fafafa"/>
<circle cx="1107.3" cy="199.1" r="0.9" fill="#fafafa"/>
<circle cx="1108.0" cy="197.6" r="1.7" fill="#fafafa"/>
<circle cx="1104.7" cy="214.3" r="1.3" fill="#fafafa"/>
<circle cx="1101.7" cy="199.2" r="0.9" fill="#fafafa"/>
<circle cx="1112.9" cy="198.3" r="0.9" fill="#fafafa"/>
<circle cx="1112.4" cy="205.9" r="1.4" fill="#fafafa"/>
<circle cx="1112.1" cy="210.6" r="1.1" fill="#fafafa"/>
<circle cx="1096.8" cy="208.8" r="1.5" fill="#fafafa"/>
<circle cx="1095.4" cy="199.0" r="1.3" fill="#fafafa"/>
<circle cx="1091.4" cy="212.3" r="1.5" fill="#fafafa"/>
<circle cx="1093.6" cy="206.9" r="1.4" fill="#fafafa"/>
<circle cx="1092.1" cy="203.3" r="1.6" fill="#fafafa"/>
<circle cx="1100.9" cy="210.4" r="1.0" fill="#fafafa"/>
<circle cx="1114.0" cy="209.0" r="1.4" fill="#fafafa"/>
<circle cx="1090.3" cy="201.5" r="0.8" fill="#fafafa"/>
<circle cx="1100.5" cy="197.2" r="1.0" fill="#fafafa"/>
<circle cx="1097.3" cy="196.5" r="1.1" fill="#fafafa"/>
<circle cx="1102.1" cy="196.2" r="1.4" fill="#fafafa"/>
<circle cx="1112.8" cy="210.3" r="1.8" fill="#fafafa"/>
<circle cx="1092.6" cy="208.9" r="1.0" fill="#fafafa"/>
<circle cx="1112.4" cy="204.9" r="1.5" fill="#fafafa"/>
<circle cx="1108.6" cy="196.2" r="0.9" fill="#fafafa"/>
<circle cx="1109.5" cy="212.7" r="1.2" fill="#fafafa"/>
<circle cx="1090.6" cy="193.6" r="1.6" fill="#fafafa"/>
<circle cx="1106.7" cy="202.0" r="1.5" fill="#fafafa"/>
<circle cx="1109.4" cy="193.2" r="1.5" fill="#fafafa"/>
<circle cx="1113.5" cy="213.9" r="1.7" fill="#fafafa"/>
<circle cx="1100.6" cy="207.6" r="0.9" fill="#fafafa"/>
<circle cx="1109.0" cy="208.8" r="1.2" fill="#fafafa"/>
<circle cx="1091.2" cy="197.3" r="1.2" fill="#fafafa"/>
<circle cx="1112.1" cy="204.3" r="1.7" fill="#fafafa"/>
<circle cx="1094.5" cy="199.1" r="1.0" fill="#fafafa"/>
<circle cx="1096.9" cy="212.1" r="1.2" fill="#fafafa"/>
<circle cx="1097.7" cy="209.3" r="1.2" fill="#fafafa"/>
<circle cx="1111.1" cy="209.7" r="1.6" fill="#fafafa"/>
<circle cx="1100.3" cy="202.5" r="1.3" fill="#fafafa"/>
</g>
<defs><linearGradient id="darkG" x1="0" y1="0" x2="0.7" y2="1"><stop offset="0.2" stop-color="#000"/><stop offset="1" stop-color="#000" stop-opacity="0.35"/></linearGradient></defs>
<circle cx="1131" cy="205" r="12" fill="url(#darkG)"/>
<circle cx="1140.8" cy="215.2" r="0.9" fill="#fff" opacity="0.6"/>
<circle cx="1130.9" cy="202.1" r="1.1" fill="#fff" opacity="0.6"/>
<circle cx="1133.2" cy="207.2" r="0.6" fill="#fff" opacity="0.6"/>
<circle cx="1130.4" cy="211.6" r="0.7" fill="#fff" opacity="0.6"/>
<circle cx="1126.3" cy="208.7" r="0.8" fill="#fff" opacity="0.6"/>
<circle cx="1121.1" cy="201.9" r="0.8" fill="#fff" opacity="0.6"/>
<circle cx="1135.2" cy="206.7" r="0.5" fill="#fff" opacity="0.6"/>
<circle cx="1125.9" cy="203.9" r="1.0" fill="#fff" opacity="0.6"/>
<circle cx="1125.6" cy="215.7" r="0.7" fill="#fff" opacity="0.6"/>
<circle cx="1124.6" cy="201.3" r="0.8" fill="#fff" opacity="0.6"/>
<circle cx="1131.3" cy="212.7" r="1.0" fill="#fff" opacity="0.6"/>
<circle cx="1131.9" cy="201.8" r="1.1" fill="#fff" opacity="0.6"/>
<circle cx="1126.0" cy="204.5" r="0.6" fill="#fff" opacity="0.6"/>
<circle cx="1132.8" cy="210.8" r="0.7" fill="#fff" opacity="0.6"/>
<circle cx="1126.1" cy="201.2" r="0.9" fill="#fff" opacity="0.6"/>
<circle cx="1135.2" cy="202.8" r="0.7" fill="#fff" opacity="0.6"/>
<circle cx="1136.0" cy="211.7" r="0.6" fill="#fff" opacity="0.6"/>
<circle cx="1140.8" cy="211.7" r="1.0" fill="#fff" opacity="0.6"/>
<circle cx="1127.4" cy="215.5" r="0.8" fill="#fff" opacity="0.6"/>
<circle cx="1133.7" cy="215.7" r="1.1" fill="#fff" opacity="0.6"/>
<circle cx="1124.5" cy="203.0" r="0.6" fill="#fff" opacity="0.6"/>
<circle cx="1123.4" cy="214.3" r="0.9" fill="#fff" opacity="0.6"/>
<circle cx="1130.5" cy="206.5" r="0.8" fill="#fff" opacity="0.6"/>
<circle cx="1129.7" cy="211.9" r="0.8" fill="#fff" opacity="0.6"/>
<circle cx="1138.3" cy="213.7" r="1.1" fill="#fff" opacity="0.6"/>
<circle cx="1136.0" cy="203.6" r="0.8" fill="#fff" opacity="0.6"/>
<circle cx="1137.8" cy="206.3" r="0.9" fill="#fff" opacity="0.6"/>
<circle cx="1125.2" cy="213.4" r="0.7" fill="#fff" opacity="0.6"/>
<circle cx="1128.2" cy="213.3" r="0.6" fill="#fff" opacity="0.6"/>
<circle cx="1121.1" cy="207.4" r="0.8" fill="#fff" opacity="0.6"/>
<circle cx="1123.3" cy="206.9" r="1.0" fill="#fff" opacity="0.6"/>
<circle cx="1138.7" cy="214.8" r="1.1" fill="#fff" opacity="0.6"/>
<circle cx="1122.5" cy="206.5" r="0.8" fill="#fff" opacity="0.6"/>
<circle cx="1121.6" cy="212.7" r="0.7" fill="#fff" opacity="0.6"/>
<circle cx="1136.6" cy="211.1" r="0.7" fill="#fff" opacity="0.6"/>
<circle cx="1127.8" cy="207.7" r="0.6" fill="#fff" opacity="0.6"/>
<circle cx="1121.2" cy="207.3" r="0.7" fill="#fff" opacity="0.6"/>
<circle cx="1126.1" cy="212.8" r="1.0" fill="#fff" opacity="0.6"/>
<circle cx="1129.2" cy="201.4" r="1.0" fill="#fff" opacity="0.6"/>
<circle cx="1126.3" cy="202.5" r="1.0" fill="#fff" opacity="0.6"/>
<path d="M1024,216 H1028 M1026,214 V218" stroke="#222" stroke-width="1.2"/>
<path d="M1053,216 H1057 M1055,214 V218" stroke="#222" stroke-width="1.2"/>
<rect x="1082.5" y="213.5" width="5" height="5" fill="#f06060" opacity="0.7"/>
<path d="M1083,216 H1087 M1085,214 V218" stroke="#111" stroke-width="1.2"/>
<rect x="1111.0" y="213.5" width="5" height="5" fill="#f06060" opacity="0.7"/>
<path d="M1111.5,216 H1115.5 M1113.5,214 V218" stroke="#111" stroke-width="1.2"/>
<rect x="1140.5" y="213.5" width="5" height="5" fill="#f06060" opacity="0.7"/>
<path d="M1141,216 H1145 M1143,214 V218" stroke="#111" stroke-width="1.2"/>
<ellipse cx="1015" cy="234" rx="11" ry="6.5" fill="#222"/>
<circle cx="1022.3" cy="231.8" r="1.1" fill="#fff"/>
<circle cx="1022.0" cy="234.2" r="0.9" fill="#fff"/>
<circle cx="1008.8" cy="229.7" r="1.4" fill="#fff"/>
<circle cx="1020.6" cy="231.1" r="1.2" fill="#fff"/>
<circle cx="1009.5" cy="236.2" r="0.9" fill="#fff"/>
<circle cx="1018.5" cy="234.3" r="0.7" fill="#fff"/>
<circle cx="1016.2" cy="235.4" r="0.6" fill="#fff"/>
<circle cx="1006.7" cy="231.9" r="1.2" fill="#fff"/>
<circle cx="1023.6" cy="233.5" r="1.4" fill="#fff"/>
<circle cx="1018.8" cy="232.0" r="1.0" fill="#fff"/>
<circle cx="1021.2" cy="233.8" r="1.1" fill="#fff"/>
<circle cx="1019.0" cy="230.8" r="1.0" fill="#fff"/>
<circle cx="1015.4" cy="234.6" r="1.2" fill="#fff"/>
<circle cx="1010.9" cy="233.8" r="1.0" fill="#fff"/>
<circle cx="1007.9" cy="236.6" r="1.5" fill="#fff"/>
<circle cx="1016.1" cy="233.2" r="0.9" fill="#fff"/>
<circle cx="1014.2" cy="232.8" r="0.8" fill="#fff"/>
<circle cx="1023.1" cy="232.8" r="0.8" fill="#fff"/>
<circle cx="1017.9" cy="229.5" r="0.9" fill="#fff"/>
<circle cx="1016.1" cy="236.9" r="0.9" fill="#fff"/>
<circle cx="1006.9" cy="238.2" r="0.6" fill="#fff"/>
<circle cx="1013.5" cy="234.1" r="1.5" fill="#fff"/>
<circle cx="1012.4" cy="231.7" r="0.9" fill="#fff"/>
<circle cx="1012.8" cy="230.8" r="1.4" fill="#fff"/>
<circle cx="1015.2" cy="236.1" r="0.8" fill="#fff"/>
<rect x="1033" y="228" width="22" height="13" rx="2" fill="#888"/>
<rect x="1047.0" y="238.9" width="1.5" height="0.8" fill="#fff" opacity="0.7"/>
<rect x="1037.8" y="239.5" width="1.5" height="0.8" fill="#fff" opacity="0.7"/>
<rect x="1039.0" y="236.6" width="1.5" height="0.8" fill="#fff" opacity="0.7"/>
<rect x="1052.8" y="233.6" width="1.5" height="0.8" fill="#fff" opacity="0.7"/>
<rect x="1052.6" y="232.7" width="1.5" height="0.8" fill="#fff" opacity="0.7"/>
<rect x="1042.2" y="239.1" width="1.5" height="0.8" fill="#fff" opacity="0.7"/>
<rect x="1045.6" y="228.6" width="1.5" height="0.8" fill="#fff" opacity="0.7"/>
<rect x="1036.1" y="234.4" width="1.5" height="0.8" fill="#fff" opacity="0.7"/>
<rect x="1040.1" y="228.7" width="1.5" height="0.8" fill="#fff" opacity="0.7"/>
<rect x="1050.1" y="231.9" width="1.5" height="0.8" fill="#fff" opacity="0.7"/>
<rect x="1052.0" y="232.4" width="1.5" height="0.8" fill="#fff" opacity="0.7"/>
<rect x="1036.9" y="233.1" width="1.5" height="0.8" fill="#fff" opacity="0.7"/>
<rect x="1050.4" y="238.9" width="1.5" height="0.8" fill="#fff" opacity="0.7"/>
<rect x="1044.8" y="231.0" width="1.5" height="0.8" fill="#fff" opacity="0.7"/>
<rect x="1044.1" y="231.1" width="1.5" height="0.8" fill="#fff" opacity="0.7"/>
<rect x="1040.6" y="228.1" width="1.5" height="0.8" fill="#fff" opacity="0.7"/>
<rect x="1033.4" y="239.2" width="1.5" height="0.8" fill="#fff" opacity="0.7"/>
<rect x="1049.1" y="230.9" width="1.5" height="0.8" fill="#fff" opacity="0.7"/>
<rect x="1045.9" y="228.5" width="1.5" height="0.8" fill="#fff" opacity="0.7"/>
<rect x="1050.4" y="235.4" width="1.5" height="0.8" fill="#fff" opacity="0.7"/>
<rect x="1048.1" y="233.2" width="1.5" height="0.8" fill="#fff" opacity="0.7"/>
<rect x="1042.1" y="237.8" width="1.5" height="0.8" fill="#fff" opacity="0.7"/>
<rect x="1039.7" y="228.9" width="1.5" height="0.8" fill="#fff" opacity="0.7"/>
<rect x="1035.4" y="239.0" width="1.5" height="0.8" fill="#fff" opacity="0.7"/>
<rect x="1038.8" y="228.8" width="1.5" height="0.8" fill="#fff" opacity="0.7"/>
<rect x="1044.9" y="229.6" width="1.5" height="0.8" fill="#fff" opacity="0.7"/>
<rect x="1042.0" y="237.3" width="1.5" height="0.8" fill="#fff" opacity="0.7"/>
<rect x="1037.9" y="233.1" width="1.5" height="0.8" fill="#fff" opacity="0.7"/>
<rect x="1052.6" y="238.4" width="1.5" height="0.8" fill="#fff" opacity="0.7"/>
<rect x="1051.2" y="228.4" width="1.5" height="0.8" fill="#fff" opacity="0.7"/>
<rect x="1053.4" y="234.7" width="1.5" height="0.8" fill="#fff" opacity="0.7"/>
<rect x="1036.2" y="239.8" width="1.5" height="0.8" fill="#fff" opacity="0.7"/>
<rect x="1035.6" y="239.8" width="1.5" height="0.8" fill="#fff" opacity="0.7"/>
<rect x="1033.6" y="228.9" width="1.5" height="0.8" fill="#fff" opacity="0.7"/>
<rect x="1042.9" y="235.3" width="1.5" height="0.8" fill="#fff" opacity="0.7"/>
<rect x="1045.3" y="237.8" width="1.5" height="0.8" fill="#fff" opacity="0.7"/>
<rect x="1035.3" y="236.7" width="1.5" height="0.8" fill="#fff" opacity="0.7"/>
<rect x="1039.7" y="239.5" width="1.5" height="0.8" fill="#fff" opacity="0.7"/>
<rect x="1046.1" y="236.3" width="1.5" height="0.8" fill="#fff" opacity="0.7"/>
<rect x="1035.8" y="239.0" width="1.5" height="0.8" fill="#fff" opacity="0.7"/>
<rect x="1072.2" y="229.3" width="1" height="1" fill="#444"/>
<rect x="1072.7" y="238.5" width="1" height="1" fill="#444"/>
<rect x="1072.3" y="233.5" width="1" height="1" fill="#444"/>
<rect x="1073.4" y="230.0" width="1" height="1" fill="#444"/>
<rect x="1071.5" y="232.5" width="1" height="1" fill="#444"/>
<rect x="1073.9" y="236.9" width="1" height="1" fill="#444"/>
<rect x="1071.8" y="236.5" width="1" height="1" fill="#444"/>
<rect x="1074.3" y="237.3" width="1" height="1" fill="#444"/>
<rect x="1071.7" y="226.7" width="1" height="1" fill="#444"/>
<rect x="1074.9" y="237.4" width="1" height="1" fill="#444"/>
<rect x="1072.1" y="237.9" width="1" height="1" fill="#444"/>
<rect x="1073.3" y="236.1" width="1" height="1" fill="#444"/>
<path d="M1099.2,237.4 l3,1.5" stroke="#777" stroke-width="1.2"/>
<path d="M1099.6,233.4 l3,1.5" stroke="#777" stroke-width="1.2"/>
<path d="M1098.5,238.3 l3,1.5" stroke="#777" stroke-width="1.2"/>
<path d="M1109.2,232.1 l3,1.5" stroke="#777" stroke-width="1.2"/>
<path d="M1093.5,231.5 l3,1.5" stroke="#777" stroke-width="1.2"/>
<path d="M1107.1,233.0 l3,1.5" stroke="#777" stroke-width="1.2"/>
<path d="M1092.2,239.8 l3,1.5" stroke="#777" stroke-width="1.2"/>
<path d="M1100.7,228.9 l3,1.5" stroke="#777" stroke-width="1.2"/>
<path d="M1106.9,235.1 l3,1.5" stroke="#777" stroke-width="1.2"/>
<path d="M1120,228 L1124,236 L1140,234 L1142,242 M1128,234 L1126,242" fill="none" stroke="#888" stroke-width="1"/>
<rect x="1000" y="245" width="167" height="16" fill="#222222" />
<text x="1001.66" y="256.6" font-size="10.5" fill="#d2d2d2" textLength="25.15" lengthAdjust="spacingAndGlyphs" >Basic,</text>
<path d="M1155.2,251.25 L1158.7,255.75 L1162.2,251.25" fill="none" stroke="#e0e0e0" stroke-width="1.3"/>
<rect x="1000.5" y="262.5" width="167" height="14" fill="#2d2d2d" stroke="#6a6a6a" stroke-width="1" />
<rect x="1001" y="263" width="4" height="13" fill="#5a5a5a" />
<rect x="1005" y="263" width="1" height="13" fill="#151515" />
<text x="999.99" y="272.7" font-size="10.5" fill="#d2d2d2" textLength="32.58" lengthAdjust="spacingAndGlyphs" >Spacing</text>
<text x="1137.67" y="272.7" font-size="10.5" fill="#d2d2d2" textLength="18.88" lengthAdjust="spacingAndGlyphs" >10.0</text>
<path d="M1160.5,267.5 L1163,265 L1165.5,267.5 M1160.5,271.5 L1163,274 L1165.5,271.5" fill="none" stroke="#d0d0d0" stroke-width="1.1"/>
<path d="M1008,282 H1013 M1008,286 H1011 M1008,290 H1017 M1012,288 L1018,282" fill="none" stroke="#bdbdbd" stroke-width="1.2"/>
<path d="M1036,283 H1042 L1045,286 V292 H1036 Z" fill="none" stroke="#bdbdbd" stroke-width="1.2"/><path d="M1036,281 V285 M1034,283 H1038" stroke="#bdbdbd" stroke-width="1.2"/>
<rect x="1063.5" y="282.5" width="6" height="5" fill="none" stroke="#bdbdbd" stroke-width="1"/><path d="M1066,289.5 H1072.5 V285" fill="none" stroke="#bdbdbd" stroke-width="1"/>
<rect x="1089.5" y="281.5" width="11" height="11" fill="none" stroke="#bdbdbd" stroke-width="1.4"/><path d="M1090,282 L1100,292 M1100,282 L1090,292" stroke="#bdbdbd" stroke-width="1.4"/>
<path d="M1126,283 A5,5 0 1 0 1127,290" fill="none" stroke="#bdbdbd" stroke-width="1.5"/><path d="M1124,281 L1128,281 L1128,285 Z" fill="#bdbdbd"/>
<path d="M1148,292 V285 L1151,282 H1156 V292" fill="none" stroke="#bdbdbd" stroke-width="1.2"/><rect x="1147" y="289" width="11" height="3" fill="#bdbdbd"/>
<rect x="997" y="298" width="171" height="1" fill="#585858" />
<rect x="1083" y="299" width="3" height="2" fill="#777"/><rect x="1089" y="299" width="3" height="2" fill="#777"/>
<rect x="1044" y="304" width="96" height="16" fill="#2c2c2c" />
<path d="M997.5,320 V302.5 H1043.5 V320" fill="none" stroke="#585858" stroke-width="1"/>
<rect x="997" y="320" width="171" height="1" fill="#585858" />
<rect x="995" y="305" width="2" height="2.5" fill="#8a8a8a" />
<rect x="995" y="309.5" width="2" height="2.5" fill="#8a8a8a" />
<rect x="995" y="314" width="2" height="2.5" fill="#8a8a8a" />
<path d="M1002.5,305.5 H1010.5 L1009,308 H1001 Z M1002.5,309.5 H1010.5 L1009,312 H1001 Z M1002.5,313.5 H1010.5 L1009,316 H1001 Z" fill="#bdbdbd"/>
<text x="1011.05" y="314.6" font-size="10.5" fill="#d2d2d2" textLength="28.3" lengthAdjust="spacingAndGlyphs" >Layers</text>
<rect x="1045.5" y="306.5" width="10" height="11" fill="none" stroke="#c0c0c0" stroke-width="1"/><path d="M1048.5,308 V316 M1050.5,308 V316 M1052.5,308 V316" stroke="#909090" stroke-width="1"/>
<text x="1056.85" y="314.6" font-size="10.5" fill="#d2d2d2" textLength="38.37" lengthAdjust="spacingAndGlyphs" >Channels</text>
<path d="M1101,315 Q1106,306 1111,315" fill="none" stroke="#bdbdbd" stroke-width="1.3"/><path d="M1101,308 H1111" stroke="#bdbdbd" stroke-width="1.2"/><circle cx="1103" cy="308" r="1" fill="#bdbdbd"/><circle cx="1109" cy="308" r="1" fill="#bdbdbd"/>
<text x="1112.44" y="314.6" font-size="10.5" fill="#d2d2d2" textLength="24.31" lengthAdjust="spacingAndGlyphs" >Paths</text>
<rect x="1158.5" y="306.5" width="8" height="8" fill="none" stroke="#9a9a9a" stroke-width="1"/><path d="M1160.5,310.5 L1165,308 L1165,313 Z" fill="#9a9a9a"/>
<rect x="999.5" y="322" width="130" height="23" fill="#2b2b2b" rx="3" />
<text x="1004.15" y="337.5" font-size="10.5" fill="#d2d2d2" textLength="23.38" lengthAdjust="spacingAndGlyphs" >Mode</text>
<text x="1078.47" y="337.5" font-size="10.5" fill="#d2d2d2" textLength="29.56" lengthAdjust="spacingAndGlyphs" >Normal</text>
<path d="M1114.2,330.6 L1119.4,336.0 L1124.6000000000001,330.6" fill="none" stroke="#e0e0e0" stroke-width="1.3"/>
<rect x="1132" y="322" width="35" height="23" fill="#2b2b2b" rx="3" />
<path d="M1139,331 A4,4 0 1 1 1141.5,338" fill="none" stroke="#bdbdbd" stroke-width="1.3"/><path d="M1137,330 L1140,328 L1140,332 Z" fill="#bdbdbd"/><circle cx="1139" cy="338.5" r="1.2" fill="#bdbdbd"/>
<path d="M1151.8,330.6 L1157,336.0 L1162.2,330.6" fill="none" stroke="#e0e0e0" stroke-width="1.3"/>
<rect x="999.5" y="346" width="167.5" height="15" fill="#5a5a5a" stroke="#7a7a7a" stroke-width="1" />
<rect x="1157.5" y="346.5" width="1" height="14" fill="#111" />
<rect x="1158.5" y="346.5" width="8" height="14" fill="#3a3a3a" />
<text x="1000.17" y="357.5" font-size="10.5" fill="#d2d2d2" textLength="32.03" lengthAdjust="spacingAndGlyphs" >Opacity</text>
<text x="1132.68" y="357.5" font-size="10.5" fill="#d2d2d2" textLength="23.98" lengthAdjust="spacingAndGlyphs" >100.0</text>
<path d="M1159.5,351 L1162.5,348.5 L1165.5,351 M1159.5,355.5 L1162.5,358 L1165.5,355.5" fill="none" stroke="#9a9a9a" stroke-width="1"/>
<path d="M1159.5,355.5 L1162.5,358 L1165.5,355.5" fill="none" stroke="#e0e0e0" stroke-width="1.1"/>
<text x="998.13" y="375.9" font-size="10.5" fill="#d2d2d2" textLength="22.98" lengthAdjust="spacingAndGlyphs" >Lock:</text>
<path d="M1036,366 L1030,374" stroke="#bdbdbd" stroke-width="1.5"/><path d="M1029,373 L1031,375 L1027,377 Z" fill="#bdbdbd"/>
<path d="M1046,371.5 H1058 M1052,366 V378" stroke="#bdbdbd" stroke-width="1.2"/><path d="M1052,365 L1050,367.5 H1054 Z M1052,378.5 L1050,376 H1054 Z M1045,371.5 L1047.5,369.5 V373.5 Z M1059,371.5 L1056.5,369.5 V373.5 Z" fill="#bdbdbd"/>
<defs><pattern id="chk" width="3.6" height="3.6" patternUnits="userSpaceOnUse" x="1067" y="366"><rect width="3.6" height="3.6" fill="#9a9a9a"/><rect width="1.8" height="1.8" fill="#5a5a5a"/><rect x="1.8" y="1.8" width="1.8" height="1.8" fill="#5a5a5a"/></pattern></defs>
<rect x="1067" y="366" width="11" height="11" fill="url(#chk)" />
<rect x="1000" y="382" width="167" height="187" fill="#333333" />
<rect x="1000" y="382" width="167" height="27" fill="#1f1f1f" />
<path d="M1004,396 Q1012.5,387 1021,396 Q1012.5,405 1004,396 Z" fill="none" stroke="#d0d0d0" stroke-width="1.5"/><circle cx="1012.5" cy="395.5" r="3" fill="#d0d0d0"/><circle cx="1013.5" cy="394.5" r="1" fill="#1f1f1f"/>
<rect x="1064.5" y="384" width="31" height="24" fill="#ffffff" />
<rect x="1066" y="385.5" width="17.5" height="13" fill="#ffee64" />
<rect x="1083.5" y="385.5" width="10.3" height="13" fill="#c5a3fd" />
<rect x="1066" y="398.5" width="17.5" height="7.6" fill="#80f4fb" />
<rect x="1083.5" y="398.5" width="10.3" height="7.6" fill="#fda3f3" />
<circle cx="1074.9" cy="392" r="2.2" fill="none" stroke="#f78fd8" stroke-width="1.6"/><circle cx="1084" cy="399" r="4.3" fill="#e8e8e8"/><circle cx="1083.5" cy="398.5" r="2.3" fill="#1e0a08"/>
<clipPath id="lyrclip"><rect x="1096" y="382" width="71" height="27"/></clipPath>
<g clip-path="url(#lyrclip)">
<text x="1098.68" y="399.1" font-size="10.5" fill="#e8e8e8" textLength="69.08" lengthAdjust="spacingAndGlyphs" font-weight="bold" >coffee-451835</text>
</g>
<rect x="999" y="570" width="169" height="13" fill="#242424" />
<rect x="1000" y="570.5" width="140" height="12" fill="#5a5a5a" rx="2" />
<path d="M1005,588 H1010 L1013,591 V598 H1005 Z" fill="none" stroke="#bdbdbd" stroke-width="1.2"/><path d="M1006,585 V590 M1003.5,587.5 H1008.5" stroke="#bdbdbd" stroke-width="1.2"/>
<path d="M1024.5,587.5 H1029 L1030,589 H1035.5 V598.5 H1024.5 Z" fill="none" stroke="#bdbdbd" stroke-width="1.2"/><path d="M1030,591 V597 M1027,594 H1033" stroke="#bdbdbd" stroke-width="1.5"/>
<path d="M1045.5,595 L1050,590.5 L1054.5,595" fill="none" stroke="#bdbdbd" stroke-width="1.5"/>
<path d="M1066.5,590 L1071,594.5 L1075.5,590" fill="none" stroke="#bdbdbd" stroke-width="1.5"/>
<rect x="1087.5" y="588.5" width="6" height="5" fill="none" stroke="#bdbdbd" stroke-width="1"/><path d="M1090,595.5 H1096.5 V591" fill="none" stroke="#bdbdbd" stroke-width="1"/>
<path d="M1106,589 H1113 M1106,593 H1113 M1106,597 H1113 M1116,587 V597 M1114,595 L1116,598 L1118,595" fill="none" stroke="#bdbdbd" stroke-width="1.4"/>
<path d="M1127,597 L1131,593 H1137 L1136,597 Z" fill="#bdbdbd"/><rect x="1129.5" y="586.5" width="6" height="5" fill="none" stroke="#bdbdbd" stroke-width="1"/>
<rect x="1150.5" y="586.5" width="11" height="11" fill="none" stroke="#bdbdbd" stroke-width="1.5"/><path d="M1151,587 L1161,597 M1161,587 L1151,597" stroke="#bdbdbd" stroke-width="1.5"/>
</svg>
</body></html>
